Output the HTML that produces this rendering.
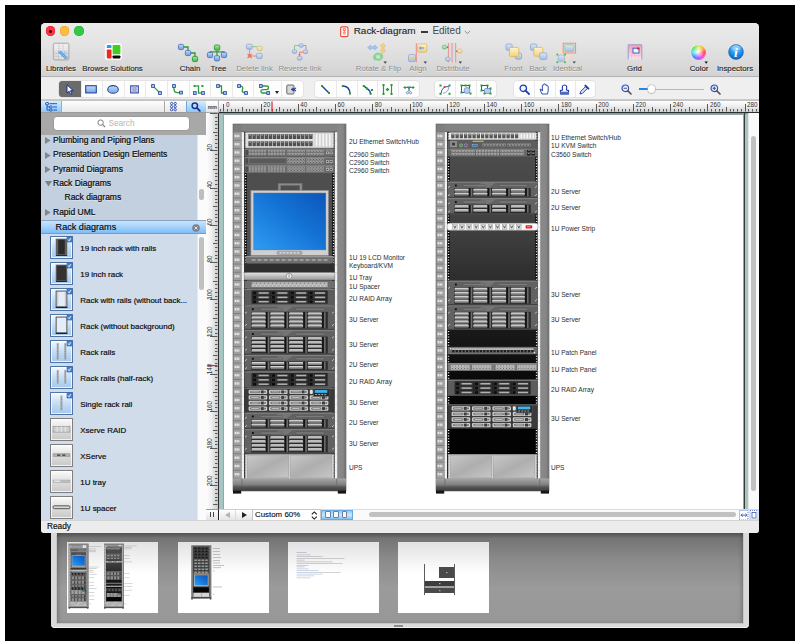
<!DOCTYPE html>
<html><head><meta charset="utf-8"><title>Rack-diagram</title>
<style>
*{box-sizing:border-box;margin:0;padding:0}
html,body{width:800px;height:644px;overflow:hidden;background:#fff;font-family:"Liberation Sans",sans-serif;}
.abs{position:absolute}
#black{position:absolute;left:5px;top:5px;width:790px;height:636px;background:#000}
#win{position:absolute;left:41px;top:23px;width:718px;height:509.5px;background:#ececec;border-radius:4.5px 4.5px 3.5px 3.5px;overflow:hidden}
#tb{position:absolute;left:0;top:0;width:718px;height:54px;background:linear-gradient(#ebebeb,#e4e4e4 40%,#d3d3d3);border-bottom:1px solid #b4b4b4}
.tl{position:absolute;top:3.2px;width:9.6px;height:9.6px;border-radius:50%}
.lbl{position:absolute;top:41.1px;font-size:7.85px;color:#1c1c1c;-webkit-text-stroke:.12px #222;white-space:nowrap;transform:translateX(-50%);text-shadow:0 1px 0 rgba(255,255,255,.6)}
.lbl.dim{color:#8e8e8e;-webkit-text-stroke:0}
#tools{position:absolute;left:0;top:55px;width:718px;height:22px;background:#efefef;border-bottom:1px solid #c9c9c9}
.grp{position:absolute;top:3px;height:16px;background:#fdfdfd;border-radius:3px;box-shadow:0 0 0 0.5px #d8d8d8}
.sep{position:absolute;top:0;width:1px;height:16px;background:#e9e9e9}
svg{position:absolute;overflow:visible}
.t{position:absolute;white-space:nowrap}
</style></head><body>
<div id="black"></div>

<div class="abs" style="left:51px;top:530px;width:698px;height:98px;background:#d9d9d9;border-radius:0 0 4px 4px;box-shadow:inset 0 -1px 0 #f2f2f2"></div>
<div class="abs" style="left:57px;top:531px;width:686px;height:91.5px;background:linear-gradient(#4e4e4e,#5c5c5c 4%,#747474 8%,#8a8a8a 30%,#9b9b9b 62%,#979797);box-shadow: inset 3px 0 4px -2px rgba(0,0,0,.25), inset -3px 0 4px -2px rgba(0,0,0,.25), 0 0 0 1px #c6c6c6"></div>
<div class="abs" style="left:394px;top:625px;width:9px;height:1.5px;background:#8a8a8a"></div>
<div class="abs" style="left:67px;top:542px;width:91px;height:71px;background:linear-gradient(#e2e2e2,#fff 45%);overflow:hidden"><svg style="left:0;top:0" width="91" height="71" viewBox="0 0 91 71"><g transform="scale(0.1753)"><use href="#rk1" x="9" y="9.8"/><use href="#rk2" x="211.5" y="9.8"/></g><rect x="21.92" y="4.35" width="12.27" height=".6" fill="#888" opacity=".55"/><rect x="21.92" y="6.63" width="7.01" height=".6" fill="#888" opacity=".55"/><rect x="21.92" y="8.05" width="7.01" height=".6" fill="#888" opacity=".55"/><rect x="21.92" y="9.47" width="7.01" height=".6" fill="#888" opacity=".55"/><rect x="21.92" y="24.72" width="9.82" height=".6" fill="#888" opacity=".55"/><rect x="21.92" y="26.14" width="7.71" height=".6" fill="#888" opacity=".55"/><rect x="21.92" y="28.25" width="4.21" height=".6" fill="#888" opacity=".55"/><rect x="21.92" y="29.77" width="5.26" height=".6" fill="#888" opacity=".55"/><rect x="21.92" y="31.93" width="7.71" height=".6" fill="#888" opacity=".55"/><rect x="21.92" y="35.51" width="5.26" height=".6" fill="#888" opacity=".55"/><rect x="21.92" y="39.89" width="5.26" height=".6" fill="#888" opacity=".55"/><rect x="21.92" y="43.45" width="5.26" height=".6" fill="#888" opacity=".55"/><rect x="21.92" y="46.38" width="7.71" height=".6" fill="#888" opacity=".55"/><rect x="21.92" y="50.06" width="5.26" height=".6" fill="#888" opacity=".55"/><rect x="21.92" y="53.57" width="5.26" height=".6" fill="#888" opacity=".55"/><rect x="21.92" y="57.25" width="5.26" height=".6" fill="#888" opacity=".55"/><rect x="21.92" y="61.54" width="2.10" height=".6" fill="#888" opacity=".55"/><rect x="57.34" y="3.63" width="12.27" height=".6" fill="#888" opacity=".55"/><rect x="57.34" y="5.10" width="7.71" height=".6" fill="#888" opacity=".55"/><rect x="57.34" y="6.61" width="7.01" height=".6" fill="#888" opacity=".55"/><rect x="57.34" y="13.06" width="5.26" height=".6" fill="#888" opacity=".55"/><rect x="57.34" y="15.96" width="5.26" height=".6" fill="#888" opacity=".55"/><rect x="57.34" y="19.60" width="7.71" height=".6" fill="#888" opacity=".55"/><rect x="57.34" y="31.21" width="5.26" height=".6" fill="#888" opacity=".55"/><rect x="57.34" y="35.51" width="5.26" height=".6" fill="#888" opacity=".55"/><rect x="57.34" y="41.35" width="8.07" height=".6" fill="#888" opacity=".55"/><rect x="57.34" y="44.27" width="8.07" height=".6" fill="#888" opacity=".55"/><rect x="57.34" y="47.87" width="7.71" height=".6" fill="#888" opacity=".55"/><rect x="57.34" y="52.95" width="5.26" height=".6" fill="#888" opacity=".55"/><rect x="57.34" y="61.54" width="2.10" height=".6" fill="#888" opacity=".55"/></svg></div>
<div class="abs" style="left:178px;top:542px;width:91px;height:71px;background:linear-gradient(#e2e2e2,#fff 45%);overflow:hidden"><svg style="left:0;top:0" width="91" height="71" viewBox="0 0 91 71"><rect x="13.2" y="3.2" width="20.2" height="52.4" fill="#7c7c7c"/><rect x="15.1" y="4.5" width="16.2" height="49.4" fill="#2e2e2e"/><rect x="15.399999999999999" y="5.00" width="15.6" height="2.5" fill="#4a4a4a"/><rect x="16.40" y="5.60" width="2.5" height="1.5" fill="#1a1a1a"/><rect x="20.00" y="5.60" width="2.5" height="1.5" fill="#1a1a1a"/><rect x="23.60" y="5.60" width="2.5" height="1.5" fill="#1a1a1a"/><rect x="27.20" y="5.60" width="2.5" height="1.5" fill="#1a1a1a"/><rect x="15.399999999999999" y="8.00" width="15.6" height="2.5" fill="#4a4a4a"/><rect x="16.40" y="8.60" width="2.5" height="1.5" fill="#1a1a1a"/><rect x="20.00" y="8.60" width="2.5" height="1.5" fill="#1a1a1a"/><rect x="23.60" y="8.60" width="2.5" height="1.5" fill="#1a1a1a"/><rect x="27.20" y="8.60" width="2.5" height="1.5" fill="#1a1a1a"/><rect x="15.399999999999999" y="11.00" width="15.6" height="2.5" fill="#4a4a4a"/><rect x="16.40" y="11.60" width="2.5" height="1.5" fill="#1a1a1a"/><rect x="20.00" y="11.60" width="2.5" height="1.5" fill="#1a1a1a"/><rect x="23.60" y="11.60" width="2.5" height="1.5" fill="#1a1a1a"/><rect x="27.20" y="11.60" width="2.5" height="1.5" fill="#1a1a1a"/><rect x="15.399999999999999" y="14.00" width="15.6" height="2.5" fill="#4a4a4a"/><rect x="16.40" y="14.60" width="2.5" height="1.5" fill="#1a1a1a"/><rect x="20.00" y="14.60" width="2.5" height="1.5" fill="#1a1a1a"/><rect x="23.60" y="14.60" width="2.5" height="1.5" fill="#1a1a1a"/><rect x="27.20" y="14.60" width="2.5" height="1.5" fill="#1a1a1a"/><rect x="15.399999999999999" y="17.00" width="15.6" height="2.5" fill="#4a4a4a"/><rect x="16.40" y="17.60" width="2.5" height="1.5" fill="#9a9a9a"/><rect x="20.00" y="17.60" width="2.5" height="1.5" fill="#9a9a9a"/><rect x="23.60" y="17.60" width="2.5" height="1.5" fill="#9a9a9a"/><rect x="27.20" y="17.60" width="2.5" height="1.5" fill="#9a9a9a"/><rect x="15.399999999999999" y="20.00" width="15.6" height="2.5" fill="#4a4a4a"/><rect x="16.40" y="20.60" width="2.5" height="1.5" fill="#9a9a9a"/><rect x="20.00" y="20.60" width="2.5" height="1.5" fill="#9a9a9a"/><rect x="23.60" y="20.60" width="2.5" height="1.5" fill="#9a9a9a"/><rect x="27.20" y="20.60" width="2.5" height="1.5" fill="#9a9a9a"/><rect x="15.399999999999999" y="23.00" width="15.6" height="2.5" fill="#4a4a4a"/><rect x="16.40" y="23.60" width="2.5" height="1.5" fill="#9a9a9a"/><rect x="20.00" y="23.60" width="2.5" height="1.5" fill="#9a9a9a"/><rect x="23.60" y="23.60" width="2.5" height="1.5" fill="#9a9a9a"/><rect x="27.20" y="23.60" width="2.5" height="1.5" fill="#9a9a9a"/><rect x="15.399999999999999" y="26.00" width="15.6" height="2.5" fill="#4a4a4a"/><rect x="16.40" y="26.60" width="2.5" height="1.5" fill="#9a9a9a"/><rect x="20.00" y="26.60" width="2.5" height="1.5" fill="#9a9a9a"/><rect x="23.60" y="26.60" width="2.5" height="1.5" fill="#9a9a9a"/><rect x="27.20" y="26.60" width="2.5" height="1.5" fill="#9a9a9a"/><rect x="15.399999999999999" y="29.00" width="15.6" height="2.5" fill="#4a4a4a"/><rect x="16.40" y="29.60" width="2.5" height="1.5" fill="#9a9a9a"/><rect x="20.00" y="29.60" width="2.5" height="1.5" fill="#9a9a9a"/><rect x="23.60" y="29.60" width="2.5" height="1.5" fill="#9a9a9a"/><rect x="27.20" y="29.60" width="2.5" height="1.5" fill="#9a9a9a"/><rect x="28.2" y="26.599999999999998" width="1.6" height="1.2" fill="#3ab6f2"/><rect x="15.399999999999999" y="31.4" width="15.6" height="1" fill="#c8a070"/><rect x="15.799999999999999" y="32.6" width="14.799999999999999" height="11.8" fill="#c8c8c8"/><rect x="16.599999999999998" y="33.2" width="13.2" height="10.2" fill="url(#scr)"/><rect x="15.6" y="45.6" width="15.2" height="4.6" fill="#050505"/><rect x="15.399999999999999" y="50.800000000000004" width="15.6" height="4" fill="#d6d6d6"/><rect x="23.2" y="50.800000000000004" width=".5" height="4" fill="#888"/><rect x="13.2" y="55.0" width="20.2" height="1.6" fill="#4a4a4a"/><rect x="13.2" y="56.6" width="1.6" height=".8" fill="#111"/><rect x="31.799999999999997" y="56.6" width="1.6" height=".8" fill="#111"/><rect x="35" y="6.2" width="7" height=".7" fill="#888" opacity=".7"/><rect x="35" y="9" width="7" height=".7" fill="#888" opacity=".7"/><rect x="35" y="12" width="7" height=".7" fill="#888" opacity=".7"/><rect x="35" y="15" width="8" height=".7" fill="#888" opacity=".7"/><rect x="35" y="18" width="7" height=".7" fill="#888" opacity=".7"/><rect x="35" y="20.6" width="7" height=".7" fill="#888" opacity=".7"/><rect x="35" y="23" width="11" height=".7" fill="#888" opacity=".7"/><rect x="35" y="25.4" width="8" height=".7" fill="#888" opacity=".7"/><rect x="35" y="28.6" width="1.5" height=".7" fill="#888" opacity=".7"/><rect x="35" y="44.6" width="9" height=".7" fill="#888" opacity=".7"/><rect x="35" y="51.8" width="1.2" height=".7" fill="#888" opacity=".7"/></svg></div>
<div class="abs" style="left:288px;top:542px;width:91px;height:71px;background:linear-gradient(#e2e2e2,#fff 45%);overflow:hidden"><svg style="left:0;top:0" width="91" height="71" viewBox="0 0 91 71"><rect x="8.6" y="10.3" width="10" height="0.6" fill="#444" opacity=".42"/><rect x="8.6" y="12.6" width="14" height="0.6" fill="#36c" opacity=".42"/><rect x="8.6" y="14.2" width="26" height="0.6" fill="#555" opacity=".42"/><rect x="8.6" y="16" width="48" height="0.6" fill="#555" opacity=".42"/><rect x="8.6" y="17.8" width="8" height="0.6" fill="#555" opacity=".42"/><rect x="8.6" y="19.6" width="36" height="0.6" fill="#555" opacity=".42"/><rect x="8.6" y="21.4" width="46" height="0.6" fill="#555" opacity=".42"/><rect x="8.6" y="23" width="12" height="0.6" fill="#555" opacity=".42"/><rect x="8.6" y="24.6" width="8" height="0.6" fill="#555" opacity=".42"/><rect x="8.6" y="26.6" width="12" height="0.6" fill="#36c" opacity=".42"/><rect x="8.6" y="28.4" width="22" height="0.6" fill="#36c" opacity=".42"/><rect x="8.6" y="30" width="44" height="0.6" fill="#555" opacity=".42"/><rect x="8.6" y="31.8" width="26" height="0.6" fill="#36c" opacity=".42"/><rect x="8.6" y="33.6" width="18" height="0.6" fill="#36c" opacity=".42"/><rect x="8.6" y="35.6" width="14" height="0.6" fill="#555" opacity=".42"/></svg></div>
<div class="abs" style="left:398px;top:542px;width:91px;height:71px;background:linear-gradient(#e2e2e2,#fff 45%);overflow:hidden"><svg style="left:0;top:0" width="91" height="71" viewBox="0 0 91 71"><rect x="26" y="22" width="0.8" height="31" fill="#333"/><rect x="56" y="22" width="0.8" height="31" fill="#333"/><rect x="41" y="25" width="15" height="11" fill="#4a4a4a"/><rect x="48" y="30" width="1.5" height="1.2" fill="#aaa"/><rect x="27" y="39" width="29" height="5.5" fill="#3c3c3c"/><rect x="41" y="41" width="1.5" height="1.2" fill="#aaa"/><rect x="27" y="45.5" width="29" height="5.5" fill="#4a4a4a"/><rect x="41" y="48" width="1.5" height="1.2" fill="#aaa"/></svg></div>
<div id="win">
<div id="tb">
<div class="tl" style="left:4.6000000000000005px;background:#fc3340;box-shadow:inset 0 0 0 .5px #e01f2c"></div>
<div class="tl" style="left:18.8px;background:#fdbc40;box-shadow:inset 0 0 0 .5px #dfa023"></div>
<div class="tl" style="left:33.1px;background:#34c84a;box-shadow:inset 0 0 0 .5px #27aa35"></div>
<div class="abs" style="left:7.7px;top:6.6px;width:3.6px;height:3.6px;border-radius:50%;background:#4d0000"></div>
<svg style="left:299.3px;top:2.6px" width="8.6" height="11.4" viewBox="0 0 11 14"><rect x=".8" y=".8" width="9.4" height="12.4" rx="1.8" fill="#fff" stroke="#e8503a" stroke-width="1.5"/><rect x="4" y="3.2" width="3" height="2.4" fill="none" stroke="#e8503a" stroke-width=".9"/><path d="M5.5 5.6v2.2M3.5 9.8h4M3.5 7.8h4" stroke="#e8503a" stroke-width=".9" fill="none"/></svg>
<div class="t" style="left:312.7px;top:2.3px;font-size:9.95px;color:#2a2a2a;-webkit-text-stroke:.15px #2a2a2a">Rack-diagram</div>
<div class="abs" style="left:380px;top:8.2px;width:7px;height:1.4px;background:#3a3a3a"></div>
<div class="t" style="left:391.4px;top:2.3px;font-size:10px;color:#484848">Edited</div>
<svg style="left:423.2px;top:6.6px" width="7" height="5" viewBox="0 0 7 5"><path d="M.8 1l2.7 2.6L6.2 1" stroke="#8a8a8a" stroke-width="1" fill="none"/></svg>
<div class="lbl" style="left:20px">Libraries</div>
<div class="lbl" style="left:71.5px">Browse Solutions</div>
<div class="lbl" style="left:149px">Chain</div>
<div class="lbl" style="left:177.5px">Tree</div>
<div class="lbl dim" style="left:213.5px">Delete link</div>
<div class="lbl dim" style="left:259px">Reverse link</div>
<div class="lbl dim" style="left:337.5px">Rotate &amp; Flip</div>
<div class="lbl dim" style="left:377px">Align</div>
<div class="lbl dim" style="left:412px">Distribute</div>
<div class="lbl dim" style="left:472.5px">Front</div>
<div class="lbl dim" style="left:497px">Back</div>
<div class="lbl dim" style="left:526.5px">Identical</div>
<div class="lbl" style="left:593.5px">Grid</div>
<div class="lbl" style="left:658px">Color</div>
<div class="lbl" style="left:694px">Inspectors</div>
<div class="abs" style="left:649.5px;top:21.5px;width:15px;height:15px;border-radius:50%;background:conic-gradient(from 90deg,#ff2a2a,#ff2ad0,#8a3aff,#2a6aff,#2ad8e8,#2ae04a,#d8e82a,#ffa02a,#ff2a2a)"></div><svg style="left:0;top:0" width="718" height="54" viewBox="41 23 718 54"><defs><linearGradient id="nb" x1="0" y1="0" x2="0" y2="1"><stop offset="0" stop-color="#c4daf8"/><stop offset="1" stop-color="#6f9ade"/></linearGradient><linearGradient id="ng" x1="0" y1="0" x2="0" y2="1"><stop offset="0" stop-color="#a4ec9c"/><stop offset="1" stop-color="#3fba44"/></linearGradient><linearGradient id="ny" x1="0" y1="0" x2="0" y2="1"><stop offset="0" stop-color="#fdf0b8"/><stop offset="1" stop-color="#eec050"/></linearGradient><linearGradient id="nbd" x1="0" y1="0" x2="0" y2="1"><stop offset="0" stop-color="#dfe8f6"/><stop offset="1" stop-color="#a6bce2"/></linearGradient><linearGradient id="nyd" x1="0" y1="0" x2="0" y2="1"><stop offset="0" stop-color="#fdf4d0"/><stop offset="1" stop-color="#f0d27e"/></linearGradient><linearGradient id="ngd" x1="0" y1="0" x2="0" y2="1"><stop offset="0" stop-color="#d2f0d2"/><stop offset="1" stop-color="#86cf92"/></linearGradient><linearGradient id="gg" x1="0" y1="0" x2="0" y2="1"><stop offset="0" stop-color="#f3a0b2"/><stop offset=".6" stop-color="#f8ccd6"/><stop offset="1" stop-color="#f6e6ee"/></linearGradient><radialGradient id="cw"><stop offset="0" stop-color="#fff"/><stop offset=".4" stop-color="#fff" stop-opacity=".6"/><stop offset="1" stop-color="#fff" stop-opacity="0"/></radialGradient><radialGradient id="ig" cx=".5" cy=".25" r=".85"><stop offset="0" stop-color="#7fd0ff"/><stop offset=".55" stop-color="#1f8ae4"/><stop offset="1" stop-color="#0c55b0"/></radialGradient><linearGradient id="libg" x1="0" y1="0" x2="0" y2="1"><stop offset="0" stop-color="#ececec"/><stop offset="1" stop-color="#cfcfcf"/></linearGradient></defs><rect x="53.3" y="43.2" width="15.6" height="16.8" rx="1.6" fill="url(#libg)" stroke="#9c9c9c" stroke-width=".8"/><rect x="55" y="44.9" width="12.4" height="1.1" fill="#f0f0f0"/><rect x="55" y="46.8" width="12.4" height="1.1" fill="#f0f0f0"/><rect x="55" y="48.699999999999996" width="12.4" height="1.1" fill="#f0f0f0"/><path d="M59 44.6v5.6M63 44.6v5.6" stroke="#b4b4b4" stroke-width=".5"/><rect x="54.8" y="50.8" width="12.8" height="8.2" fill="#dedede"/><clipPath id="libc"><rect x="58.6" y="50.8" width="9" height="8.2"/></clipPath><g clip-path="url(#libc)"><path d="M57 49l12 12" stroke="#58a4f0" stroke-width="3.2"/><path d="M61.5 48.5l9 9" stroke="#bcd8f6" stroke-width="2"/><path d="M55.5 51.5l9 9" stroke="#eef4fc" stroke-width="1.6"/><path d="M57 49l12 12" stroke="#fff" stroke-width=".6" stroke-dasharray="1.4 1.6"/></g><path d="M54.8 53.5h12.8M54.8 56.3h12.8M58.6 50.8v8.2M61.6 50.8v8.2M64.6 50.8v8.2" stroke="#a6a6a6" stroke-width=".4" fill="none"/><rect x="104.8" y="43.1" width="17.3" height="16.9" rx="2.6" fill="#fff" stroke="#dcdcdc" stroke-width=".5"/><rect x="106.8" y="45" width="4.7" height="3.1" rx=".9" fill="#1e9cf4"/><rect x="106.8" y="49.4" width="4.7" height="9" rx=".9" fill="#f4261a"/><rect x="112.6" y="45" width="7.8" height="9.2" rx=".9" fill="#40cf20"/><rect x="112.6" y="55.4" width="7.8" height="3" rx=".9" fill="#0a0a0a"/><path d="M184 47h4v3.5M191 53h4v3.5" stroke="#2a9a38" stroke-width="1.3" fill="none"/><rect x="178.4" y="44.4" width="5.2" height="5.2" rx="1.3" fill="url(#nb)" stroke="#3f6db8" stroke-width=".8"/><rect x="185.4" y="50.4" width="5.2" height="5.2" rx="1.3" fill="url(#nb)" stroke="#3f6db8" stroke-width=".8"/><rect x="192.4" y="56.4" width="5.2" height="5.2" rx="1.3" fill="url(#ng)" stroke="#2a8a30" stroke-width=".8"/><path d="M217 51v4.5M210 53v-1.2h14V53" stroke="#2a9a38" stroke-width="1.2" fill="none"/><rect x="214.4" y="45.0" width="5.4" height="5.2" rx="1.3" fill="url(#ng)" stroke="#2a8a30" stroke-width=".8"/><rect x="207.4" y="52.4" width="5.2" height="5.2" rx="1.3" fill="url(#nb)" stroke="#3f6db8" stroke-width=".8"/><rect x="221.4" y="52.4" width="5.2" height="5.2" rx="1.3" fill="url(#nb)" stroke="#3f6db8" stroke-width=".8"/><rect x="214.4" y="55.699999999999996" width="5.2" height="5.2" rx="1.3" fill="url(#nb)" stroke="#3f6db8" stroke-width=".8"/><path d="M252 46.6h5" stroke="#7fca8a" stroke-width="1"/><path d="M249.6 49v7h7" stroke="#ec8a7a" stroke-width="1" fill="none"/><path d="M247.6 54l4 4m0-4l-4 4" stroke="#ee6a55" stroke-width="1.1" fill="none"/><rect x="246.4" y="44.199999999999996" width="5.8" height="5.0" rx="1.3" fill="url(#nbd)" stroke="#8aa4d0" stroke-width=".8"/><rect x="257.4" y="46.4" width="4.6" height="4.2" rx="1.3" fill="url(#nyd)" stroke="#d8b860" stroke-width=".8"/><rect x="256.4" y="53.4" width="5.8" height="5.2" rx="1.3" fill="url(#nbd)" stroke="#8aa4d0" stroke-width=".8"/><path d="M294.5 50v-4.5h5" stroke="#7fd08a" stroke-width="1" fill="none"/><path d="M303 45.5h3v4.5" stroke="#e07ad0" stroke-width="1" fill="none"/><path d="M303.5 52.2h-4v4" stroke="#ee7a6a" stroke-width="1" fill="none"/><path d="M297.8 54.2l1.7 2.2 1.7-2.2z" fill="#ee7a6a"/><rect x="299.2" y="43.8" width="4.0" height="3.4" rx="1.3" fill="url(#nbd)" stroke="#8aa4d0" stroke-width=".8"/><rect x="292.4" y="49.8" width="4.2" height="3.6" rx="1.3" fill="url(#nbd)" stroke="#8aa4d0" stroke-width=".8"/><rect x="303.4" y="50.0" width="4.2" height="3.6" rx="1.3" fill="url(#nbd)" stroke="#8aa4d0" stroke-width=".8"/><rect x="297.4" y="56.4" width="4.6" height="3.6" rx="1.3" fill="url(#nbd)" stroke="#8aa4d0" stroke-width=".8"/><path d="M367.6 47.5l3-2.6v1.6h4v-1.6l3 2.6-3 2.6v-1.6h-4v1.6z" fill="#a6c6ee" stroke="#86a8dc" stroke-width=".5"/><path d="M383 43.2l2.5 2.8h-1.5v4.6h1.5L383 53.4l-2.5-2.8h1.5V46h-1.5z" fill="#f6d67e" stroke="#dcb24e" stroke-width=".5"/><path d="M373.6 58.5a4.4 4.4 0 0 1 7-4.6l1-1v3.4h-3.4l1-1a2.6 2.6 0 0 0-4 2.8z" fill="#8fd89a" stroke="#6cc07a" stroke-width=".4"/><path d="M382.6 55a4.4 4.4 0 0 1-7 4.6l-1 1v-3.4h3.4l-1 1a2.6 2.6 0 0 0 4-2.8z" fill="#8fd89a" stroke="#6cc07a" stroke-width=".4"/><rect x="376" y="54.8" width="4.2" height="4" rx=".8" fill="#c4ecc8" stroke="#86cf92" stroke-width=".5"/><path d="M383.5 61.6h3.4l-1.7 2.2z" fill="#444"/><path d="M416.3 43v19.5" stroke="#ee8a8a" stroke-width="1"/><rect x="417.7" y="44.0" width="9.1" height="8.2" rx="1.3" fill="url(#nyd)" stroke="#d8b860" stroke-width=".8"/><path d="M418.6 48l2.6-2.2v1.4h3v1.6h-3v1.4z" fill="#7aaae2"/><rect x="408.59999999999997" y="54.6" width="7.0" height="7.0" rx="1.3" fill="url(#nbd)" stroke="#8aa4d0" stroke-width=".8"/><path d="M415.2 58l-2.4-2v1.3h-2.4v1.4h2.4V60z" fill="#f2cc5a"/><path d="M423.6 61.6h3.4l-1.7 2.2z" fill="#444"/><rect x="448.4" y="43" width="7.3" height="19.5" fill="#dcdcdc" opacity=".7"/><path d="M448.4 43v19.5M452 43v19.5M455.7 43v19.5" stroke="#ee8a8a" stroke-width=".9"/><rect x="442.4" y="45.199999999999996" width="4.2" height="3.8" rx="1.6" fill="url(#ngd)" stroke="#6ab878" stroke-width=".8"/><path d="M447 46.2l1.6 1-1.6 1z" fill="#666"/><rect x="457.59999999999997" y="49.199999999999996" width="4.2" height="3.8" rx="1.2" fill="url(#nyd)" stroke="#d8b860" stroke-width=".8"/><path d="M457.2 50.2l-1.6 1 1.6 1z" fill="#666"/><rect x="445.4" y="57.199999999999996" width="4.6" height="3.8" rx="1.6" fill="url(#nbd)" stroke="#8aa4d0" stroke-width=".8"/><path d="M458.6 61.6h3.4l-1.7 2.2z" fill="#444"/><rect x="506.0" y="44.0" width="6.2" height="6.2" rx="1.6" fill="url(#nbd)" stroke="#8aa4d0" stroke-width=".8"/><rect x="515.4" y="53.0" width="6.2" height="6.2" rx="1.6" fill="url(#nbd)" stroke="#8aa4d0" stroke-width=".8"/><rect x="509.4" y="47.4" width="9.4" height="9.2" rx="1.6" fill="url(#nyd)" stroke="#d8b860" stroke-width=".8"/><rect x="530.4" y="44.0" width="6.4" height="6.2" rx="1.6" fill="url(#nbd)" stroke="#8aa4d0" stroke-width=".8"/><rect x="533.8" y="47.4" width="9.0" height="8.8" rx="1.6" fill="url(#nyd)" stroke="#d8b860" stroke-width=".8"/><rect x="539.8" y="52.8" width="7.0" height="6.8" rx="1.6" fill="url(#nbd)" stroke="#8aa4d0" stroke-width=".8"/><path d="M557.5 55L563 43.4h12.6V53L565 62.4z" fill="#f8dcc8" opacity=".6"/><rect x="563.2" y="43.2" width="12.4" height="9.8" fill="#f2d6d6" stroke="#e68a8a" stroke-width=".9"/><rect x="564.8" y="44.8" width="9.2" height="6.8" rx="1" fill="url(#nbd)" stroke="#86cf92" stroke-width=".8"/><rect x="558" y="55" width="6.6" height="6.6" rx="2.4" fill="url(#nbd)" stroke="#9ab0d8" stroke-width=".7"/><rect x="556.5" y="53.7" width="1.8" height="1.8" fill="#34c048"/><rect x="564.1" y="53.7" width="1.8" height="1.8" fill="#34c048"/><rect x="556.5" y="61.300000000000004" width="1.8" height="1.8" fill="#34c048"/><rect x="564.1" y="61.300000000000004" width="1.8" height="1.8" fill="#34c048"/><path d="M572.5 61.4h3.4l-1.7 2.2z" fill="#444"/><rect x="628.2" y="44.8" width="13.6" height="14.6" fill="url(#gg)"/><path d="M628.2 59.4V44.8h13.6v14.6" stroke="#8a94d8" stroke-width=".9" fill="none"/><path d="M631.6 45v14.4M635 45v14.4M638.4 45v14.4M628.4 48.4h13.4M628.4 52h13.4M628.4 55.6h13.4" stroke="#f0b0c0" stroke-width=".4"/><rect x="633" y="48.2" width="6" height="4.8" fill="#f4f6ff" stroke="#4a5cc4" stroke-width="1"/><rect x="637" y="47.4" width="2.4" height="2.2" rx=".6" fill="#e62626"/><circle cx="698" cy="52" r="7.5" fill="url(#cw)"/><circle cx="698" cy="52" r="7.5" fill="none" stroke="#fff" stroke-opacity=".5" stroke-width=".6"/><path d="M704.5 61.6h3.4l-1.7 2.2z" fill="#111"/><circle cx="736" cy="52" r="7.4" fill="url(#ig)" stroke="#1a60b0" stroke-width=".6"/><ellipse cx="736" cy="48" rx="5" ry="3" fill="#fff" opacity=".25"/><text x="735.8" y="56.6" font-family="Liberation Serif" font-style="italic" font-weight="bold" font-size="13.5" fill="#fff" text-anchor="middle">i</text></svg>
</div>
<div id="tools">
<div class="grp" style="left:18px;width:243.5px">
<div class="abs" style="left:0;top:0;width:21.5px;height:16px;background:#6b6b6b;border-radius:3px 0 0 3px"></div>
<div class="sep" style="left:21.5px"></div>
<div class="sep" style="left:43px"></div>
<div class="sep" style="left:64.7px"></div>
<div class="sep" style="left:86.30000000000001px"></div>
<div class="sep" style="left:108px"></div>
<div class="sep" style="left:129.6px"></div>
<div class="sep" style="left:151.2px"></div>
<div class="sep" style="left:172.8px"></div>
<div class="sep" style="left:194.4px"></div>
<div class="sep" style="left:221.5px"></div>
</div>
<div class="grp" style="left:274px;width:104px">
<div class="sep" style="left:20.8px"></div>
<div class="sep" style="left:41.6px"></div>
<div class="sep" style="left:62.400000000000006px"></div>
<div class="sep" style="left:83.2px"></div>
</div>
<div class="grp" style="left:394px;width:61px">
<div class="sep" style="left:20.333333333333332px"></div>
<div class="sep" style="left:40.666666666666664px"></div>
</div>
<div class="grp" style="left:473px;width:81px">
<div class="sep" style="left:20.25px"></div>
<div class="sep" style="left:40.5px"></div>
<div class="sep" style="left:60.75px"></div>
</div>
<svg style="left:24.75px;top:5.5px" width="8" height="11" viewBox="0 0 8 11"><path d="M1 .8v8.4l2.1-2 1.5 3.3 1.4-.6-1.5-3.2h2.8z" fill="#fff" stroke="#1a2f9a" stroke-width="1" stroke-linejoin="round"/></svg>
<svg style="left:44.25px;top:6.5px" width="12" height="9" viewBox="0 0 12 9"><defs><linearGradient id="shp" x1="0" y1="0" x2="0" y2="1"><stop offset="0" stop-color="#c2d8f6"/><stop offset="1" stop-color="#7aa6e6"/></linearGradient></defs><rect x=".7" y=".7" width="10.6" height="7.2" fill="url(#shp)" stroke="#23459e" stroke-width="1.1"/></svg>
<svg style="left:65.85px;top:6.5px" width="12" height="9" viewBox="0 0 12 9"><ellipse cx="6" cy="4.4" rx="5.3" ry="3.8" fill="url(#shp)" stroke="#23459e" stroke-width="1.1"/></svg>
<svg style="left:89.0px;top:6.5px" width="9" height="9" viewBox="0 0 9 9"><rect x=".7" y=".9" width="7.6" height="7" fill="#f4f4fc" stroke="#23459e" stroke-width="1.1"/><rect x="3" y="1.6" width="3" height="5.6" fill="#b8b0d4"/><path d="M2.8 1v6.8M6.2 1v6.8" stroke="#5a6ab8" stroke-width=".6"/></svg>
<svg style="left:109.65px;top:5.5px" width="11" height="11" viewBox="0 0 11 11"><path d="M2.4 2.4L8.6 8.6" stroke="#2a9a3a" stroke-width="1.3"/><rect x="0.6" y="0.6" width="2.8" height="2.8" fill="#9ec0f0" stroke="#23459e" stroke-width=".8"/><rect x="7.6" y="7.6" width="2.8" height="2.8" fill="#9ec0f0" stroke="#23459e" stroke-width=".8"/></svg>
<svg style="left:131.3px;top:5.5px" width="11" height="11" viewBox="0 0 11 11"><path d="M2 2.4v2.6q0 3.6 3.6 3.6h3" stroke="#2a9a3a" stroke-width="1.3" fill="none"/><rect x="0.6" y="0.6" width="2.8" height="2.8" fill="#9ec0f0" stroke="#23459e" stroke-width=".8"/><rect x="7.6" y="7.2" width="2.8" height="2.8" fill="#9ec0f0" stroke="#23459e" stroke-width=".8"/></svg>
<svg style="left:152.4px;top:5.5px" width="12" height="11" viewBox="0 0 12 11"><path d="M2 2h3.5v7H10" stroke="#2a9a3a" stroke-width="1.2" fill="none" stroke-dasharray="1.6 .9"/><path d="M3.4 2H5.5v7H8" stroke="#2a9a3a" stroke-width="1.2" fill="none"/><rect x="0.4" y="7.6" width="2.8" height="2.8" fill="#9ec0f0" stroke="#23459e" stroke-width=".8"/><rect x="8.6" y="7.6" width="2.8" height="2.8" fill="#9ec0f0" stroke="#23459e" stroke-width=".8"/><rect x=".6" y="1" width="2" height="2" fill="#2a9a3a"/><rect x="8.4" y="1" width="2" height="2" fill="#2a9a3a"/></svg>
<svg style="left:174.5px;top:5.5px" width="11" height="11" viewBox="0 0 11 11"><path d="M2 2h3.5v7H9" stroke="#2a9a3a" stroke-width="1.3" fill="none"/><rect x="0.6" y="0.6" width="2.8" height="2.8" fill="#9ec0f0" stroke="#23459e" stroke-width=".8"/><rect x="7.6" y="7.6" width="2.8" height="2.8" fill="#9ec0f0" stroke="#23459e" stroke-width=".8"/></svg>
<svg style="left:196.1px;top:5.5px" width="11" height="11" viewBox="0 0 11 11"><path d="M2 2q5 0 3.5 3.4T9 9" stroke="#2a9a3a" stroke-width="1.3" fill="none"/><rect x="0.6" y="0.6" width="2.8" height="2.8" fill="#9ec0f0" stroke="#23459e" stroke-width=".8"/><rect x="7.6" y="7.6" width="2.8" height="2.8" fill="#9ec0f0" stroke="#23459e" stroke-width=".8"/></svg>
<svg style="left:217.95px;top:5.5px" width="11" height="11" viewBox="0 0 11 11"><path d="M2 2h5.5q2 0 2 1.8t-2 1.8H4q-2 0-2 1.8T4 9h5" stroke="#2a9a3a" stroke-width="1.3" fill="none"/><rect x="0.4" y="0.6" width="2.8" height="2.8" fill="#9ec0f0" stroke="#23459e" stroke-width=".8"/><rect x="7.8" y="7.6" width="2.8" height="2.8" fill="#9ec0f0" stroke="#23459e" stroke-width=".8"/></svg>
<svg style="left:234.0px;top:12.7px" width="4" height="3" viewBox="0 0 4 3"><path d="M0 0h4L2 3z" fill="#222"/></svg>
<svg style="left:244.5px;top:5.5px" width="11" height="11" viewBox="0 0 11 11"><rect x=".8" y="1" width="7.2" height="9" rx="1" fill="#d8d8d8" stroke="#6a6a6a" stroke-width="1"/><path d="M6.5 3.8l3.4 3.2M9.9 3.8L6.5 7M5 5.4h4" stroke="#1a3fb0" stroke-width="1.1"/></svg>
<svg style="left:278.9px;top:5.5px" width="11" height="11" viewBox="0 0 11 11"><path d="M2 2L9 9" stroke="#1f3fa8" stroke-width="1.4"/><rect x="1" y="1" width="2" height="2" fill="#2a9a3a"/><rect x="8" y="8" width="2" height="2" fill="#2a9a3a"/></svg>
<svg style="left:299.7px;top:5.5px" width="11" height="11" viewBox="0 0 11 11"><path d="M1.5 2Q8.5 2 9 9.5" stroke="#1f3fa8" stroke-width="1.4" fill="none"/><rect x="0.8" y="1" width="2" height="2" fill="#2a9a3a"/><rect x="8" y="8.5" width="2" height="2" fill="#2a9a3a"/></svg>
<svg style="left:320.5px;top:5.5px" width="11" height="11" viewBox="0 0 11 11"><path d="M1.8 2L5 4.6Q8.4 6.4 8.6 9.8M5 4.6L2.6 2.6" stroke="#1f3fa8" stroke-width="1.3" fill="none"/><rect x="0.8" y="1" width="2" height="2" fill="#2a9a3a"/><rect x="4" y="3.5999999999999996" width="2" height="2" fill="#2a9a3a"/><rect x="9" y="5" width="2" height="2" fill="#2a9a3a"/><rect x="7.6" y="8.8" width="2" height="2" fill="#2a9a3a"/></svg>
<svg style="left:341.3px;top:5.5px" width="11" height="11" viewBox="0 0 11 11"><path d="M1.5 1v9M9.5 1v9" stroke="#2a9a3a" stroke-width="1.2"/><path d="M3.5 5.5l2-1.8v3.6zM7.5 5.5l-2-1.8v3.6z" fill="#2a9a3a"/><rect x="0.5" y="0" width="2" height="2" fill="#2a9a3a"/><rect x="0.5" y="9" width="2" height="2" fill="#2a9a3a"/><rect x="8.5" y="0" width="2" height="2" fill="#2a9a3a"/><rect x="8.5" y="9" width="2" height="2" fill="#2a9a3a"/></svg>
<svg style="left:361.6px;top:5.5px" width="12" height="11" viewBox="0 0 12 11"><path d="M.5 3.5h11" stroke="#2a9a3a" stroke-width="1.1"/><path d="M4.4 2.2L7 7.6M7.6 2.2L5 7.6" stroke="#6a82c0" stroke-width=".9"/><circle cx="4.4" cy="8.8" r="1.1" fill="none" stroke="#6a82c0" stroke-width=".8"/><circle cx="7.6" cy="8.8" r="1.1" fill="none" stroke="#6a82c0" stroke-width=".8"/><rect x="1" y="2.5" width="2" height="2" fill="#2a9a3a"/><rect x="5" y="2.5" width="2" height="2" fill="#2a9a3a"/><rect x="9" y="2.5" width="2" height="2" fill="#2a9a3a"/></svg>
<svg style="left:398.17px;top:5.5px" width="12" height="11" viewBox="0 0 12 11"><path d="M2.2 9.2Q2.4 2.6 9.8 2.4" stroke="#3a58b8" stroke-width="1" fill="none"/><path d="M9.8 2.4Q10 8 4 9.4" stroke="#3a58b8" stroke-width=".8" fill="none" opacity=".7"/><circle cx="5.6" cy="3" r="1.1" fill="#e8382a"/><rect x="0.5" y="0.5" width="2" height="2" fill="#2a9a3a"/><rect x="9.5" y="0.5" width="2" height="2" fill="#2a9a3a"/><rect x="0.5" y="8.8" width="2" height="2" fill="#2a9a3a"/><rect x="9.5" y="8.8" width="2" height="2" fill="#2a9a3a"/></svg>
<svg style="left:418.5px;top:5.5px" width="12" height="11" viewBox="0 0 12 11"><rect x="1.5" y="1.5" width="8" height="7" fill="none" stroke="#1f3fa8" stroke-width=".9"/><circle cx="7" cy="6.5" r="3" fill="#b8cdee" stroke="#6f8fc8" stroke-width=".8"/><rect x="0.5" y="0.5" width="2" height="2" fill="#2a9a3a"/><rect x="8.5" y="0.5" width="2" height="2" fill="#2a9a3a"/><rect x="0.5" y="7.5" width="2" height="2" fill="#2a9a3a"/><rect x="9.5" y="8.5" width="2" height="2" fill="#2a9a3a"/><rect x="4.5" y="0.5" width="2" height="2" fill="#2a9a3a"/></svg>
<svg style="left:438.83px;top:5.5px" width="12" height="11" viewBox="0 0 12 11"><rect x="1.5" y="1.5" width="6" height="5" fill="none" stroke="#1f3fa8" stroke-width=".9"/><rect x="4.5" y="4.5" width="6" height="5" rx="1" fill="#b8cdee" stroke="#6f8fc8" stroke-width=".8"/><rect x="0.5" y="0.5" width="2" height="2" fill="#2a9a3a"/><rect x="6.5" y="0.5" width="2" height="2" fill="#2a9a3a"/><rect x="0.5" y="5.5" width="2" height="2" fill="#2a9a3a"/><rect x="9.5" y="8.5" width="2" height="2" fill="#2a9a3a"/><rect x="9.5" y="3.5" width="2" height="2" fill="#2a9a3a"/><rect x="3.5" y="8.5" width="2" height="2" fill="#2a9a3a"/></svg>
<svg style="left:477.62px;top:5.5px" width="11" height="11" viewBox="0 0 11 11"><circle cx="4.3" cy="4.3" r="3.2" fill="#eef4ff" stroke="#1f3fa8" stroke-width="1.3"/><path d="M6.6 6.6L10 10" stroke="#1f3fa8" stroke-width="1.8" stroke-linecap="round"/></svg>
<svg style="left:497.88px;top:5.0px" width="11" height="12" viewBox="0 0 11 12"><path d="M3 11L1 6.5 2 6l1.4 2V2.2q.8-.9 1.4 0V1.2q.8-.8 1.5 0v.8q.8-.8 1.5 0v1q.9-.6 1.4.2V8L8.5 11z" fill="#fff" stroke="#1f3fa8" stroke-width=".9" stroke-linejoin="round"/></svg>
<svg style="left:518.12px;top:5.5px" width="11" height="11" viewBox="0 0 11 11"><path d="M3.6 6Q2.4 1 5.5 1T7.4 6l2.2 .6v1.6H1.4V6.6z" fill="#fff" stroke="#1f3fa8" stroke-width="1.1" stroke-linejoin="round"/><rect x="1" y="9.2" width="9" height="1.4" fill="#1f3fa8"/></svg>
<svg style="left:538.38px;top:5.5px" width="11" height="11" viewBox="0 0 11 11"><path d="M1 10l.6-2.4L6.6 2.6l1.8 1.8-5 5z" fill="#dfe8ff" stroke="#1f3fa8" stroke-width="1"/><path d="M6.4 1.6l3 3" stroke="#1f3fa8" stroke-width="2" stroke-linecap="round"/></svg>
<svg style="left:580.0px;top:6.0px" width="11" height="11" viewBox="0 0 11 11"><circle cx="4.3" cy="4.3" r="3.3" fill="#e6eeff" stroke="#3a55a8" stroke-width="1.2"/><path d="M2.6 4.3h3.4" stroke="#3a55a8" stroke-width="1.1"/><path d="M6.8 6.8L10 10" stroke="#555" stroke-width="1.7" stroke-linecap="round"/></svg>
<svg style="left:669.0px;top:6.0px" width="11" height="11" viewBox="0 0 11 11"><circle cx="4.3" cy="4.3" r="3.3" fill="#e6eeff" stroke="#3a55a8" stroke-width="1.2"/><path d="M2.6 4.3h3.4M4.3 2.6v3.4" stroke="#3a55a8" stroke-width="1.1"/><path d="M6.8 6.8L10 10" stroke="#555" stroke-width="1.7" stroke-linecap="round"/></svg>
<div class="abs" style="left:598px;top:10.5px;width:65px;height:1.4px;background:#b9b9b9"></div>
<div class="abs" style="left:598px;top:10.3px;width:11px;height:1.8px;background:#2a82f0"></div>
<div class="abs" style="left:606.8px;top:7.3px;width:7.4px;height:7.4px;border-radius:50%;background:#fff;box-shadow:0 0 0 .6px #b0b0b0,0 .5px 1px rgba(0,0,0,.3)"></div>
</div>
<div class="abs" style="left:0;top:77px;width:165px;height:12.5px;background:linear-gradient(#fdfdfd,#e9e9e9);border-top:1px solid #c4c4c4;border-bottom:1px solid #9c9c9c"></div>
<div class="abs" style="left:0;top:78px;width:21px;height:11px;background:linear-gradient(#d6ecff,#8cc6fa);border-right:1px solid #7fb2e6"></div>
<div class="abs" style="left:123px;top:78px;width:1px;height:11px;background:#a8a8a8"></div>
<div class="abs" style="left:144.5px;top:78px;width:20px;height:11px;background:linear-gradient(#d6ecff,#8cc6fa);border-left:1px solid #6fa6de"></div>
<svg style="left:3.5px;top:79px" width="13" height="10" viewBox="0 0 13 10"><g fill="none" stroke="#2457b8" stroke-width="1"><rect x=".6" y=".6" width="3" height="2.2" rx=".6"/><path d="M4.5 1.7h7.5M2 2.8v5.3h2.4M2 5h2.4"/><rect x="4.5" y="4" width="2.6" height="2" rx=".6"/><rect x="4.5" y="7" width="2.6" height="2" rx=".6"/><path d="M8.2 5h3.8M8.2 8h3.8"/></g></svg>
<svg style="left:128.5px;top:79px" width="7" height="10" viewBox="0 0 7 10"><circle cx="1.6" cy="1.5" r="1.15" fill="#fff" stroke="#1f3fa8" stroke-width=".9"/><circle cx="5.2" cy="1.5" r="1.15" fill="#fff" stroke="#1f3fa8" stroke-width=".9"/><circle cx="1.6" cy="4.6" r="1.15" fill="#fff" stroke="#1f3fa8" stroke-width=".9"/><circle cx="5.2" cy="4.6" r="1.15" fill="#fff" stroke="#1f3fa8" stroke-width=".9"/><circle cx="1.6" cy="7.7" r="1.15" fill="#fff" stroke="#1f3fa8" stroke-width=".9"/><circle cx="5.2" cy="7.7" r="1.15" fill="#fff" stroke="#1f3fa8" stroke-width=".9"/></svg>
<svg style="left:149.5px;top:79.3px" width="10" height="10" viewBox="0 0 10 10"><circle cx="3.8" cy="3.8" r="2.7" fill="none" stroke="#17338c" stroke-width="1.5"/><path d="M5.9 5.9L8.8 8.8" stroke="#17338c" stroke-width="1.9" stroke-linecap="round"/></svg>
<div class="abs" style="left:0;top:89.5px;width:165px;height:22.5px;background:#a8a8a8"></div>
<div class="abs" style="left:13px;top:94px;width:135px;height:12.5px;background:#fff;border-radius:3px;box-shadow:0 0 0 .5px #8e8e8e"></div>
<svg style="left:56px;top:96px" width="9" height="9" viewBox="0 0 9 9"><circle cx="3.6" cy="3.6" r="2.7" fill="none" stroke="#7d7d7d" stroke-width="1"/><path d="M5.6 5.6L8 8" stroke="#7d7d7d" stroke-width="1.1"/></svg>
<div class="t" style="left:67.5px;top:95.6px;font-size:8.2px;color:#b4b4b4">Search</div>
<div class="abs" style="left:0;top:112px;width:156px;height:85px;background:#c2d0e0"></div>
<div class="abs" style="left:156px;top:112px;width:9px;height:85px;background:#fbfbfb;border-left:1px solid #e6e6e6"></div>
<div class="abs" style="left:158.3px;top:166px;width:4.4px;height:10.5px;border-radius:2.2px;background:#bdbdbd"></div>
<div class="t" style="left:12px;top:111.8px;font-size:8.5px;color:#050505;-webkit-text-stroke:.2px #111;text-shadow:0 1px 0 rgba(255,255,255,.5)">Plumbing and Piping Plans</div>
<svg style="left:4.2px;top:114.3px" width="5.6" height="7" viewBox="0 0 5.6 7"><path d="M0 0L5.6 3.5L0 7z" fill="#858585"/></svg>
<div class="t" style="left:12px;top:126.1px;font-size:8.5px;color:#050505;-webkit-text-stroke:.2px #111;text-shadow:0 1px 0 rgba(255,255,255,.5)">Presentation Design Elements</div>
<svg style="left:4.2px;top:128.6px" width="5.6" height="7" viewBox="0 0 5.6 7"><path d="M0 0L5.6 3.5L0 7z" fill="#858585"/></svg>
<div class="t" style="left:12px;top:140.5px;font-size:8.5px;color:#050505;-webkit-text-stroke:.2px #111;text-shadow:0 1px 0 rgba(255,255,255,.5)">Pyramid Diagrams</div>
<svg style="left:4.2px;top:143px" width="5.6" height="7" viewBox="0 0 5.6 7"><path d="M0 0L5.6 3.5L0 7z" fill="#858585"/></svg>
<div class="t" style="left:12px;top:154.8px;font-size:8.5px;color:#050505;-webkit-text-stroke:.2px #111;text-shadow:0 1px 0 rgba(255,255,255,.5)">Rack Diagrams</div>
<svg style="left:3.6px;top:158.3px" width="7" height="5.6" viewBox="0 0 7 5.6"><path d="M0 0H7L3.5 5.6z" fill="#808080"/></svg>
<div class="t" style="left:23.5px;top:169.2px;font-size:8.5px;color:#050505;-webkit-text-stroke:.2px #111;text-shadow:0 1px 0 rgba(255,255,255,.5)">Rack diagrams</div>
<div class="t" style="left:12px;top:183.5px;font-size:8.5px;color:#050505;-webkit-text-stroke:.2px #111;text-shadow:0 1px 0 rgba(255,255,255,.5)">Rapid UML</div>
<svg style="left:4.2px;top:186px" width="5.6" height="7" viewBox="0 0 5.6 7"><path d="M0 0L5.6 3.5L0 7z" fill="#858585"/></svg>
<div class="abs" style="left:0;top:197px;width:165px;height:13.5px;background:linear-gradient(#c9e4ff,#a4d2fc 50%,#7fbdf5);border-top:1px solid #8aa2bd;border-bottom:1px solid #6f9fd2"></div>
<div class="t" style="left:14.6px;top:199px;font-size:9.1px;color:#050505;-webkit-text-stroke:.15px #111">Rack diagrams</div>
<svg style="left:151px;top:200.5px" width="8" height="8" viewBox="0 0 8 8"><circle cx="4" cy="4" r="3.8" fill="#7b7f86"/><path d="M2.5 2.5l3 3m0-3l-3 3" stroke="#d6e6f6" stroke-width="1"/></svg>
<div class="abs" style="left:0;top:210.5px;width:156px;height:287px;background:#d0dce9"></div>
<div class="abs" style="left:156px;top:210.5px;width:9px;height:287px;background:#fbfbfb;border-left:1px solid #e8e8e8"></div>
<div class="abs" style="left:158.3px;top:214px;width:4.6px;height:53px;border-radius:2.3px;background:#c1c1c1"></div>
<div class="t" style="left:39.3px;top:220.7px;font-size:7.95px;color:#050505;-webkit-text-stroke:.18px #111">19 inch rack with rails</div>
<div class="abs" style="left:9px;top:213.2px;width:23px;height:23px;background:linear-gradient(#f4f9ff,#c2daf2 55%,#a9c8ea);border:1px solid #4f74a6;border-radius:.5px;box-shadow:inset 0 0 0 1px rgba(255,255,255,.75)"><svg style="left:-1px;top:-1px" width="23" height="23" viewBox="0 0 22.5 22.5"><rect x="6" y="3" width="10.5" height="15.5" fill="#2b2b2b" stroke="#777" stroke-width=".8"/><path d="M7.5 3.5v14.5M15 3.5v14.5" stroke="#999" stroke-width=".6"/><path d="M5.8 19h11" stroke="#222" stroke-width="1"/><rect x="16.6" y=".9" width="5" height="5" fill="#3f86d8" stroke="#2a62b0" stroke-width=".5"/><path d="M17.7 3.5l1 1.2 1.7-2.6" stroke="#fff" stroke-width=".9" fill="none"/></svg></div>
<div class="t" style="left:39.3px;top:246.7px;font-size:7.95px;color:#050505;-webkit-text-stroke:.18px #111">19 inch rack</div>
<div class="abs" style="left:9px;top:239.2px;width:23px;height:23px;background:linear-gradient(#f4f9ff,#c2daf2 55%,#a9c8ea);border:1px solid #4f74a6;border-radius:.5px;box-shadow:inset 0 0 0 1px rgba(255,255,255,.75)"><svg style="left:-1px;top:-1px" width="23" height="23" viewBox="0 0 22.5 22.5"><rect x="6" y="3" width="10.5" height="15.5" fill="#333" stroke="#666" stroke-width=".8"/><path d="M5.8 19h11" stroke="#222" stroke-width="1"/><rect x="16.6" y=".9" width="5" height="5" fill="#3f86d8" stroke="#2a62b0" stroke-width=".5"/><path d="M17.7 3.5l1 1.2 1.7-2.6" stroke="#fff" stroke-width=".9" fill="none"/></svg></div>
<div class="t" style="left:39.3px;top:272.7px;font-size:7.95px;color:#050505;-webkit-text-stroke:.18px #111">Rack with rails (without back...</div>
<div class="abs" style="left:9px;top:265.2px;width:23px;height:23px;background:linear-gradient(#f4f9ff,#c2daf2 55%,#a9c8ea);border:1px solid #4f74a6;border-radius:.5px;box-shadow:inset 0 0 0 1px rgba(255,255,255,.75)"><svg style="left:-1px;top:-1px" width="23" height="23" viewBox="0 0 22.5 22.5"><rect x="6" y="3" width="10.5" height="15.5" fill="#e4eefa" stroke="#555" stroke-width="1"/><path d="M7.6 3.5v14.5M15 3.5v14.5" stroke="#999" stroke-width=".5"/><path d="M5.6 19h11.4" stroke="#222" stroke-width="1.2"/><rect x="16.6" y=".9" width="5" height="5" fill="#3f86d8" stroke="#2a62b0" stroke-width=".5"/><path d="M17.7 3.5l1 1.2 1.7-2.6" stroke="#fff" stroke-width=".9" fill="none"/></svg></div>
<div class="t" style="left:39.3px;top:298.7px;font-size:7.95px;color:#050505;-webkit-text-stroke:.18px #111">Rack (without background)</div>
<div class="abs" style="left:9px;top:291.2px;width:23px;height:23px;background:linear-gradient(#f4f9ff,#c2daf2 55%,#a9c8ea);border:1px solid #4f74a6;border-radius:.5px;box-shadow:inset 0 0 0 1px rgba(255,255,255,.75)"><svg style="left:-1px;top:-1px" width="23" height="23" viewBox="0 0 22.5 22.5"><rect x="6" y="3" width="10.5" height="15.5" fill="#e4eefa" stroke="#555" stroke-width="1"/><path d="M5.6 19h11.4" stroke="#222" stroke-width="1.2"/><rect x="16.6" y=".9" width="5" height="5" fill="#3f86d8" stroke="#2a62b0" stroke-width=".5"/><path d="M17.7 3.5l1 1.2 1.7-2.6" stroke="#fff" stroke-width=".9" fill="none"/></svg></div>
<div class="t" style="left:39.3px;top:324.7px;font-size:7.95px;color:#050505;-webkit-text-stroke:.18px #111">Rack rails</div>
<div class="abs" style="left:9px;top:317.2px;width:23px;height:23px;background:linear-gradient(#f4f9ff,#c2daf2 55%,#a9c8ea);border:1px solid #4f74a6;border-radius:.5px;box-shadow:inset 0 0 0 1px rgba(255,255,255,.75)"><svg style="left:-1px;top:-1px" width="23" height="23" viewBox="0 0 22.5 22.5"><path d="M7.5 3v16M15 3v16" stroke="#8a8a8a" stroke-width="1.6"/><path d="M7.5 3v16M15 3v16" stroke="#e8e8e8" stroke-width=".5" stroke-dasharray="1 1.2"/><rect x="16.6" y=".9" width="5" height="5" fill="#3f86d8" stroke="#2a62b0" stroke-width=".5"/><path d="M17.7 3.5l1 1.2 1.7-2.6" stroke="#fff" stroke-width=".9" fill="none"/></svg></div>
<div class="t" style="left:39.3px;top:350.7px;font-size:7.95px;color:#050505;-webkit-text-stroke:.18px #111">Rack rails (half-rack)</div>
<div class="abs" style="left:9px;top:343.2px;width:23px;height:23px;background:linear-gradient(#f4f9ff,#c2daf2 55%,#a9c8ea);border:1px solid #4f74a6;border-radius:.5px;box-shadow:inset 0 0 0 1px rgba(255,255,255,.75)"><svg style="left:-1px;top:-1px" width="23" height="23" viewBox="0 0 22.5 22.5"><path d="M7.5 4v13M15 4v13" stroke="#8a8a8a" stroke-width="1.6"/><path d="M7.5 4v13M15 4v13" stroke="#e8e8e8" stroke-width=".5" stroke-dasharray="1 1.2"/><rect x="16.6" y=".9" width="5" height="5" fill="#3f86d8" stroke="#2a62b0" stroke-width=".5"/><path d="M17.7 3.5l1 1.2 1.7-2.6" stroke="#fff" stroke-width=".9" fill="none"/></svg></div>
<div class="t" style="left:39.3px;top:376.7px;font-size:7.95px;color:#050505;-webkit-text-stroke:.18px #111">Single rack rail</div>
<div class="abs" style="left:9px;top:369.2px;width:23px;height:23px;background:linear-gradient(#f4f9ff,#c2daf2 55%,#a9c8ea);border:1px solid #4f74a6;border-radius:.5px;box-shadow:inset 0 0 0 1px rgba(255,255,255,.75)"><svg style="left:-1px;top:-1px" width="23" height="23" viewBox="0 0 22.5 22.5"><path d="M11.2 3.5v14.5" stroke="#8a8a8a" stroke-width="1.6"/><path d="M11.2 3.5v14.5" stroke="#e8e8e8" stroke-width=".5" stroke-dasharray="1 1.2"/><rect x="16.6" y=".9" width="5" height="5" fill="#3f86d8" stroke="#2a62b0" stroke-width=".5"/><path d="M17.7 3.5l1 1.2 1.7-2.6" stroke="#fff" stroke-width=".9" fill="none"/></svg></div>
<div class="t" style="left:39.3px;top:402.7px;font-size:7.95px;color:#050505;-webkit-text-stroke:.18px #111">Xserve RAID</div>
<div class="abs" style="left:9px;top:395.2px;width:23px;height:23px;background:linear-gradient(#fbfbfb,#dcdcdc 55%,#c8c8c8);border:1px solid #7e7e7e;border-radius:.5px;box-shadow:inset 0 0 0 1px rgba(255,255,255,.75)"><svg style="left:-1px;top:-1px" width="23" height="23" viewBox="0 0 22.5 22.5"><rect x="3" y="8.2" width="16.5" height="5.6" fill="#cfcfcf" stroke="#8a8a8a" stroke-width=".6"/><path d="M7 8.2v5.6M11 8.2v5.6M15 8.2v5.6" stroke="#eee" stroke-width=".8"/></svg></div>
<div class="t" style="left:39.3px;top:428.7px;font-size:7.95px;color:#050505;-webkit-text-stroke:.18px #111">XServe</div>
<div class="abs" style="left:9px;top:421.2px;width:23px;height:23px;background:linear-gradient(#fbfbfb,#dcdcdc 55%,#c8c8c8);border:1px solid #7e7e7e;border-radius:.5px;box-shadow:inset 0 0 0 1px rgba(255,255,255,.75)"><svg style="left:-1px;top:-1px" width="23" height="23" viewBox="0 0 22.5 22.5"><rect x="3" y="9.6" width="16.5" height="2.6" fill="#b0b0b0" stroke="#777" stroke-width=".4"/><rect x="7" y="10.2" width="3" height="1.4" fill="#444"/><rect x="12" y="10.2" width="3" height="1.4" fill="#444"/></svg></div>
<div class="t" style="left:39.3px;top:454.7px;font-size:7.95px;color:#050505;-webkit-text-stroke:.18px #111">1U tray</div>
<div class="abs" style="left:9px;top:447.2px;width:23px;height:23px;background:linear-gradient(#fbfbfb,#dcdcdc 55%,#c8c8c8);border:1px solid #7e7e7e;border-radius:.5px;box-shadow:inset 0 0 0 1px rgba(255,255,255,.75)"><svg style="left:-1px;top:-1px" width="23" height="23" viewBox="0 0 22.5 22.5"><rect x="3" y="9.8" width="16.5" height="2.4" fill="#bdbdbd" stroke="#999" stroke-width=".4"/><rect x="4" y="10.2" width="6" height="1.6" fill="#e4e4e4"/></svg></div>
<div class="t" style="left:39.3px;top:480.7px;font-size:7.95px;color:#050505;-webkit-text-stroke:.18px #111">1U spacer</div>
<div class="abs" style="left:9px;top:473.2px;width:23px;height:23px;background:linear-gradient(#fbfbfb,#dcdcdc 55%,#c8c8c8);border:1px solid #7e7e7e;border-radius:.5px;box-shadow:inset 0 0 0 1px rgba(255,255,255,.75)"><svg style="left:-1px;top:-1px" width="23" height="23" viewBox="0 0 22.5 22.5"><rect x="3" y="9.6" width="16.5" height="2.8" rx="1.2" fill="#d8d8d8" stroke="#4a4a4a" stroke-width=".9"/></svg></div>
<div class="abs" style="left:164.5px;top:89.5px;width:1px;height:408px;background:#a4a4a4"></div>
<div class="abs" style="left:165px;top:77px;width:12.5px;height:12.5px;background:linear-gradient(#fff,#e6e6e6);border-top:1px solid #c4c4c4;border-right:1px solid #b0b0b0;border-bottom:1px solid #aaa"></div>
<div class="t" style="left:166.7px;top:80.6px;font-size:5.3px;font-weight:bold;color:#444;letter-spacing:-.1px">mm</div>
<div class="abs" style="left:177.5px;top:77px;width:540.5px;height:12.5px;background:linear-gradient(#fefefe,#efefef 45%,#cfcfcf);border-top:1px solid #c4c4c4;border-bottom:1px solid #2e2e2e"></div>
<svg style="left:177px;top:77px" width="541" height="12.5" viewBox="-0.5 0 541 12.5"><rect x="1.5" y="9.0" width="1" height="2.5" fill="#5a5a5a"/><rect x="4.5" y="4.0" width="1" height="7.5" fill="#5a5a5a"/><rect x="8.5" y="9.0" width="1" height="2.5" fill="#5a5a5a"/><rect x="12.5" y="9.0" width="1" height="2.5" fill="#5a5a5a"/><rect x="16.5" y="9.0" width="1" height="2.5" fill="#5a5a5a"/><rect x="19.5" y="9.0" width="1" height="2.5" fill="#5a5a5a"/><rect x="23.5" y="7.0" width="1" height="4.5" fill="#5a5a5a"/><rect x="27.5" y="9.0" width="1" height="2.5" fill="#5a5a5a"/><rect x="30.5" y="9.0" width="1" height="2.5" fill="#5a5a5a"/><rect x="34.5" y="9.0" width="1" height="2.5" fill="#5a5a5a"/><rect x="38.5" y="9.0" width="1" height="2.5" fill="#5a5a5a"/><rect x="42.5" y="4.0" width="1" height="7.5" fill="#5a5a5a"/><rect x="45.5" y="9.0" width="1" height="2.5" fill="#5a5a5a"/><rect x="49.5" y="9.0" width="1" height="2.5" fill="#5a5a5a"/><rect x="53.5" y="9.0" width="1" height="2.5" fill="#5a5a5a"/><rect x="57.5" y="9.0" width="1" height="2.5" fill="#5a5a5a"/><rect x="60.5" y="7.0" width="1" height="4.5" fill="#5a5a5a"/><rect x="64.5" y="9.0" width="1" height="2.5" fill="#5a5a5a"/><rect x="68.5" y="9.0" width="1" height="2.5" fill="#5a5a5a"/><rect x="71.5" y="9.0" width="1" height="2.5" fill="#5a5a5a"/><rect x="75.5" y="9.0" width="1" height="2.5" fill="#5a5a5a"/><rect x="79.5" y="4.0" width="1" height="7.5" fill="#5a5a5a"/><rect x="83.5" y="9.0" width="1" height="2.5" fill="#5a5a5a"/><rect x="86.5" y="9.0" width="1" height="2.5" fill="#5a5a5a"/><rect x="90.5" y="9.0" width="1" height="2.5" fill="#5a5a5a"/><rect x="94.5" y="9.0" width="1" height="2.5" fill="#5a5a5a"/><rect x="97.5" y="7.0" width="1" height="4.5" fill="#5a5a5a"/><rect x="101.5" y="9.0" width="1" height="2.5" fill="#5a5a5a"/><rect x="105.5" y="9.0" width="1" height="2.5" fill="#5a5a5a"/><rect x="109.5" y="9.0" width="1" height="2.5" fill="#5a5a5a"/><rect x="112.5" y="9.0" width="1" height="2.5" fill="#5a5a5a"/><rect x="116.5" y="4.0" width="1" height="7.5" fill="#5a5a5a"/><rect x="120.5" y="9.0" width="1" height="2.5" fill="#5a5a5a"/><rect x="124.5" y="9.0" width="1" height="2.5" fill="#5a5a5a"/><rect x="127.5" y="9.0" width="1" height="2.5" fill="#5a5a5a"/><rect x="131.5" y="9.0" width="1" height="2.5" fill="#5a5a5a"/><rect x="135.5" y="7.0" width="1" height="4.5" fill="#5a5a5a"/><rect x="138.5" y="9.0" width="1" height="2.5" fill="#5a5a5a"/><rect x="142.5" y="9.0" width="1" height="2.5" fill="#5a5a5a"/><rect x="146.5" y="9.0" width="1" height="2.5" fill="#5a5a5a"/><rect x="150.5" y="9.0" width="1" height="2.5" fill="#5a5a5a"/><rect x="153.5" y="4.0" width="1" height="7.5" fill="#5a5a5a"/><rect x="157.5" y="9.0" width="1" height="2.5" fill="#5a5a5a"/><rect x="161.5" y="9.0" width="1" height="2.5" fill="#5a5a5a"/><rect x="164.5" y="9.0" width="1" height="2.5" fill="#5a5a5a"/><rect x="168.5" y="9.0" width="1" height="2.5" fill="#5a5a5a"/><rect x="172.5" y="7.0" width="1" height="4.5" fill="#5a5a5a"/><rect x="176.5" y="9.0" width="1" height="2.5" fill="#5a5a5a"/><rect x="179.5" y="9.0" width="1" height="2.5" fill="#5a5a5a"/><rect x="183.5" y="9.0" width="1" height="2.5" fill="#5a5a5a"/><rect x="187.5" y="9.0" width="1" height="2.5" fill="#5a5a5a"/><rect x="191.5" y="4.0" width="1" height="7.5" fill="#5a5a5a"/><rect x="194.5" y="9.0" width="1" height="2.5" fill="#5a5a5a"/><rect x="198.5" y="9.0" width="1" height="2.5" fill="#5a5a5a"/><rect x="202.5" y="9.0" width="1" height="2.5" fill="#5a5a5a"/><rect x="205.5" y="9.0" width="1" height="2.5" fill="#5a5a5a"/><rect x="209.5" y="7.0" width="1" height="4.5" fill="#5a5a5a"/><rect x="213.5" y="9.0" width="1" height="2.5" fill="#5a5a5a"/><rect x="217.5" y="9.0" width="1" height="2.5" fill="#5a5a5a"/><rect x="220.5" y="9.0" width="1" height="2.5" fill="#5a5a5a"/><rect x="224.5" y="9.0" width="1" height="2.5" fill="#5a5a5a"/><rect x="228.5" y="4.0" width="1" height="7.5" fill="#5a5a5a"/><rect x="232.5" y="9.0" width="1" height="2.5" fill="#5a5a5a"/><rect x="235.5" y="9.0" width="1" height="2.5" fill="#5a5a5a"/><rect x="239.5" y="9.0" width="1" height="2.5" fill="#5a5a5a"/><rect x="243.5" y="9.0" width="1" height="2.5" fill="#5a5a5a"/><rect x="246.5" y="7.0" width="1" height="4.5" fill="#5a5a5a"/><rect x="250.5" y="9.0" width="1" height="2.5" fill="#5a5a5a"/><rect x="254.5" y="9.0" width="1" height="2.5" fill="#5a5a5a"/><rect x="258.5" y="9.0" width="1" height="2.5" fill="#5a5a5a"/><rect x="261.5" y="9.0" width="1" height="2.5" fill="#5a5a5a"/><rect x="265.5" y="4.0" width="1" height="7.5" fill="#5a5a5a"/><rect x="269.5" y="9.0" width="1" height="2.5" fill="#5a5a5a"/><rect x="272.5" y="9.0" width="1" height="2.5" fill="#5a5a5a"/><rect x="276.5" y="9.0" width="1" height="2.5" fill="#5a5a5a"/><rect x="280.5" y="9.0" width="1" height="2.5" fill="#5a5a5a"/><rect x="284.5" y="7.0" width="1" height="4.5" fill="#5a5a5a"/><rect x="287.5" y="9.0" width="1" height="2.5" fill="#5a5a5a"/><rect x="291.5" y="9.0" width="1" height="2.5" fill="#5a5a5a"/><rect x="295.5" y="9.0" width="1" height="2.5" fill="#5a5a5a"/><rect x="299.5" y="9.0" width="1" height="2.5" fill="#5a5a5a"/><rect x="302.5" y="4.0" width="1" height="7.5" fill="#5a5a5a"/><rect x="306.5" y="9.0" width="1" height="2.5" fill="#5a5a5a"/><rect x="310.5" y="9.0" width="1" height="2.5" fill="#5a5a5a"/><rect x="313.5" y="9.0" width="1" height="2.5" fill="#5a5a5a"/><rect x="317.5" y="9.0" width="1" height="2.5" fill="#5a5a5a"/><rect x="321.5" y="7.0" width="1" height="4.5" fill="#5a5a5a"/><rect x="325.5" y="9.0" width="1" height="2.5" fill="#5a5a5a"/><rect x="328.5" y="9.0" width="1" height="2.5" fill="#5a5a5a"/><rect x="332.5" y="9.0" width="1" height="2.5" fill="#5a5a5a"/><rect x="336.5" y="9.0" width="1" height="2.5" fill="#5a5a5a"/><rect x="339.5" y="4.0" width="1" height="7.5" fill="#5a5a5a"/><rect x="343.5" y="9.0" width="1" height="2.5" fill="#5a5a5a"/><rect x="347.5" y="9.0" width="1" height="2.5" fill="#5a5a5a"/><rect x="351.5" y="9.0" width="1" height="2.5" fill="#5a5a5a"/><rect x="354.5" y="9.0" width="1" height="2.5" fill="#5a5a5a"/><rect x="358.5" y="7.0" width="1" height="4.5" fill="#5a5a5a"/><rect x="362.5" y="9.0" width="1" height="2.5" fill="#5a5a5a"/><rect x="366.5" y="9.0" width="1" height="2.5" fill="#5a5a5a"/><rect x="369.5" y="9.0" width="1" height="2.5" fill="#5a5a5a"/><rect x="373.5" y="9.0" width="1" height="2.5" fill="#5a5a5a"/><rect x="377.5" y="4.0" width="1" height="7.5" fill="#5a5a5a"/><rect x="380.5" y="9.0" width="1" height="2.5" fill="#5a5a5a"/><rect x="384.5" y="9.0" width="1" height="2.5" fill="#5a5a5a"/><rect x="388.5" y="9.0" width="1" height="2.5" fill="#5a5a5a"/><rect x="392.5" y="9.0" width="1" height="2.5" fill="#5a5a5a"/><rect x="395.5" y="7.0" width="1" height="4.5" fill="#5a5a5a"/><rect x="399.5" y="9.0" width="1" height="2.5" fill="#5a5a5a"/><rect x="403.5" y="9.0" width="1" height="2.5" fill="#5a5a5a"/><rect x="406.5" y="9.0" width="1" height="2.5" fill="#5a5a5a"/><rect x="410.5" y="9.0" width="1" height="2.5" fill="#5a5a5a"/><rect x="414.5" y="4.0" width="1" height="7.5" fill="#5a5a5a"/><rect x="418.5" y="9.0" width="1" height="2.5" fill="#5a5a5a"/><rect x="421.5" y="9.0" width="1" height="2.5" fill="#5a5a5a"/><rect x="425.5" y="9.0" width="1" height="2.5" fill="#5a5a5a"/><rect x="429.5" y="9.0" width="1" height="2.5" fill="#5a5a5a"/><rect x="433.5" y="7.0" width="1" height="4.5" fill="#5a5a5a"/><rect x="436.5" y="9.0" width="1" height="2.5" fill="#5a5a5a"/><rect x="440.5" y="9.0" width="1" height="2.5" fill="#5a5a5a"/><rect x="444.5" y="9.0" width="1" height="2.5" fill="#5a5a5a"/><rect x="447.5" y="9.0" width="1" height="2.5" fill="#5a5a5a"/><rect x="451.5" y="4.0" width="1" height="7.5" fill="#5a5a5a"/><rect x="455.5" y="9.0" width="1" height="2.5" fill="#5a5a5a"/><rect x="459.5" y="9.0" width="1" height="2.5" fill="#5a5a5a"/><rect x="462.5" y="9.0" width="1" height="2.5" fill="#5a5a5a"/><rect x="466.5" y="9.0" width="1" height="2.5" fill="#5a5a5a"/><rect x="470.5" y="7.0" width="1" height="4.5" fill="#5a5a5a"/><rect x="473.5" y="9.0" width="1" height="2.5" fill="#5a5a5a"/><rect x="477.5" y="9.0" width="1" height="2.5" fill="#5a5a5a"/><rect x="481.5" y="9.0" width="1" height="2.5" fill="#5a5a5a"/><rect x="485.5" y="9.0" width="1" height="2.5" fill="#5a5a5a"/><rect x="488.5" y="4.0" width="1" height="7.5" fill="#5a5a5a"/><rect x="492.5" y="9.0" width="1" height="2.5" fill="#5a5a5a"/><rect x="496.5" y="9.0" width="1" height="2.5" fill="#5a5a5a"/><rect x="500.5" y="9.0" width="1" height="2.5" fill="#5a5a5a"/><rect x="503.5" y="9.0" width="1" height="2.5" fill="#5a5a5a"/><rect x="507.5" y="7.0" width="1" height="4.5" fill="#5a5a5a"/><rect x="511.5" y="9.0" width="1" height="2.5" fill="#5a5a5a"/><rect x="514.5" y="9.0" width="1" height="2.5" fill="#5a5a5a"/><rect x="518.5" y="9.0" width="1" height="2.5" fill="#5a5a5a"/><rect x="522.5" y="9.0" width="1" height="2.5" fill="#5a5a5a"/><rect x="526.5" y="4.0" width="1" height="7.5" fill="#5a5a5a"/><rect x="529.5" y="9.0" width="1" height="2.5" fill="#5a5a5a"/><rect x="533.5" y="9.0" width="1" height="2.5" fill="#5a5a5a"/><rect x="537.5" y="9.0" width="1" height="2.5" fill="#5a5a5a"/><text x="7.4" y="6.5" font-size="6.3" fill="#303030" font-family="Liberation Sans">0</text><text x="44.63" y="6.5" font-size="6.3" fill="#303030" font-family="Liberation Sans">20</text><text x="81.86" y="6.5" font-size="6.3" fill="#303030" font-family="Liberation Sans">40</text><text x="119.09" y="6.5" font-size="6.3" fill="#303030" font-family="Liberation Sans">60</text><text x="156.32" y="6.5" font-size="6.3" fill="#303030" font-family="Liberation Sans">80</text><text x="193.55" y="6.5" font-size="6.3" fill="#303030" font-family="Liberation Sans">100</text><text x="230.78" y="6.5" font-size="6.3" fill="#303030" font-family="Liberation Sans">120</text><text x="268.01" y="6.5" font-size="6.3" fill="#303030" font-family="Liberation Sans">140</text><text x="305.24" y="6.5" font-size="6.3" fill="#303030" font-family="Liberation Sans">160</text><text x="342.47" y="6.5" font-size="6.3" fill="#303030" font-family="Liberation Sans">180</text><text x="379.7" y="6.5" font-size="6.3" fill="#303030" font-family="Liberation Sans">200</text><text x="416.93" y="6.5" font-size="6.3" fill="#303030" font-family="Liberation Sans">220</text><text x="454.16" y="6.5" font-size="6.3" fill="#303030" font-family="Liberation Sans">240</text><text x="491.39" y="6.5" font-size="6.3" fill="#303030" font-family="Liberation Sans">260</text><text x="528.62" y="6.5" font-size="6.3" fill="#303030" font-family="Liberation Sans">280</text><rect x="52.9" y="1.5" width="1.2" height="10" fill="#e8202a"/></svg>
<div class="abs" style="left:165px;top:89.5px;width:12.5px;height:396.5px;background:linear-gradient(90deg,#fefefe,#efefef 45%,#cbcbcb);border-right:1px solid #2e2e2e"></div>
<svg style="left:165px;top:89px" width="12.5" height="397.0" viewBox="0 -0.5 12.5 397.0"><rect x="4.0" y="0.5" width="7.5" height="1" fill="#5a5a5a"/><rect x="9.0" y="4.5" width="2.5" height="1" fill="#5a5a5a"/><rect x="9.0" y="8.5" width="2.5" height="1" fill="#5a5a5a"/><rect x="9.0" y="11.5" width="2.5" height="1" fill="#5a5a5a"/><rect x="9.0" y="15.5" width="2.5" height="1" fill="#5a5a5a"/><rect x="7.0" y="19.5" width="4.5" height="1" fill="#5a5a5a"/><rect x="9.0" y="22.5" width="2.5" height="1" fill="#5a5a5a"/><rect x="9.0" y="26.5" width="2.5" height="1" fill="#5a5a5a"/><rect x="9.0" y="30.5" width="2.5" height="1" fill="#5a5a5a"/><rect x="9.0" y="34.5" width="2.5" height="1" fill="#5a5a5a"/><rect x="4.0" y="37.5" width="7.5" height="1" fill="#5a5a5a"/><rect x="9.0" y="41.5" width="2.5" height="1" fill="#5a5a5a"/><rect x="9.0" y="45.5" width="2.5" height="1" fill="#5a5a5a"/><rect x="9.0" y="48.5" width="2.5" height="1" fill="#5a5a5a"/><rect x="9.0" y="52.5" width="2.5" height="1" fill="#5a5a5a"/><rect x="7.0" y="56.5" width="4.5" height="1" fill="#5a5a5a"/><rect x="9.0" y="60.5" width="2.5" height="1" fill="#5a5a5a"/><rect x="9.0" y="63.5" width="2.5" height="1" fill="#5a5a5a"/><rect x="9.0" y="67.5" width="2.5" height="1" fill="#5a5a5a"/><rect x="9.0" y="71.5" width="2.5" height="1" fill="#5a5a5a"/><rect x="4.0" y="75.5" width="7.5" height="1" fill="#5a5a5a"/><rect x="9.0" y="78.5" width="2.5" height="1" fill="#5a5a5a"/><rect x="9.0" y="82.5" width="2.5" height="1" fill="#5a5a5a"/><rect x="9.0" y="86.5" width="2.5" height="1" fill="#5a5a5a"/><rect x="9.0" y="89.5" width="2.5" height="1" fill="#5a5a5a"/><rect x="7.0" y="93.5" width="4.5" height="1" fill="#5a5a5a"/><rect x="9.0" y="97.5" width="2.5" height="1" fill="#5a5a5a"/><rect x="9.0" y="101.5" width="2.5" height="1" fill="#5a5a5a"/><rect x="9.0" y="104.5" width="2.5" height="1" fill="#5a5a5a"/><rect x="9.0" y="108.5" width="2.5" height="1" fill="#5a5a5a"/><rect x="4.0" y="112.5" width="7.5" height="1" fill="#5a5a5a"/><rect x="9.0" y="116.5" width="2.5" height="1" fill="#5a5a5a"/><rect x="9.0" y="119.5" width="2.5" height="1" fill="#5a5a5a"/><rect x="9.0" y="123.5" width="2.5" height="1" fill="#5a5a5a"/><rect x="9.0" y="127.5" width="2.5" height="1" fill="#5a5a5a"/><rect x="7.0" y="130.5" width="4.5" height="1" fill="#5a5a5a"/><rect x="9.0" y="134.5" width="2.5" height="1" fill="#5a5a5a"/><rect x="9.0" y="138.5" width="2.5" height="1" fill="#5a5a5a"/><rect x="9.0" y="142.5" width="2.5" height="1" fill="#5a5a5a"/><rect x="9.0" y="145.5" width="2.5" height="1" fill="#5a5a5a"/><rect x="4.0" y="149.5" width="7.5" height="1" fill="#5a5a5a"/><rect x="9.0" y="153.5" width="2.5" height="1" fill="#5a5a5a"/><rect x="9.0" y="156.5" width="2.5" height="1" fill="#5a5a5a"/><rect x="9.0" y="160.5" width="2.5" height="1" fill="#5a5a5a"/><rect x="9.0" y="164.5" width="2.5" height="1" fill="#5a5a5a"/><rect x="7.0" y="168.5" width="4.5" height="1" fill="#5a5a5a"/><rect x="9.0" y="171.5" width="2.5" height="1" fill="#5a5a5a"/><rect x="9.0" y="175.5" width="2.5" height="1" fill="#5a5a5a"/><rect x="9.0" y="179.5" width="2.5" height="1" fill="#5a5a5a"/><rect x="9.0" y="183.5" width="2.5" height="1" fill="#5a5a5a"/><rect x="4.0" y="186.5" width="7.5" height="1" fill="#5a5a5a"/><rect x="9.0" y="190.5" width="2.5" height="1" fill="#5a5a5a"/><rect x="9.0" y="194.5" width="2.5" height="1" fill="#5a5a5a"/><rect x="9.0" y="197.5" width="2.5" height="1" fill="#5a5a5a"/><rect x="9.0" y="201.5" width="2.5" height="1" fill="#5a5a5a"/><rect x="7.0" y="205.5" width="4.5" height="1" fill="#5a5a5a"/><rect x="9.0" y="209.5" width="2.5" height="1" fill="#5a5a5a"/><rect x="9.0" y="212.5" width="2.5" height="1" fill="#5a5a5a"/><rect x="9.0" y="216.5" width="2.5" height="1" fill="#5a5a5a"/><rect x="9.0" y="220.5" width="2.5" height="1" fill="#5a5a5a"/><rect x="4.0" y="223.5" width="7.5" height="1" fill="#5a5a5a"/><rect x="9.0" y="227.5" width="2.5" height="1" fill="#5a5a5a"/><rect x="9.0" y="231.5" width="2.5" height="1" fill="#5a5a5a"/><rect x="9.0" y="235.5" width="2.5" height="1" fill="#5a5a5a"/><rect x="9.0" y="238.5" width="2.5" height="1" fill="#5a5a5a"/><rect x="7.0" y="242.5" width="4.5" height="1" fill="#5a5a5a"/><rect x="9.0" y="246.5" width="2.5" height="1" fill="#5a5a5a"/><rect x="9.0" y="250.5" width="2.5" height="1" fill="#5a5a5a"/><rect x="9.0" y="253.5" width="2.5" height="1" fill="#5a5a5a"/><rect x="9.0" y="257.5" width="2.5" height="1" fill="#5a5a5a"/><rect x="4.0" y="261.5" width="7.5" height="1" fill="#5a5a5a"/><rect x="9.0" y="264.5" width="2.5" height="1" fill="#5a5a5a"/><rect x="9.0" y="268.5" width="2.5" height="1" fill="#5a5a5a"/><rect x="9.0" y="272.5" width="2.5" height="1" fill="#5a5a5a"/><rect x="9.0" y="276.5" width="2.5" height="1" fill="#5a5a5a"/><rect x="7.0" y="279.5" width="4.5" height="1" fill="#5a5a5a"/><rect x="9.0" y="283.5" width="2.5" height="1" fill="#5a5a5a"/><rect x="9.0" y="287.5" width="2.5" height="1" fill="#5a5a5a"/><rect x="9.0" y="290.5" width="2.5" height="1" fill="#5a5a5a"/><rect x="9.0" y="294.5" width="2.5" height="1" fill="#5a5a5a"/><rect x="4.0" y="298.5" width="7.5" height="1" fill="#5a5a5a"/><rect x="9.0" y="302.5" width="2.5" height="1" fill="#5a5a5a"/><rect x="9.0" y="305.5" width="2.5" height="1" fill="#5a5a5a"/><rect x="9.0" y="309.5" width="2.5" height="1" fill="#5a5a5a"/><rect x="9.0" y="313.5" width="2.5" height="1" fill="#5a5a5a"/><rect x="7.0" y="317.5" width="4.5" height="1" fill="#5a5a5a"/><rect x="9.0" y="320.5" width="2.5" height="1" fill="#5a5a5a"/><rect x="9.0" y="324.5" width="2.5" height="1" fill="#5a5a5a"/><rect x="9.0" y="328.5" width="2.5" height="1" fill="#5a5a5a"/><rect x="9.0" y="331.5" width="2.5" height="1" fill="#5a5a5a"/><rect x="4.0" y="335.5" width="7.5" height="1" fill="#5a5a5a"/><rect x="9.0" y="339.5" width="2.5" height="1" fill="#5a5a5a"/><rect x="9.0" y="343.5" width="2.5" height="1" fill="#5a5a5a"/><rect x="9.0" y="346.5" width="2.5" height="1" fill="#5a5a5a"/><rect x="9.0" y="350.5" width="2.5" height="1" fill="#5a5a5a"/><rect x="7.0" y="354.5" width="4.5" height="1" fill="#5a5a5a"/><rect x="9.0" y="358.5" width="2.5" height="1" fill="#5a5a5a"/><rect x="9.0" y="361.5" width="2.5" height="1" fill="#5a5a5a"/><rect x="9.0" y="365.5" width="2.5" height="1" fill="#5a5a5a"/><rect x="9.0" y="369.5" width="2.5" height="1" fill="#5a5a5a"/><rect x="4.0" y="372.5" width="7.5" height="1" fill="#5a5a5a"/><rect x="9.0" y="376.5" width="2.5" height="1" fill="#5a5a5a"/><rect x="9.0" y="380.5" width="2.5" height="1" fill="#5a5a5a"/><rect x="9.0" y="384.5" width="2.5" height="1" fill="#5a5a5a"/><rect x="9.0" y="387.5" width="2.5" height="1" fill="#5a5a5a"/><rect x="7.0" y="391.5" width="4.5" height="1" fill="#5a5a5a"/><text transform="translate(5.9,38.43) rotate(-90)" font-size="6.3" fill="#303030" font-family="Liberation Sans">20</text><text transform="translate(5.9,75.66) rotate(-90)" font-size="6.3" fill="#303030" font-family="Liberation Sans">40</text><text transform="translate(5.9,112.89) rotate(-90)" font-size="6.3" fill="#303030" font-family="Liberation Sans">60</text><text transform="translate(5.9,150.12) rotate(-90)" font-size="6.3" fill="#303030" font-family="Liberation Sans">80</text><text transform="translate(5.9,187.35) rotate(-90)" font-size="6.3" fill="#303030" font-family="Liberation Sans">100</text><text transform="translate(5.9,224.58) rotate(-90)" font-size="6.3" fill="#303030" font-family="Liberation Sans">120</text><text transform="translate(5.9,261.81) rotate(-90)" font-size="6.3" fill="#303030" font-family="Liberation Sans">140</text><text transform="translate(5.9,299.04) rotate(-90)" font-size="6.3" fill="#303030" font-family="Liberation Sans">160</text><text transform="translate(5.9,336.27) rotate(-90)" font-size="6.3" fill="#303030" font-family="Liberation Sans">180</text><text transform="translate(5.9,373.5) rotate(-90)" font-size="6.3" fill="#303030" font-family="Liberation Sans">200</text><rect x="1.5" y="252.50000000000003" width="10" height="1.2" fill="#e8202a"/></svg>
<div class="abs" style="left:178px;top:90px;width:529px;height:396px;background:#a6c6c4;overflow:hidden;box-shadow:inset 0 1.2px 0 #7f9e9c"><div class="abs" style="left:5px;top:2px;width:519px;height:420px;background:#fff;box-shadow:0 0 0 .8px #86a4a2"></div></div>
<div class="abs" style="left:702.5px;top:90px;width:1px;height:396px;background:#3a3a3a"></div>
<div class="abs" style="left:707px;top:90px;width:11px;height:396px;background:#fafafa;border-left:1px solid #e6e6e6"></div>
<div class="abs" style="left:709.5px;top:113px;width:5.4px;height:354.5px;border-radius:2.7px;background:#c1c1c1"></div>
<svg style="left:192px;top:101.3px" width="113" height="370" viewBox="0 0 113 370"><g id="rk1"><defs><linearGradient id="int1" x1="0" y1="0" x2="0" y2="1"><stop offset="0" stop-color="#505050"/><stop offset=".3" stop-color="#3e3e3e"/><stop offset=".55" stop-color="#1c1c1c"/><stop offset=".75" stop-color="#060606"/><stop offset="1" stop-color="#000"/></linearGradient><linearGradient id="base1" x1="0" y1="0" x2="0" y2="1"><stop offset="0" stop-color="#a6a6a6"/><stop offset=".5" stop-color="#808080"/><stop offset=".68" stop-color="#585858"/><stop offset="1" stop-color="#3c3c3c"/></linearGradient><linearGradient id="post1" x1="0" y1="0" x2="1" y2="0"><stop offset="0" stop-color="#8a8a8a"/><stop offset=".7" stop-color="#868686"/><stop offset="1" stop-color="#6e6e6e"/></linearGradient></defs><rect x="0" y="0" width="113" height="367" fill="#7e7e7e" stroke="#606060" stroke-width=".6"/><rect x="8.5" y="0.4" width="95.7" height="7.6" fill="#838383" /><rect x="8.5" y="7.2" width="95.7" height="0.8" fill="#6a6a6a" /><rect x="104.2" y="0.4" width="8.5" height="366" fill="url(#post1)" /><rect x="11.1" y="8.0" width="90.6" height="346.5" fill="#4e4e4e" /><rect x="11.3" y="8.0" width="2.6" height="346.5" fill="#0a0a0a" /><path d="M12.600000000000001 8.9v346.5" stroke="#f6f6f6" stroke-width="1.3" stroke-dasharray="1.05 1.7"/><rect x="99.2" y="8.0" width="2.6" height="346.5" fill="#0a0a0a" /><path d="M100.5 8.9v346.5" stroke="#f6f6f6" stroke-width="1.3" stroke-dasharray="1.05 1.7"/><rect x="8.6" y="8.0" width="2.5" height="346.9" fill="#f3f3f3" /><path d="M9.85 8.0v346.5" stroke="#bdbdbd" stroke-width="2.5" stroke-dasharray=".6 7.65" opacity=".8"/><rect x="101.7" y="8.0" width="2.5" height="346.9" fill="#f3f3f3" /><path d="M102.95 8.0v346.5" stroke="#bdbdbd" stroke-width="2.5" stroke-dasharray=".6 7.65" opacity=".8"/><rect x="0.6" y="8.5" width="7.8" height="7.25" fill="#a0a0a0" /><rect x="1.6" y="10.8" width="4.8" height="2.3" fill="#efefef" opacity=".9"/><rect x="3.2" y="10.8" width="0.5" height="2.3" fill="#a0a0a0" /><rect x="4.9" y="10.8" width="0.4" height="1.6" fill="#a0a0a0" /><rect x="0.6" y="16.75" width="7.8" height="7.25" fill="#a0a0a0" /><rect x="1.6" y="19.05" width="4.8" height="2.3" fill="#efefef" opacity=".9"/><rect x="3.2" y="19.05" width="0.5" height="2.3" fill="#a0a0a0" /><rect x="4.9" y="19.05" width="0.4" height="1.6" fill="#a0a0a0" /><rect x="0.6" y="25.0" width="7.8" height="7.25" fill="#a0a0a0" /><rect x="1.6" y="27.3" width="4.8" height="2.3" fill="#efefef" opacity=".9"/><rect x="3.2" y="27.3" width="0.5" height="2.3" fill="#a0a0a0" /><rect x="4.9" y="27.3" width="0.4" height="1.6" fill="#a0a0a0" /><rect x="0.6" y="33.25" width="7.8" height="7.25" fill="#a0a0a0" /><rect x="1.6" y="35.55" width="4.8" height="2.3" fill="#efefef" opacity=".9"/><rect x="3.2" y="35.55" width="0.5" height="2.3" fill="#a0a0a0" /><rect x="4.9" y="35.55" width="0.4" height="1.6" fill="#a0a0a0" /><rect x="0.6" y="41.5" width="7.8" height="7.25" fill="#a0a0a0" /><rect x="1.6" y="43.8" width="4.8" height="2.3" fill="#efefef" opacity=".9"/><rect x="3.2" y="43.8" width="0.5" height="2.3" fill="#a0a0a0" /><rect x="4.9" y="43.8" width="0.4" height="1.6" fill="#a0a0a0" /><rect x="0.6" y="49.75" width="7.8" height="7.25" fill="#a0a0a0" /><rect x="1.6" y="52.05" width="4.8" height="2.3" fill="#efefef" opacity=".9"/><rect x="3.2" y="52.05" width="0.5" height="2.3" fill="#a0a0a0" /><rect x="4.9" y="52.05" width="0.4" height="1.6" fill="#a0a0a0" /><rect x="0.6" y="58.0" width="7.8" height="7.25" fill="#a0a0a0" /><rect x="1.6" y="60.3" width="4.8" height="2.3" fill="#efefef" opacity=".9"/><rect x="3.2" y="60.3" width="0.5" height="2.3" fill="#a0a0a0" /><rect x="4.9" y="60.3" width="0.4" height="1.6" fill="#a0a0a0" /><rect x="0.6" y="66.25" width="7.8" height="7.25" fill="#a0a0a0" /><rect x="1.6" y="68.55" width="4.8" height="2.3" fill="#efefef" opacity=".9"/><rect x="3.2" y="68.55" width="0.5" height="2.3" fill="#a0a0a0" /><rect x="4.9" y="68.55" width="0.4" height="1.6" fill="#a0a0a0" /><rect x="0.6" y="74.5" width="7.8" height="7.25" fill="#a0a0a0" /><rect x="1.6" y="76.8" width="4.8" height="2.3" fill="#efefef" opacity=".9"/><rect x="3.2" y="76.8" width="0.5" height="2.3" fill="#a0a0a0" /><rect x="4.9" y="76.8" width="0.4" height="1.6" fill="#a0a0a0" /><rect x="0.6" y="82.75" width="7.8" height="7.25" fill="#a0a0a0" /><rect x="1.6" y="85.05" width="4.8" height="2.3" fill="#efefef" opacity=".9"/><rect x="3.2" y="85.05" width="0.5" height="2.3" fill="#a0a0a0" /><rect x="4.9" y="85.05" width="0.4" height="1.6" fill="#a0a0a0" /><rect x="0.6" y="91.0" width="7.8" height="7.25" fill="#a0a0a0" /><rect x="1.6" y="93.3" width="4.8" height="2.3" fill="#efefef" opacity=".9"/><rect x="3.2" y="93.3" width="0.5" height="2.3" fill="#a0a0a0" /><rect x="4.9" y="93.3" width="0.4" height="1.6" fill="#a0a0a0" /><rect x="0.6" y="99.25" width="7.8" height="7.25" fill="#a0a0a0" /><rect x="1.6" y="101.55" width="4.8" height="2.3" fill="#efefef" opacity=".9"/><rect x="3.2" y="101.55" width="0.5" height="2.3" fill="#a0a0a0" /><rect x="4.9" y="101.55" width="0.4" height="1.6" fill="#a0a0a0" /><rect x="0.6" y="107.5" width="7.8" height="7.25" fill="#a0a0a0" /><rect x="1.6" y="109.8" width="4.8" height="2.3" fill="#efefef" opacity=".9"/><rect x="3.2" y="109.8" width="0.5" height="2.3" fill="#a0a0a0" /><rect x="4.9" y="109.8" width="0.4" height="1.6" fill="#a0a0a0" /><rect x="0.6" y="115.75" width="7.8" height="7.25" fill="#a0a0a0" /><rect x="1.6" y="118.05" width="4.8" height="2.3" fill="#efefef" opacity=".9"/><rect x="3.2" y="118.05" width="0.5" height="2.3" fill="#a0a0a0" /><rect x="4.9" y="118.05" width="0.4" height="1.6" fill="#a0a0a0" /><rect x="0.6" y="124.0" width="7.8" height="7.25" fill="#a0a0a0" /><rect x="1.6" y="126.3" width="4.8" height="2.3" fill="#efefef" opacity=".9"/><rect x="3.2" y="126.3" width="0.5" height="2.3" fill="#a0a0a0" /><rect x="4.9" y="126.3" width="0.4" height="1.6" fill="#a0a0a0" /><rect x="0.6" y="132.25" width="7.8" height="7.25" fill="#a0a0a0" /><rect x="1.6" y="134.55" width="4.8" height="2.3" fill="#efefef" opacity=".9"/><rect x="3.2" y="134.55" width="0.5" height="2.3" fill="#a0a0a0" /><rect x="4.9" y="134.55" width="0.4" height="1.6" fill="#a0a0a0" /><rect x="0.6" y="140.5" width="7.8" height="7.25" fill="#a0a0a0" /><rect x="1.6" y="142.8" width="4.8" height="2.3" fill="#efefef" opacity=".9"/><rect x="3.2" y="142.8" width="0.5" height="2.3" fill="#a0a0a0" /><rect x="4.9" y="142.8" width="0.4" height="1.6" fill="#a0a0a0" /><rect x="0.6" y="148.75" width="7.8" height="7.25" fill="#a0a0a0" /><rect x="1.6" y="151.05" width="4.8" height="2.3" fill="#efefef" opacity=".9"/><rect x="3.2" y="151.05" width="0.5" height="2.3" fill="#a0a0a0" /><rect x="4.9" y="151.05" width="0.4" height="1.6" fill="#a0a0a0" /><rect x="0.6" y="157.0" width="7.8" height="7.25" fill="#a0a0a0" /><rect x="1.6" y="159.3" width="4.8" height="2.3" fill="#efefef" opacity=".9"/><rect x="3.2" y="159.3" width="0.5" height="2.3" fill="#a0a0a0" /><rect x="4.9" y="159.3" width="0.4" height="1.6" fill="#a0a0a0" /><rect x="0.6" y="165.25" width="7.8" height="7.25" fill="#a0a0a0" /><rect x="1.6" y="167.55" width="4.8" height="2.3" fill="#efefef" opacity=".9"/><rect x="3.2" y="167.55" width="0.5" height="2.3" fill="#a0a0a0" /><rect x="4.9" y="167.55" width="0.4" height="1.6" fill="#a0a0a0" /><rect x="0.6" y="173.5" width="7.8" height="7.25" fill="#a0a0a0" /><rect x="1.6" y="175.8" width="4.8" height="2.3" fill="#efefef" opacity=".9"/><rect x="3.2" y="175.8" width="0.5" height="2.3" fill="#a0a0a0" /><rect x="4.9" y="175.8" width="0.4" height="1.6" fill="#a0a0a0" /><rect x="0.6" y="181.75" width="7.8" height="7.25" fill="#a0a0a0" /><rect x="1.6" y="184.05" width="4.8" height="2.3" fill="#efefef" opacity=".9"/><rect x="3.2" y="184.05" width="0.5" height="2.3" fill="#a0a0a0" /><rect x="4.9" y="184.05" width="0.4" height="1.6" fill="#a0a0a0" /><rect x="0.6" y="190.0" width="7.8" height="7.25" fill="#a0a0a0" /><rect x="1.6" y="192.3" width="4.8" height="2.3" fill="#efefef" opacity=".9"/><rect x="3.2" y="192.3" width="0.5" height="2.3" fill="#a0a0a0" /><rect x="4.9" y="192.3" width="0.4" height="1.6" fill="#a0a0a0" /><rect x="0.6" y="198.25" width="7.8" height="7.25" fill="#a0a0a0" /><rect x="1.6" y="200.55" width="4.8" height="2.3" fill="#efefef" opacity=".9"/><rect x="3.2" y="200.55" width="0.5" height="2.3" fill="#a0a0a0" /><rect x="4.9" y="200.55" width="0.4" height="1.6" fill="#a0a0a0" /><rect x="0.6" y="206.5" width="7.8" height="7.25" fill="#a0a0a0" /><rect x="1.6" y="208.8" width="4.8" height="2.3" fill="#efefef" opacity=".9"/><rect x="3.2" y="208.8" width="0.5" height="2.3" fill="#a0a0a0" /><rect x="4.9" y="208.8" width="0.4" height="1.6" fill="#a0a0a0" /><rect x="0.6" y="214.75" width="7.8" height="7.25" fill="#a0a0a0" /><rect x="1.6" y="217.05" width="4.8" height="2.3" fill="#efefef" opacity=".9"/><rect x="3.2" y="217.05" width="0.5" height="2.3" fill="#a0a0a0" /><rect x="4.9" y="217.05" width="0.4" height="1.6" fill="#a0a0a0" /><rect x="0.6" y="223.0" width="7.8" height="7.25" fill="#a0a0a0" /><rect x="1.6" y="225.3" width="4.8" height="2.3" fill="#efefef" opacity=".9"/><rect x="3.2" y="225.3" width="0.5" height="2.3" fill="#a0a0a0" /><rect x="4.9" y="225.3" width="0.4" height="1.6" fill="#a0a0a0" /><rect x="0.6" y="231.25" width="7.8" height="7.25" fill="#a0a0a0" /><rect x="1.6" y="233.55" width="4.8" height="2.3" fill="#efefef" opacity=".9"/><rect x="3.2" y="233.55" width="0.5" height="2.3" fill="#a0a0a0" /><rect x="4.9" y="233.55" width="0.4" height="1.6" fill="#a0a0a0" /><rect x="0.6" y="239.5" width="7.8" height="7.25" fill="#a0a0a0" /><rect x="1.6" y="241.8" width="4.8" height="2.3" fill="#efefef" opacity=".9"/><rect x="3.2" y="241.8" width="0.5" height="2.3" fill="#a0a0a0" /><rect x="4.9" y="241.8" width="0.4" height="1.6" fill="#a0a0a0" /><rect x="0.6" y="247.75" width="7.8" height="7.25" fill="#a0a0a0" /><rect x="1.6" y="250.05" width="4.8" height="2.3" fill="#efefef" opacity=".9"/><rect x="3.2" y="250.05" width="0.5" height="2.3" fill="#a0a0a0" /><rect x="4.9" y="250.05" width="0.4" height="1.6" fill="#a0a0a0" /><rect x="0.6" y="256.0" width="7.8" height="7.25" fill="#a0a0a0" /><rect x="1.6" y="258.3" width="4.8" height="2.3" fill="#efefef" opacity=".9"/><rect x="3.2" y="258.3" width="0.5" height="2.3" fill="#a0a0a0" /><rect x="4.9" y="258.3" width="0.4" height="1.6" fill="#a0a0a0" /><rect x="0.6" y="264.25" width="7.8" height="7.25" fill="#a0a0a0" /><rect x="1.6" y="266.55" width="4.8" height="2.3" fill="#efefef" opacity=".9"/><rect x="3.2" y="266.55" width="0.5" height="2.3" fill="#a0a0a0" /><rect x="4.9" y="266.55" width="0.4" height="1.6" fill="#a0a0a0" /><rect x="0.6" y="272.5" width="7.8" height="7.25" fill="#a0a0a0" /><rect x="1.6" y="274.8" width="4.8" height="2.3" fill="#efefef" opacity=".9"/><rect x="3.2" y="274.8" width="0.5" height="2.3" fill="#a0a0a0" /><rect x="4.9" y="274.8" width="0.4" height="1.6" fill="#a0a0a0" /><rect x="0.6" y="280.75" width="7.8" height="7.25" fill="#a0a0a0" /><rect x="1.6" y="283.05" width="4.8" height="2.3" fill="#efefef" opacity=".9"/><rect x="3.2" y="283.05" width="0.5" height="2.3" fill="#a0a0a0" /><rect x="4.9" y="283.05" width="0.4" height="1.6" fill="#a0a0a0" /><rect x="0.6" y="289.0" width="7.8" height="7.25" fill="#a0a0a0" /><rect x="1.6" y="291.3" width="4.8" height="2.3" fill="#efefef" opacity=".9"/><rect x="3.2" y="291.3" width="0.5" height="2.3" fill="#a0a0a0" /><rect x="4.9" y="291.3" width="0.4" height="1.6" fill="#a0a0a0" /><rect x="0.6" y="297.25" width="7.8" height="7.25" fill="#a0a0a0" /><rect x="1.6" y="299.55" width="4.8" height="2.3" fill="#efefef" opacity=".9"/><rect x="3.2" y="299.55" width="0.5" height="2.3" fill="#a0a0a0" /><rect x="4.9" y="299.55" width="0.4" height="1.6" fill="#a0a0a0" /><rect x="0.6" y="305.5" width="7.8" height="7.25" fill="#a0a0a0" /><rect x="1.6" y="307.8" width="4.8" height="2.3" fill="#efefef" opacity=".9"/><rect x="3.2" y="307.8" width="0.5" height="2.3" fill="#a0a0a0" /><rect x="4.9" y="307.8" width="0.4" height="1.6" fill="#a0a0a0" /><rect x="0.6" y="313.75" width="7.8" height="7.25" fill="#a0a0a0" /><rect x="1.6" y="316.05" width="4.8" height="2.3" fill="#efefef" opacity=".9"/><rect x="3.2" y="316.05" width="0.5" height="2.3" fill="#a0a0a0" /><rect x="4.9" y="316.05" width="0.4" height="1.6" fill="#a0a0a0" /><rect x="0.6" y="322.0" width="7.8" height="7.25" fill="#a0a0a0" /><rect x="1.6" y="324.3" width="4.8" height="2.3" fill="#efefef" opacity=".9"/><rect x="3.2" y="324.3" width="0.5" height="2.3" fill="#a0a0a0" /><rect x="4.9" y="324.3" width="0.4" height="1.6" fill="#a0a0a0" /><rect x="0.6" y="330.25" width="7.8" height="7.25" fill="#a0a0a0" /><rect x="1.6" y="332.55" width="4.8" height="2.3" fill="#efefef" opacity=".9"/><rect x="3.2" y="332.55" width="0.5" height="2.3" fill="#a0a0a0" /><rect x="4.9" y="332.55" width="0.4" height="1.6" fill="#a0a0a0" /><rect x="0.6" y="338.5" width="7.8" height="7.25" fill="#a0a0a0" /><rect x="1.6" y="340.8" width="4.8" height="2.3" fill="#efefef" opacity=".9"/><rect x="3.2" y="340.8" width="0.5" height="2.3" fill="#a0a0a0" /><rect x="4.9" y="340.8" width="0.4" height="1.6" fill="#a0a0a0" /><rect x="0.6" y="346.75" width="7.8" height="7.25" fill="#a0a0a0" /><rect x="1.6" y="349.05" width="4.8" height="2.3" fill="#efefef" opacity=".9"/><rect x="3.2" y="349.05" width="0.5" height="2.3" fill="#a0a0a0" /><rect x="4.9" y="349.05" width="0.4" height="1.6" fill="#a0a0a0" /><rect x="0" y="354.5" width="113" height="12.3" fill="url(#base1)" /><rect x="8.5" y="354.5" width="0.8" height="8" fill="#6c6c6c" /><rect x="103.4" y="354.5" width="0.8" height="8" fill="#6c6c6c" /><rect x="0" y="366.6" width="8.2" height="3" fill="#151515" /><rect x="104.8" y="366.6" width="8.2" height="3" fill="#151515" /><rect x="12.2" y="8.3" width="88.6" height="15.7" fill="#dedede" stroke="#909090" stroke-width=".7" rx="1"/><rect x="15.4" y="10.0" width="3.4" height="5" fill="#505050" /><rect x="16.2" y="10.0" width="1.8" height="1.7" fill="#8a8a8a" /><rect x="19.45" y="10.0" width="3.4" height="5" fill="#505050" /><rect x="20.25" y="10.0" width="1.8" height="1.7" fill="#8a8a8a" /><rect x="23.5" y="10.0" width="3.4" height="5" fill="#505050" /><rect x="24.3" y="10.0" width="1.8" height="1.7" fill="#8a8a8a" /><rect x="27.55" y="10.0" width="3.4" height="5" fill="#505050" /><rect x="28.35" y="10.0" width="1.8" height="1.7" fill="#8a8a8a" /><rect x="31.6" y="10.0" width="3.4" height="5" fill="#505050" /><rect x="32.4" y="10.0" width="1.8" height="1.7" fill="#8a8a8a" /><rect x="35.65" y="10.0" width="3.4" height="5" fill="#505050" /><rect x="36.45" y="10.0" width="1.8" height="1.7" fill="#8a8a8a" /><rect x="39.7" y="10.0" width="3.4" height="5" fill="#505050" /><rect x="40.5" y="10.0" width="1.8" height="1.7" fill="#8a8a8a" /><rect x="43.75" y="10.0" width="3.4" height="5" fill="#505050" /><rect x="44.55" y="10.0" width="1.8" height="1.7" fill="#8a8a8a" /><rect x="47.8" y="10.0" width="3.4" height="5" fill="#505050" /><rect x="48.6" y="10.0" width="1.8" height="1.7" fill="#8a8a8a" /><rect x="51.85" y="10.0" width="3.4" height="5" fill="#505050" /><rect x="52.65" y="10.0" width="1.8" height="1.7" fill="#8a8a8a" /><rect x="55.9" y="10.0" width="3.4" height="5" fill="#505050" /><rect x="56.7" y="10.0" width="1.8" height="1.7" fill="#8a8a8a" /><rect x="59.95" y="10.0" width="3.4" height="5" fill="#505050" /><rect x="60.75" y="10.0" width="1.8" height="1.7" fill="#8a8a8a" /><rect x="64.0" y="10.0" width="3.4" height="5" fill="#505050" /><rect x="64.8" y="10.0" width="1.8" height="1.7" fill="#8a8a8a" /><rect x="68.05" y="10.0" width="3.4" height="5" fill="#505050" /><rect x="68.85" y="10.0" width="1.8" height="1.7" fill="#8a8a8a" /><rect x="72.1" y="10.0" width="3.4" height="5" fill="#505050" /><rect x="72.9" y="10.0" width="1.8" height="1.7" fill="#8a8a8a" /><rect x="76.15" y="10.0" width="3.4" height="5" fill="#505050" /><rect x="76.95" y="10.0" width="1.8" height="1.7" fill="#8a8a8a" /><rect x="15.4" y="17.2" width="3.4" height="5" fill="#505050" /><rect x="16.2" y="17.2" width="1.8" height="1.7" fill="#8a8a8a" /><rect x="19.45" y="17.2" width="3.4" height="5" fill="#505050" /><rect x="20.25" y="17.2" width="1.8" height="1.7" fill="#8a8a8a" /><rect x="23.5" y="17.2" width="3.4" height="5" fill="#505050" /><rect x="24.3" y="17.2" width="1.8" height="1.7" fill="#8a8a8a" /><rect x="27.55" y="17.2" width="3.4" height="5" fill="#505050" /><rect x="28.35" y="17.2" width="1.8" height="1.7" fill="#8a8a8a" /><rect x="31.6" y="17.2" width="3.4" height="5" fill="#505050" /><rect x="32.4" y="17.2" width="1.8" height="1.7" fill="#8a8a8a" /><rect x="35.65" y="17.2" width="3.4" height="5" fill="#505050" /><rect x="36.45" y="17.2" width="1.8" height="1.7" fill="#8a8a8a" /><rect x="39.7" y="17.2" width="3.4" height="5" fill="#505050" /><rect x="40.5" y="17.2" width="1.8" height="1.7" fill="#8a8a8a" /><rect x="43.75" y="17.2" width="3.4" height="5" fill="#505050" /><rect x="44.55" y="17.2" width="1.8" height="1.7" fill="#8a8a8a" /><rect x="47.8" y="17.2" width="3.4" height="5" fill="#505050" /><rect x="48.6" y="17.2" width="1.8" height="1.7" fill="#8a8a8a" /><rect x="51.85" y="17.2" width="3.4" height="5" fill="#505050" /><rect x="52.65" y="17.2" width="1.8" height="1.7" fill="#8a8a8a" /><rect x="55.9" y="17.2" width="3.4" height="5" fill="#505050" /><rect x="56.7" y="17.2" width="1.8" height="1.7" fill="#8a8a8a" /><rect x="59.95" y="17.2" width="3.4" height="5" fill="#505050" /><rect x="60.75" y="17.2" width="1.8" height="1.7" fill="#8a8a8a" /><rect x="64.0" y="17.2" width="3.4" height="5" fill="#505050" /><rect x="64.8" y="17.2" width="1.8" height="1.7" fill="#8a8a8a" /><rect x="68.05" y="17.2" width="3.4" height="5" fill="#505050" /><rect x="68.85" y="17.2" width="1.8" height="1.7" fill="#8a8a8a" /><rect x="72.1" y="17.2" width="3.4" height="5" fill="#505050" /><rect x="72.9" y="17.2" width="1.8" height="1.7" fill="#8a8a8a" /><rect x="76.15" y="17.2" width="3.4" height="5" fill="#505050" /><rect x="76.95" y="17.2" width="1.8" height="1.7" fill="#8a8a8a" /><rect x="81.6" y="9.2" width="17" height="13.9" fill="#d2d2d2" /><rect x="82.8" y="9.8" width="1.6" height="12.7" fill="#f6f6f6" /><rect x="86.1" y="9.8" width="1.6" height="12.7" fill="#f6f6f6" /><rect x="89.4" y="9.8" width="1.6" height="12.7" fill="#f6f6f6" /><rect x="92.7" y="9.8" width="1.6" height="12.7" fill="#f6f6f6" /><rect x="96.0" y="9.8" width="1.6" height="12.7" fill="#f6f6f6" /><rect x="11.6" y="24.7" width="89.8" height="7.85" fill="#6b6b6b" /><rect x="11.6" y="24.7" width="89.8" height="1" fill="#858585" /><rect x="12.6" y="26.0" width="2.4" height="5.25" fill="#4c4c4c" /><rect x="16.1" y="26.1" width="2.2" height="2.1" fill="#b9b9b9" /><rect x="16.6" y="26.7" width="1.2" height="1.1" fill="#5a5a5a" /><rect x="19.05" y="26.1" width="2.2" height="2.1" fill="#b9b9b9" /><rect x="19.55" y="26.7" width="1.2" height="1.1" fill="#5a5a5a" /><rect x="22.0" y="26.1" width="2.2" height="2.1" fill="#b9b9b9" /><rect x="22.5" y="26.7" width="1.2" height="1.1" fill="#5a5a5a" /><rect x="24.95" y="26.1" width="2.2" height="2.1" fill="#b9b9b9" /><rect x="25.45" y="26.7" width="1.2" height="1.1" fill="#5a5a5a" /><rect x="27.9" y="26.1" width="2.2" height="2.1" fill="#b9b9b9" /><rect x="28.4" y="26.7" width="1.2" height="1.1" fill="#5a5a5a" /><rect x="30.85" y="26.1" width="2.2" height="2.1" fill="#b9b9b9" /><rect x="31.35" y="26.7" width="1.2" height="1.1" fill="#5a5a5a" /><rect x="16.1" y="29.0" width="2.2" height="2.1" fill="#b9b9b9" /><rect x="16.6" y="29.6" width="1.2" height="1.1" fill="#5a5a5a" /><rect x="19.05" y="29.0" width="2.2" height="2.1" fill="#b9b9b9" /><rect x="19.55" y="29.6" width="1.2" height="1.1" fill="#5a5a5a" /><rect x="22.0" y="29.0" width="2.2" height="2.1" fill="#b9b9b9" /><rect x="22.5" y="29.6" width="1.2" height="1.1" fill="#5a5a5a" /><rect x="24.95" y="29.0" width="2.2" height="2.1" fill="#b9b9b9" /><rect x="25.45" y="29.6" width="1.2" height="1.1" fill="#5a5a5a" /><rect x="27.9" y="29.0" width="2.2" height="2.1" fill="#b9b9b9" /><rect x="28.4" y="29.6" width="1.2" height="1.1" fill="#5a5a5a" /><rect x="30.85" y="29.0" width="2.2" height="2.1" fill="#b9b9b9" /><rect x="31.35" y="29.6" width="1.2" height="1.1" fill="#5a5a5a" /><rect x="35.1" y="26.1" width="2.2" height="2.1" fill="#b9b9b9" /><rect x="35.6" y="26.7" width="1.2" height="1.1" fill="#5a5a5a" /><rect x="38.05" y="26.1" width="2.2" height="2.1" fill="#b9b9b9" /><rect x="38.55" y="26.7" width="1.2" height="1.1" fill="#5a5a5a" /><rect x="41.0" y="26.1" width="2.2" height="2.1" fill="#b9b9b9" /><rect x="41.5" y="26.7" width="1.2" height="1.1" fill="#5a5a5a" /><rect x="43.95" y="26.1" width="2.2" height="2.1" fill="#b9b9b9" /><rect x="44.45" y="26.7" width="1.2" height="1.1" fill="#5a5a5a" /><rect x="46.9" y="26.1" width="2.2" height="2.1" fill="#b9b9b9" /><rect x="47.4" y="26.7" width="1.2" height="1.1" fill="#5a5a5a" /><rect x="49.85" y="26.1" width="2.2" height="2.1" fill="#b9b9b9" /><rect x="50.35" y="26.7" width="1.2" height="1.1" fill="#5a5a5a" /><rect x="35.1" y="29.0" width="2.2" height="2.1" fill="#b9b9b9" /><rect x="35.6" y="29.6" width="1.2" height="1.1" fill="#5a5a5a" /><rect x="38.05" y="29.0" width="2.2" height="2.1" fill="#b9b9b9" /><rect x="38.55" y="29.6" width="1.2" height="1.1" fill="#5a5a5a" /><rect x="41.0" y="29.0" width="2.2" height="2.1" fill="#b9b9b9" /><rect x="41.5" y="29.6" width="1.2" height="1.1" fill="#5a5a5a" /><rect x="43.95" y="29.0" width="2.2" height="2.1" fill="#b9b9b9" /><rect x="44.45" y="29.6" width="1.2" height="1.1" fill="#5a5a5a" /><rect x="46.9" y="29.0" width="2.2" height="2.1" fill="#b9b9b9" /><rect x="47.4" y="29.6" width="1.2" height="1.1" fill="#5a5a5a" /><rect x="49.85" y="29.0" width="2.2" height="2.1" fill="#b9b9b9" /><rect x="50.35" y="29.6" width="1.2" height="1.1" fill="#5a5a5a" /><rect x="54.6" y="26.1" width="2.2" height="2.1" fill="#b9b9b9" /><rect x="55.1" y="26.7" width="1.2" height="1.1" fill="#5a5a5a" /><rect x="57.55" y="26.1" width="2.2" height="2.1" fill="#b9b9b9" /><rect x="58.05" y="26.7" width="1.2" height="1.1" fill="#5a5a5a" /><rect x="60.5" y="26.1" width="2.2" height="2.1" fill="#b9b9b9" /><rect x="61.0" y="26.7" width="1.2" height="1.1" fill="#5a5a5a" /><rect x="63.45" y="26.1" width="2.2" height="2.1" fill="#b9b9b9" /><rect x="63.95" y="26.7" width="1.2" height="1.1" fill="#5a5a5a" /><rect x="66.4" y="26.1" width="2.2" height="2.1" fill="#b9b9b9" /><rect x="66.9" y="26.7" width="1.2" height="1.1" fill="#5a5a5a" /><rect x="69.35" y="26.1" width="2.2" height="2.1" fill="#b9b9b9" /><rect x="69.85" y="26.7" width="1.2" height="1.1" fill="#5a5a5a" /><rect x="54.6" y="29.0" width="2.2" height="2.1" fill="#b9b9b9" /><rect x="55.1" y="29.6" width="1.2" height="1.1" fill="#5a5a5a" /><rect x="57.55" y="29.0" width="2.2" height="2.1" fill="#b9b9b9" /><rect x="58.05" y="29.6" width="1.2" height="1.1" fill="#5a5a5a" /><rect x="60.5" y="29.0" width="2.2" height="2.1" fill="#b9b9b9" /><rect x="61.0" y="29.6" width="1.2" height="1.1" fill="#5a5a5a" /><rect x="63.45" y="29.0" width="2.2" height="2.1" fill="#b9b9b9" /><rect x="63.95" y="29.6" width="1.2" height="1.1" fill="#5a5a5a" /><rect x="66.4" y="29.0" width="2.2" height="2.1" fill="#b9b9b9" /><rect x="66.9" y="29.6" width="1.2" height="1.1" fill="#5a5a5a" /><rect x="69.35" y="29.0" width="2.2" height="2.1" fill="#b9b9b9" /><rect x="69.85" y="29.6" width="1.2" height="1.1" fill="#5a5a5a" /><rect x="73.6" y="26.1" width="2.2" height="2.1" fill="#b9b9b9" /><rect x="74.1" y="26.7" width="1.2" height="1.1" fill="#5a5a5a" /><rect x="76.55" y="26.1" width="2.2" height="2.1" fill="#b9b9b9" /><rect x="77.05" y="26.7" width="1.2" height="1.1" fill="#5a5a5a" /><rect x="79.5" y="26.1" width="2.2" height="2.1" fill="#b9b9b9" /><rect x="80.0" y="26.7" width="1.2" height="1.1" fill="#5a5a5a" /><rect x="82.45" y="26.1" width="2.2" height="2.1" fill="#b9b9b9" /><rect x="82.95" y="26.7" width="1.2" height="1.1" fill="#5a5a5a" /><rect x="85.4" y="26.1" width="2.2" height="2.1" fill="#b9b9b9" /><rect x="85.9" y="26.7" width="1.2" height="1.1" fill="#5a5a5a" /><rect x="88.35" y="26.1" width="2.2" height="2.1" fill="#b9b9b9" /><rect x="88.85" y="26.7" width="1.2" height="1.1" fill="#5a5a5a" /><rect x="73.6" y="29.0" width="2.2" height="2.1" fill="#b9b9b9" /><rect x="74.1" y="29.6" width="1.2" height="1.1" fill="#5a5a5a" /><rect x="76.55" y="29.0" width="2.2" height="2.1" fill="#b9b9b9" /><rect x="77.05" y="29.6" width="1.2" height="1.1" fill="#5a5a5a" /><rect x="79.5" y="29.0" width="2.2" height="2.1" fill="#b9b9b9" /><rect x="80.0" y="29.6" width="1.2" height="1.1" fill="#5a5a5a" /><rect x="82.45" y="29.0" width="2.2" height="2.1" fill="#b9b9b9" /><rect x="82.95" y="29.6" width="1.2" height="1.1" fill="#5a5a5a" /><rect x="85.4" y="29.0" width="2.2" height="2.1" fill="#b9b9b9" /><rect x="85.9" y="29.6" width="1.2" height="1.1" fill="#5a5a5a" /><rect x="88.35" y="29.0" width="2.2" height="2.1" fill="#b9b9b9" /><rect x="88.85" y="29.6" width="1.2" height="1.1" fill="#5a5a5a" /><rect x="93.1" y="27.7" width="2.8" height="2.4" fill="#cfcfcf" /><rect x="93.7" y="28.3" width="1.6" height="1.2" fill="#444" /><rect x="96.7" y="27.7" width="2.8" height="2.4" fill="#cfcfcf" /><rect x="97.3" y="28.3" width="1.6" height="1.2" fill="#444" /><rect x="93.1" y="25.4" width="2.8" height="2" fill="#8a8a8a" /><rect x="96.7" y="25.4" width="2.8" height="2" fill="#8a8a8a" /><rect x="11.6" y="32.95" width="89.8" height="7.85" fill="#6b6b6b" /><rect x="11.6" y="32.95" width="89.8" height="1" fill="#858585" /><rect x="12.6" y="34.25" width="2.4" height="5.25" fill="#4c4c4c" /><rect x="54.6" y="34.35" width="2.2" height="2.1" fill="#b9b9b9" /><rect x="55.1" y="34.95" width="1.2" height="1.1" fill="#5a5a5a" /><rect x="57.55" y="34.35" width="2.2" height="2.1" fill="#b9b9b9" /><rect x="58.05" y="34.95" width="1.2" height="1.1" fill="#5a5a5a" /><rect x="60.5" y="34.35" width="2.2" height="2.1" fill="#b9b9b9" /><rect x="61.0" y="34.95" width="1.2" height="1.1" fill="#5a5a5a" /><rect x="63.45" y="34.35" width="2.2" height="2.1" fill="#b9b9b9" /><rect x="63.95" y="34.95" width="1.2" height="1.1" fill="#5a5a5a" /><rect x="66.4" y="34.35" width="2.2" height="2.1" fill="#b9b9b9" /><rect x="66.9" y="34.95" width="1.2" height="1.1" fill="#5a5a5a" /><rect x="69.35" y="34.35" width="2.2" height="2.1" fill="#b9b9b9" /><rect x="69.85" y="34.95" width="1.2" height="1.1" fill="#5a5a5a" /><rect x="54.6" y="37.25" width="2.2" height="2.1" fill="#b9b9b9" /><rect x="55.1" y="37.85" width="1.2" height="1.1" fill="#5a5a5a" /><rect x="57.55" y="37.25" width="2.2" height="2.1" fill="#b9b9b9" /><rect x="58.05" y="37.85" width="1.2" height="1.1" fill="#5a5a5a" /><rect x="60.5" y="37.25" width="2.2" height="2.1" fill="#b9b9b9" /><rect x="61.0" y="37.85" width="1.2" height="1.1" fill="#5a5a5a" /><rect x="63.45" y="37.25" width="2.2" height="2.1" fill="#b9b9b9" /><rect x="63.95" y="37.85" width="1.2" height="1.1" fill="#5a5a5a" /><rect x="66.4" y="37.25" width="2.2" height="2.1" fill="#b9b9b9" /><rect x="66.9" y="37.85" width="1.2" height="1.1" fill="#5a5a5a" /><rect x="69.35" y="37.25" width="2.2" height="2.1" fill="#b9b9b9" /><rect x="69.85" y="37.85" width="1.2" height="1.1" fill="#5a5a5a" /><rect x="73.6" y="34.35" width="2.2" height="2.1" fill="#b9b9b9" /><rect x="74.1" y="34.95" width="1.2" height="1.1" fill="#5a5a5a" /><rect x="76.55" y="34.35" width="2.2" height="2.1" fill="#b9b9b9" /><rect x="77.05" y="34.95" width="1.2" height="1.1" fill="#5a5a5a" /><rect x="79.5" y="34.35" width="2.2" height="2.1" fill="#b9b9b9" /><rect x="80.0" y="34.95" width="1.2" height="1.1" fill="#5a5a5a" /><rect x="82.45" y="34.35" width="2.2" height="2.1" fill="#b9b9b9" /><rect x="82.95" y="34.95" width="1.2" height="1.1" fill="#5a5a5a" /><rect x="85.4" y="34.35" width="2.2" height="2.1" fill="#b9b9b9" /><rect x="85.9" y="34.95" width="1.2" height="1.1" fill="#5a5a5a" /><rect x="88.35" y="34.35" width="2.2" height="2.1" fill="#b9b9b9" /><rect x="88.85" y="34.95" width="1.2" height="1.1" fill="#5a5a5a" /><rect x="73.6" y="37.25" width="2.2" height="2.1" fill="#b9b9b9" /><rect x="74.1" y="37.85" width="1.2" height="1.1" fill="#5a5a5a" /><rect x="76.55" y="37.25" width="2.2" height="2.1" fill="#b9b9b9" /><rect x="77.05" y="37.85" width="1.2" height="1.1" fill="#5a5a5a" /><rect x="79.5" y="37.25" width="2.2" height="2.1" fill="#b9b9b9" /><rect x="80.0" y="37.85" width="1.2" height="1.1" fill="#5a5a5a" /><rect x="82.45" y="37.25" width="2.2" height="2.1" fill="#b9b9b9" /><rect x="82.95" y="37.85" width="1.2" height="1.1" fill="#5a5a5a" /><rect x="85.4" y="37.25" width="2.2" height="2.1" fill="#b9b9b9" /><rect x="85.9" y="37.85" width="1.2" height="1.1" fill="#5a5a5a" /><rect x="88.35" y="37.25" width="2.2" height="2.1" fill="#b9b9b9" /><rect x="88.85" y="37.85" width="1.2" height="1.1" fill="#5a5a5a" /><rect x="16.1" y="34.35" width="37" height="4.95" fill="#5a5a5a" stroke="#7a7a7a" stroke-width=".4"/><rect x="93.1" y="36.35" width="2.8" height="2.4" fill="#cfcfcf" /><rect x="93.7" y="36.95" width="1.6" height="1.2" fill="#444" /><rect x="96.7" y="36.35" width="2.8" height="2.4" fill="#cfcfcf" /><rect x="97.3" y="36.95" width="1.6" height="1.2" fill="#444" /><rect x="11.6" y="41.2" width="89.8" height="7.85" fill="#6b6b6b" /><rect x="11.6" y="41.2" width="89.8" height="1" fill="#858585" /><rect x="12.6" y="42.5" width="2.4" height="5.25" fill="#4c4c4c" /><rect x="16.1" y="42.6" width="2.2" height="2.1" fill="#b9b9b9" /><rect x="16.6" y="43.2" width="1.2" height="1.1" fill="#5a5a5a" /><rect x="19.05" y="42.6" width="2.2" height="2.1" fill="#b9b9b9" /><rect x="19.55" y="43.2" width="1.2" height="1.1" fill="#5a5a5a" /><rect x="22.0" y="42.6" width="2.2" height="2.1" fill="#b9b9b9" /><rect x="22.5" y="43.2" width="1.2" height="1.1" fill="#5a5a5a" /><rect x="24.95" y="42.6" width="2.2" height="2.1" fill="#b9b9b9" /><rect x="25.45" y="43.2" width="1.2" height="1.1" fill="#5a5a5a" /><rect x="27.9" y="42.6" width="2.2" height="2.1" fill="#b9b9b9" /><rect x="28.4" y="43.2" width="1.2" height="1.1" fill="#5a5a5a" /><rect x="30.85" y="42.6" width="2.2" height="2.1" fill="#b9b9b9" /><rect x="31.35" y="43.2" width="1.2" height="1.1" fill="#5a5a5a" /><rect x="16.1" y="45.5" width="2.2" height="2.1" fill="#b9b9b9" /><rect x="16.6" y="46.1" width="1.2" height="1.1" fill="#5a5a5a" /><rect x="19.05" y="45.5" width="2.2" height="2.1" fill="#b9b9b9" /><rect x="19.55" y="46.1" width="1.2" height="1.1" fill="#5a5a5a" /><rect x="22.0" y="45.5" width="2.2" height="2.1" fill="#b9b9b9" /><rect x="22.5" y="46.1" width="1.2" height="1.1" fill="#5a5a5a" /><rect x="24.95" y="45.5" width="2.2" height="2.1" fill="#b9b9b9" /><rect x="25.45" y="46.1" width="1.2" height="1.1" fill="#5a5a5a" /><rect x="27.9" y="45.5" width="2.2" height="2.1" fill="#b9b9b9" /><rect x="28.4" y="46.1" width="1.2" height="1.1" fill="#5a5a5a" /><rect x="30.85" y="45.5" width="2.2" height="2.1" fill="#b9b9b9" /><rect x="31.35" y="46.1" width="1.2" height="1.1" fill="#5a5a5a" /><rect x="35.1" y="42.6" width="2.2" height="2.1" fill="#b9b9b9" /><rect x="35.6" y="43.2" width="1.2" height="1.1" fill="#5a5a5a" /><rect x="38.05" y="42.6" width="2.2" height="2.1" fill="#b9b9b9" /><rect x="38.55" y="43.2" width="1.2" height="1.1" fill="#5a5a5a" /><rect x="41.0" y="42.6" width="2.2" height="2.1" fill="#b9b9b9" /><rect x="41.5" y="43.2" width="1.2" height="1.1" fill="#5a5a5a" /><rect x="43.95" y="42.6" width="2.2" height="2.1" fill="#b9b9b9" /><rect x="44.45" y="43.2" width="1.2" height="1.1" fill="#5a5a5a" /><rect x="46.9" y="42.6" width="2.2" height="2.1" fill="#b9b9b9" /><rect x="47.4" y="43.2" width="1.2" height="1.1" fill="#5a5a5a" /><rect x="49.85" y="42.6" width="2.2" height="2.1" fill="#b9b9b9" /><rect x="50.35" y="43.2" width="1.2" height="1.1" fill="#5a5a5a" /><rect x="35.1" y="45.5" width="2.2" height="2.1" fill="#b9b9b9" /><rect x="35.6" y="46.1" width="1.2" height="1.1" fill="#5a5a5a" /><rect x="38.05" y="45.5" width="2.2" height="2.1" fill="#b9b9b9" /><rect x="38.55" y="46.1" width="1.2" height="1.1" fill="#5a5a5a" /><rect x="41.0" y="45.5" width="2.2" height="2.1" fill="#b9b9b9" /><rect x="41.5" y="46.1" width="1.2" height="1.1" fill="#5a5a5a" /><rect x="43.95" y="45.5" width="2.2" height="2.1" fill="#b9b9b9" /><rect x="44.45" y="46.1" width="1.2" height="1.1" fill="#5a5a5a" /><rect x="46.9" y="45.5" width="2.2" height="2.1" fill="#b9b9b9" /><rect x="47.4" y="46.1" width="1.2" height="1.1" fill="#5a5a5a" /><rect x="49.85" y="45.5" width="2.2" height="2.1" fill="#b9b9b9" /><rect x="50.35" y="46.1" width="1.2" height="1.1" fill="#5a5a5a" /><rect x="54.6" y="42.6" width="2.2" height="2.1" fill="#b9b9b9" /><rect x="55.1" y="43.2" width="1.2" height="1.1" fill="#5a5a5a" /><rect x="57.55" y="42.6" width="2.2" height="2.1" fill="#b9b9b9" /><rect x="58.05" y="43.2" width="1.2" height="1.1" fill="#5a5a5a" /><rect x="60.5" y="42.6" width="2.2" height="2.1" fill="#b9b9b9" /><rect x="61.0" y="43.2" width="1.2" height="1.1" fill="#5a5a5a" /><rect x="63.45" y="42.6" width="2.2" height="2.1" fill="#b9b9b9" /><rect x="63.95" y="43.2" width="1.2" height="1.1" fill="#5a5a5a" /><rect x="66.4" y="42.6" width="2.2" height="2.1" fill="#b9b9b9" /><rect x="66.9" y="43.2" width="1.2" height="1.1" fill="#5a5a5a" /><rect x="69.35" y="42.6" width="2.2" height="2.1" fill="#b9b9b9" /><rect x="69.85" y="43.2" width="1.2" height="1.1" fill="#5a5a5a" /><rect x="54.6" y="45.5" width="2.2" height="2.1" fill="#b9b9b9" /><rect x="55.1" y="46.1" width="1.2" height="1.1" fill="#5a5a5a" /><rect x="57.55" y="45.5" width="2.2" height="2.1" fill="#b9b9b9" /><rect x="58.05" y="46.1" width="1.2" height="1.1" fill="#5a5a5a" /><rect x="60.5" y="45.5" width="2.2" height="2.1" fill="#b9b9b9" /><rect x="61.0" y="46.1" width="1.2" height="1.1" fill="#5a5a5a" /><rect x="63.45" y="45.5" width="2.2" height="2.1" fill="#b9b9b9" /><rect x="63.95" y="46.1" width="1.2" height="1.1" fill="#5a5a5a" /><rect x="66.4" y="45.5" width="2.2" height="2.1" fill="#b9b9b9" /><rect x="66.9" y="46.1" width="1.2" height="1.1" fill="#5a5a5a" /><rect x="69.35" y="45.5" width="2.2" height="2.1" fill="#b9b9b9" /><rect x="69.85" y="46.1" width="1.2" height="1.1" fill="#5a5a5a" /><rect x="73.6" y="42.6" width="2.2" height="2.1" fill="#b9b9b9" /><rect x="74.1" y="43.2" width="1.2" height="1.1" fill="#5a5a5a" /><rect x="76.55" y="42.6" width="2.2" height="2.1" fill="#b9b9b9" /><rect x="77.05" y="43.2" width="1.2" height="1.1" fill="#5a5a5a" /><rect x="79.5" y="42.6" width="2.2" height="2.1" fill="#b9b9b9" /><rect x="80.0" y="43.2" width="1.2" height="1.1" fill="#5a5a5a" /><rect x="82.45" y="42.6" width="2.2" height="2.1" fill="#b9b9b9" /><rect x="82.95" y="43.2" width="1.2" height="1.1" fill="#5a5a5a" /><rect x="85.4" y="42.6" width="2.2" height="2.1" fill="#b9b9b9" /><rect x="85.9" y="43.2" width="1.2" height="1.1" fill="#5a5a5a" /><rect x="88.35" y="42.6" width="2.2" height="2.1" fill="#b9b9b9" /><rect x="88.85" y="43.2" width="1.2" height="1.1" fill="#5a5a5a" /><rect x="73.6" y="45.5" width="2.2" height="2.1" fill="#b9b9b9" /><rect x="74.1" y="46.1" width="1.2" height="1.1" fill="#5a5a5a" /><rect x="76.55" y="45.5" width="2.2" height="2.1" fill="#b9b9b9" /><rect x="77.05" y="46.1" width="1.2" height="1.1" fill="#5a5a5a" /><rect x="79.5" y="45.5" width="2.2" height="2.1" fill="#b9b9b9" /><rect x="80.0" y="46.1" width="1.2" height="1.1" fill="#5a5a5a" /><rect x="82.45" y="45.5" width="2.2" height="2.1" fill="#b9b9b9" /><rect x="82.95" y="46.1" width="1.2" height="1.1" fill="#5a5a5a" /><rect x="85.4" y="45.5" width="2.2" height="2.1" fill="#b9b9b9" /><rect x="85.9" y="46.1" width="1.2" height="1.1" fill="#5a5a5a" /><rect x="88.35" y="45.5" width="2.2" height="2.1" fill="#b9b9b9" /><rect x="88.85" y="46.1" width="1.2" height="1.1" fill="#5a5a5a" /><rect x="93.1" y="44.2" width="2.8" height="2.4" fill="#cfcfcf" /><rect x="93.7" y="44.8" width="1.6" height="1.2" fill="#444" /><rect x="96.7" y="44.2" width="2.8" height="2.4" fill="#cfcfcf" /><rect x="97.3" y="44.8" width="1.6" height="1.2" fill="#444" /><rect x="93.1" y="41.9" width="2.8" height="2" fill="#8a8a8a" /><rect x="96.7" y="41.9" width="2.8" height="2" fill="#8a8a8a" /><rect x="45.1" y="59.25" width="24" height="8" fill="#8b8b8b" stroke="#6a6a6a" stroke-width=".5"/><rect x="47.6" y="61.45" width="19" height="5.8" fill="#4e4e4e" /><rect x="17.9" y="66.45" width="77.5" height="65" fill="#cfcfcf" stroke="#8e8e8e" stroke-width=".7"/><defs><linearGradient id="scr" x1="1" y1="0" x2="0" y2="1"><stop offset="0" stop-color="#0d55b8"/><stop offset=".45" stop-color="#1473d6"/><stop offset="1" stop-color="#2f9cf2"/></linearGradient></defs><rect x="20.8" y="69.05" width="72" height="56.8" fill="url(#scr)" stroke="#5a6a7a" stroke-width=".5"/><rect x="44.1" y="127.25" width="25" height="3.2" fill="#aaa" stroke="#888" stroke-width=".4" rx=".8"/><rect x="46.6" y="128.25" width="2" height="1.2" fill="#e8e8e8" /><rect x="50.1" y="128.25" width="2" height="1.2" fill="#e8e8e8" /><rect x="53.6" y="128.25" width="2" height="1.2" fill="#e8e8e8" /><rect x="57.1" y="128.25" width="2" height="1.2" fill="#e8e8e8" /><rect x="60.6" y="128.25" width="2" height="1.2" fill="#e8e8e8" /><rect x="64.1" y="128.25" width="2" height="1.2" fill="#e8e8e8" /><rect x="12.6" y="132.05" width="87.8" height="7" fill="#6e6e6e" /><rect x="12.6" y="132.05" width="87.8" height="1.2" fill="#9a9a9a" /><rect x="18.6" y="135.45" width="4" height="1" fill="#c9c9c9" /><rect x="24.6" y="135.45" width="4" height="1" fill="#c9c9c9" /><rect x="30.6" y="135.45" width="4" height="1" fill="#c9c9c9" /><rect x="36.6" y="135.45" width="4" height="1" fill="#c9c9c9" /><rect x="42.6" y="135.45" width="4" height="1" fill="#c9c9c9" /><rect x="48.6" y="135.45" width="4" height="1" fill="#c9c9c9" /><rect x="54.6" y="135.45" width="4" height="1" fill="#c9c9c9" /><rect x="60.6" y="135.45" width="4" height="1" fill="#c9c9c9" /><rect x="66.6" y="135.45" width="4" height="1" fill="#c9c9c9" /><rect x="72.6" y="135.45" width="4" height="1" fill="#c9c9c9" /><rect x="78.6" y="135.45" width="4" height="1" fill="#c9c9c9" /><rect x="84.6" y="135.45" width="4" height="1" fill="#c9c9c9" /><rect x="90.6" y="135.45" width="4" height="1" fill="#c9c9c9" /><rect x="11.6" y="140.0" width="89.8" height="8.25" fill="#2e2e2e" /><defs><linearGradient id="tray" x1="0" y1="0" x2="0" y2="1"><stop offset="0" stop-color="#e6e6e6"/><stop offset=".5" stop-color="#bdbdbd"/><stop offset="1" stop-color="#9c9c9c"/></linearGradient></defs><rect x="11.1" y="148.55" width="90.8" height="7.35" fill="url(#tray)" stroke="#7a7a7a" stroke-width=".4"/><circle cx="56.1" cy="152.175" r="2.9" fill="#efefef" stroke="#666" stroke-width=".6"/><path d="M56.1 150.575v3.2" stroke="#666" stroke-width=".8"/><rect x="11.6" y="156.7" width="89.8" height="7.85" fill="#6f6f6f" /><rect x="18.6" y="158.1" width="76" height="5" fill="#b4b4b4" /><rect x="19.1" y="158.6" width="1" height="1.4" fill="#8a8a8a" /><rect x="19.1" y="161.1" width="1" height="1.2" fill="#d2d2d2" /><rect x="21.1" y="160.0" width="1" height="1.4" fill="#8a8a8a" /><rect x="21.1" y="159.9" width="1" height="1.2" fill="#d2d2d2" /><rect x="23.1" y="158.6" width="1" height="1.4" fill="#8a8a8a" /><rect x="23.1" y="161.1" width="1" height="1.2" fill="#d2d2d2" /><rect x="25.1" y="160.0" width="1" height="1.4" fill="#8a8a8a" /><rect x="25.1" y="159.9" width="1" height="1.2" fill="#d2d2d2" /><rect x="27.1" y="158.6" width="1" height="1.4" fill="#8a8a8a" /><rect x="27.1" y="161.1" width="1" height="1.2" fill="#d2d2d2" /><rect x="29.1" y="160.0" width="1" height="1.4" fill="#8a8a8a" /><rect x="29.1" y="159.9" width="1" height="1.2" fill="#d2d2d2" /><rect x="31.1" y="158.6" width="1" height="1.4" fill="#8a8a8a" /><rect x="31.1" y="161.1" width="1" height="1.2" fill="#d2d2d2" /><rect x="33.1" y="160.0" width="1" height="1.4" fill="#8a8a8a" /><rect x="33.1" y="159.9" width="1" height="1.2" fill="#d2d2d2" /><rect x="35.1" y="158.6" width="1" height="1.4" fill="#8a8a8a" /><rect x="35.1" y="161.1" width="1" height="1.2" fill="#d2d2d2" /><rect x="37.1" y="160.0" width="1" height="1.4" fill="#8a8a8a" /><rect x="37.1" y="159.9" width="1" height="1.2" fill="#d2d2d2" /><rect x="39.1" y="158.6" width="1" height="1.4" fill="#8a8a8a" /><rect x="39.1" y="161.1" width="1" height="1.2" fill="#d2d2d2" /><rect x="41.1" y="160.0" width="1" height="1.4" fill="#8a8a8a" /><rect x="41.1" y="159.9" width="1" height="1.2" fill="#d2d2d2" /><rect x="43.1" y="158.6" width="1" height="1.4" fill="#8a8a8a" /><rect x="43.1" y="161.1" width="1" height="1.2" fill="#d2d2d2" /><rect x="45.1" y="160.0" width="1" height="1.4" fill="#8a8a8a" /><rect x="45.1" y="159.9" width="1" height="1.2" fill="#d2d2d2" /><rect x="47.1" y="158.6" width="1" height="1.4" fill="#8a8a8a" /><rect x="47.1" y="161.1" width="1" height="1.2" fill="#d2d2d2" /><rect x="49.1" y="160.0" width="1" height="1.4" fill="#8a8a8a" /><rect x="49.1" y="159.9" width="1" height="1.2" fill="#d2d2d2" /><rect x="51.1" y="158.6" width="1" height="1.4" fill="#8a8a8a" /><rect x="51.1" y="161.1" width="1" height="1.2" fill="#d2d2d2" /><rect x="53.1" y="160.0" width="1" height="1.4" fill="#8a8a8a" /><rect x="53.1" y="159.9" width="1" height="1.2" fill="#d2d2d2" /><rect x="55.1" y="158.6" width="1" height="1.4" fill="#8a8a8a" /><rect x="55.1" y="161.1" width="1" height="1.2" fill="#d2d2d2" /><rect x="57.1" y="160.0" width="1" height="1.4" fill="#8a8a8a" /><rect x="57.1" y="159.9" width="1" height="1.2" fill="#d2d2d2" /><rect x="59.1" y="158.6" width="1" height="1.4" fill="#8a8a8a" /><rect x="59.1" y="161.1" width="1" height="1.2" fill="#d2d2d2" /><rect x="61.1" y="160.0" width="1" height="1.4" fill="#8a8a8a" /><rect x="61.1" y="159.9" width="1" height="1.2" fill="#d2d2d2" /><rect x="63.1" y="158.6" width="1" height="1.4" fill="#8a8a8a" /><rect x="63.1" y="161.1" width="1" height="1.2" fill="#d2d2d2" /><rect x="65.1" y="160.0" width="1" height="1.4" fill="#8a8a8a" /><rect x="65.1" y="159.9" width="1" height="1.2" fill="#d2d2d2" /><rect x="67.1" y="158.6" width="1" height="1.4" fill="#8a8a8a" /><rect x="67.1" y="161.1" width="1" height="1.2" fill="#d2d2d2" /><rect x="69.1" y="160.0" width="1" height="1.4" fill="#8a8a8a" /><rect x="69.1" y="159.9" width="1" height="1.2" fill="#d2d2d2" /><rect x="71.1" y="158.6" width="1" height="1.4" fill="#8a8a8a" /><rect x="71.1" y="161.1" width="1" height="1.2" fill="#d2d2d2" /><rect x="73.1" y="160.0" width="1" height="1.4" fill="#8a8a8a" /><rect x="73.1" y="159.9" width="1" height="1.2" fill="#d2d2d2" /><rect x="75.1" y="158.6" width="1" height="1.4" fill="#8a8a8a" /><rect x="75.1" y="161.1" width="1" height="1.2" fill="#d2d2d2" /><rect x="77.1" y="160.0" width="1" height="1.4" fill="#8a8a8a" /><rect x="77.1" y="159.9" width="1" height="1.2" fill="#d2d2d2" /><rect x="79.1" y="158.6" width="1" height="1.4" fill="#8a8a8a" /><rect x="79.1" y="161.1" width="1" height="1.2" fill="#d2d2d2" /><rect x="81.1" y="160.0" width="1" height="1.4" fill="#8a8a8a" /><rect x="81.1" y="159.9" width="1" height="1.2" fill="#d2d2d2" /><rect x="83.1" y="158.6" width="1" height="1.4" fill="#8a8a8a" /><rect x="83.1" y="161.1" width="1" height="1.2" fill="#d2d2d2" /><rect x="85.1" y="160.0" width="1" height="1.4" fill="#8a8a8a" /><rect x="85.1" y="159.9" width="1" height="1.2" fill="#d2d2d2" /><rect x="87.1" y="158.6" width="1" height="1.4" fill="#8a8a8a" /><rect x="87.1" y="161.1" width="1" height="1.2" fill="#d2d2d2" /><rect x="89.1" y="160.0" width="1" height="1.4" fill="#8a8a8a" /><rect x="89.1" y="159.9" width="1" height="1.2" fill="#d2d2d2" /><rect x="91.1" y="158.6" width="1" height="1.4" fill="#8a8a8a" /><rect x="91.1" y="161.1" width="1" height="1.2" fill="#d2d2d2" /><rect x="93.1" y="160.0" width="1" height="1.4" fill="#8a8a8a" /><rect x="93.1" y="159.9" width="1" height="1.2" fill="#d2d2d2" /><rect x="11.6" y="164.95" width="89.8" height="16.1" fill="#5c5c5c" /><rect x="11.6" y="164.95" width="89.8" height="1" fill="#808080" /><rect x="18.6" y="166.55" width="76" height="13.1" fill="#222" /><rect x="19.6" y="167.35" width="17.4" height="3.4" fill="#3a3a3a" /><rect x="20.2" y="167.75" width="3" height="2.6" fill="#0c0c0c" /><rect x="25.6" y="168.25" width="10" height="1.5" fill="#b2b2b2" /><rect x="38.4" y="167.35" width="17.4" height="3.4" fill="#3a3a3a" /><rect x="39.0" y="167.75" width="3" height="2.6" fill="#0c0c0c" /><rect x="44.4" y="168.25" width="10" height="1.5" fill="#b2b2b2" /><rect x="57.2" y="167.35" width="17.4" height="3.4" fill="#3a3a3a" /><rect x="57.8" y="167.75" width="3" height="2.6" fill="#0c0c0c" /><rect x="63.2" y="168.25" width="10" height="1.5" fill="#b2b2b2" /><rect x="76.0" y="167.35" width="17.4" height="3.4" fill="#3a3a3a" /><rect x="76.6" y="167.75" width="3" height="2.6" fill="#0c0c0c" /><rect x="82.0" y="168.25" width="10" height="1.5" fill="#b2b2b2" /><rect x="19.6" y="171.7" width="17.4" height="3.4" fill="#3a3a3a" /><rect x="20.2" y="172.1" width="3" height="2.6" fill="#0c0c0c" /><rect x="25.6" y="172.6" width="10" height="1.5" fill="#b2b2b2" /><rect x="38.4" y="171.7" width="17.4" height="3.4" fill="#3a3a3a" /><rect x="39.0" y="172.1" width="3" height="2.6" fill="#0c0c0c" /><rect x="44.4" y="172.6" width="10" height="1.5" fill="#b2b2b2" /><rect x="57.2" y="171.7" width="17.4" height="3.4" fill="#3a3a3a" /><rect x="57.8" y="172.1" width="3" height="2.6" fill="#0c0c0c" /><rect x="63.2" y="172.6" width="10" height="1.5" fill="#b2b2b2" /><rect x="76.0" y="171.7" width="17.4" height="3.4" fill="#3a3a3a" /><rect x="76.6" y="172.1" width="3" height="2.6" fill="#0c0c0c" /><rect x="82.0" y="172.6" width="10" height="1.5" fill="#b2b2b2" /><rect x="19.6" y="176.05" width="17.4" height="3.4" fill="#3a3a3a" /><rect x="20.2" y="176.45" width="3" height="2.6" fill="#0c0c0c" /><rect x="25.6" y="176.95" width="10" height="1.5" fill="#b2b2b2" /><rect x="38.4" y="176.05" width="17.4" height="3.4" fill="#3a3a3a" /><rect x="39.0" y="176.45" width="3" height="2.6" fill="#0c0c0c" /><rect x="44.4" y="176.95" width="10" height="1.5" fill="#b2b2b2" /><rect x="57.2" y="176.05" width="17.4" height="3.4" fill="#3a3a3a" /><rect x="57.8" y="176.45" width="3" height="2.6" fill="#0c0c0c" /><rect x="63.2" y="176.95" width="10" height="1.5" fill="#b2b2b2" /><rect x="76.0" y="176.05" width="17.4" height="3.4" fill="#3a3a3a" /><rect x="76.6" y="176.45" width="3" height="2.6" fill="#0c0c0c" /><rect x="82.0" y="176.95" width="10" height="1.5" fill="#b2b2b2" /><rect x="11.6" y="181.45" width="89.8" height="24.35" fill="#626262" /><rect x="11.6" y="181.45" width="89.8" height="0.9" fill="#868686" /><rect x="11.6" y="204.8" width="89.8" height="1" fill="#404040" /><path d="M45.6 182.45h14l-6 4.6h-14z" fill="#8a8a8a" opacity=".5"/><rect x="18.9" y="184.35" width="1.9" height="1.8" fill="#0c0c0c" /><rect x="27.1" y="184.25" width="22.5" height="2.1" fill="#7c7c7c" rx="1" stroke="#4e4e4e" stroke-width=".45"/><rect x="62.6" y="184.25" width="29" height="2.1" fill="#7c7c7c" rx="1" stroke="#4e4e4e" stroke-width=".45"/><rect x="18.2" y="187.85" width="76.6" height="16.75" fill="#2c2c2c" /><rect x="18.6" y="188.55" width="14" height="2.79" fill="#b2b2b2" rx=".7"/><rect x="19.0" y="188.65" width="13.2" height="0.9" fill="#d8d8d8" /><rect x="19.4" y="190.38" width="12.2" height="0.7" fill="#808080" /><rect x="19.0" y="190.54" width="13.2" height="0.7" fill="#7a7a7a" /><rect x="18.6" y="192.54" width="14" height="2.79" fill="#b2b2b2" rx=".7"/><rect x="19.0" y="192.64" width="13.2" height="0.9" fill="#d8d8d8" /><rect x="19.4" y="194.37" width="12.2" height="0.7" fill="#808080" /><rect x="19.0" y="194.53" width="13.2" height="0.7" fill="#7a7a7a" /><rect x="18.6" y="196.53" width="14" height="2.79" fill="#b2b2b2" rx=".7"/><rect x="19.0" y="196.62" width="13.2" height="0.9" fill="#d8d8d8" /><rect x="19.4" y="198.36" width="12.2" height="0.7" fill="#808080" /><rect x="19.0" y="198.51" width="13.2" height="0.7" fill="#7a7a7a" /><rect x="18.6" y="200.51" width="14" height="2.79" fill="#b2b2b2" rx=".7"/><rect x="19.0" y="200.61" width="13.2" height="0.9" fill="#d8d8d8" /><rect x="19.4" y="202.35" width="12.2" height="0.7" fill="#808080" /><rect x="19.0" y="202.5" width="13.2" height="0.7" fill="#7a7a7a" /><rect x="33.0" y="188.25" width="1.3" height="15.95" fill="#101010" /><rect x="34.8" y="188.25" width="1.5" height="15.95" fill="#6e6e6e" /><rect x="37.35" y="188.55" width="14" height="2.79" fill="#b2b2b2" rx=".7"/><rect x="37.75" y="188.65" width="13.2" height="0.9" fill="#d8d8d8" /><rect x="38.15" y="190.38" width="12.2" height="0.7" fill="#808080" /><rect x="37.75" y="190.54" width="13.2" height="0.7" fill="#7a7a7a" /><rect x="37.35" y="192.54" width="14" height="2.79" fill="#b2b2b2" rx=".7"/><rect x="37.75" y="192.64" width="13.2" height="0.9" fill="#d8d8d8" /><rect x="38.15" y="194.37" width="12.2" height="0.7" fill="#808080" /><rect x="37.75" y="194.53" width="13.2" height="0.7" fill="#7a7a7a" /><rect x="37.35" y="196.53" width="14" height="2.79" fill="#b2b2b2" rx=".7"/><rect x="37.75" y="196.62" width="13.2" height="0.9" fill="#d8d8d8" /><rect x="38.15" y="198.36" width="12.2" height="0.7" fill="#808080" /><rect x="37.75" y="198.51" width="13.2" height="0.7" fill="#7a7a7a" /><rect x="37.35" y="200.51" width="14" height="2.79" fill="#b2b2b2" rx=".7"/><rect x="37.75" y="200.61" width="13.2" height="0.9" fill="#d8d8d8" /><rect x="38.15" y="202.35" width="12.2" height="0.7" fill="#808080" /><rect x="37.75" y="202.5" width="13.2" height="0.7" fill="#7a7a7a" /><rect x="51.75" y="188.25" width="1.3" height="15.95" fill="#101010" /><rect x="53.55" y="188.25" width="1.5" height="15.95" fill="#6e6e6e" /><rect x="56.1" y="188.55" width="14" height="2.79" fill="#b2b2b2" rx=".7"/><rect x="56.5" y="188.65" width="13.2" height="0.9" fill="#d8d8d8" /><rect x="56.9" y="190.38" width="12.2" height="0.7" fill="#808080" /><rect x="56.5" y="190.54" width="13.2" height="0.7" fill="#7a7a7a" /><rect x="56.1" y="192.54" width="14" height="2.79" fill="#b2b2b2" rx=".7"/><rect x="56.5" y="192.64" width="13.2" height="0.9" fill="#d8d8d8" /><rect x="56.9" y="194.37" width="12.2" height="0.7" fill="#808080" /><rect x="56.5" y="194.53" width="13.2" height="0.7" fill="#7a7a7a" /><rect x="56.1" y="196.53" width="14" height="2.79" fill="#b2b2b2" rx=".7"/><rect x="56.5" y="196.62" width="13.2" height="0.9" fill="#d8d8d8" /><rect x="56.9" y="198.36" width="12.2" height="0.7" fill="#808080" /><rect x="56.5" y="198.51" width="13.2" height="0.7" fill="#7a7a7a" /><rect x="56.1" y="200.51" width="14" height="2.79" fill="#b2b2b2" rx=".7"/><rect x="56.5" y="200.61" width="13.2" height="0.9" fill="#d8d8d8" /><rect x="56.9" y="202.35" width="12.2" height="0.7" fill="#808080" /><rect x="56.5" y="202.5" width="13.2" height="0.7" fill="#7a7a7a" /><rect x="70.5" y="188.25" width="1.3" height="15.95" fill="#101010" /><rect x="72.3" y="188.25" width="1.5" height="15.95" fill="#6e6e6e" /><rect x="74.85" y="188.55" width="14" height="2.79" fill="#b2b2b2" rx=".7"/><rect x="75.25" y="188.65" width="13.2" height="0.9" fill="#d8d8d8" /><rect x="75.65" y="190.38" width="12.2" height="0.7" fill="#808080" /><rect x="75.25" y="190.54" width="13.2" height="0.7" fill="#7a7a7a" /><rect x="74.85" y="192.54" width="14" height="2.79" fill="#b2b2b2" rx=".7"/><rect x="75.25" y="192.64" width="13.2" height="0.9" fill="#d8d8d8" /><rect x="75.65" y="194.37" width="12.2" height="0.7" fill="#808080" /><rect x="75.25" y="194.53" width="13.2" height="0.7" fill="#7a7a7a" /><rect x="74.85" y="196.53" width="14" height="2.79" fill="#b2b2b2" rx=".7"/><rect x="75.25" y="196.62" width="13.2" height="0.9" fill="#d8d8d8" /><rect x="75.65" y="198.36" width="12.2" height="0.7" fill="#808080" /><rect x="75.25" y="198.51" width="13.2" height="0.7" fill="#7a7a7a" /><rect x="74.85" y="200.51" width="14" height="2.79" fill="#b2b2b2" rx=".7"/><rect x="75.25" y="200.61" width="13.2" height="0.9" fill="#d8d8d8" /><rect x="75.65" y="202.35" width="12.2" height="0.7" fill="#808080" /><rect x="75.25" y="202.5" width="13.2" height="0.7" fill="#7a7a7a" /><rect x="89.25" y="188.25" width="1.3" height="15.95" fill="#101010" /><rect x="91.05" y="188.25" width="1.5" height="15.95" fill="#6e6e6e" /><path d="M12.2 189.34l1.6-1.4" stroke="#f0f0f0" stroke-width=".8"/><path d="M99.2 189.34l1.6-1.4" stroke="#f0f0f0" stroke-width=".8"/><path d="M12.2 201.71l1.6-1.4" stroke="#f0f0f0" stroke-width=".8"/><path d="M99.2 201.71l1.6-1.4" stroke="#f0f0f0" stroke-width=".8"/><rect x="11.6" y="206.2" width="89.8" height="24.35" fill="#626262" /><rect x="11.6" y="206.2" width="89.8" height="0.9" fill="#868686" /><rect x="11.6" y="229.55" width="89.8" height="1" fill="#404040" /><path d="M45.6 207.2h14l-6 4.6h-14z" fill="#8a8a8a" opacity=".5"/><rect x="18.9" y="209.1" width="1.9" height="1.8" fill="#0c0c0c" /><rect x="27.1" y="209.0" width="22.5" height="2.1" fill="#7c7c7c" rx="1" stroke="#4e4e4e" stroke-width=".45"/><rect x="62.6" y="209.0" width="29" height="2.1" fill="#7c7c7c" rx="1" stroke="#4e4e4e" stroke-width=".45"/><rect x="18.2" y="212.6" width="76.6" height="16.75" fill="#2c2c2c" /><rect x="18.6" y="213.3" width="14" height="2.79" fill="#b2b2b2" rx=".7"/><rect x="19.0" y="213.4" width="13.2" height="0.9" fill="#d8d8d8" /><rect x="19.4" y="215.13" width="12.2" height="0.7" fill="#808080" /><rect x="19.0" y="215.29" width="13.2" height="0.7" fill="#7a7a7a" /><rect x="18.6" y="217.29" width="14" height="2.79" fill="#b2b2b2" rx=".7"/><rect x="19.0" y="217.39" width="13.2" height="0.9" fill="#d8d8d8" /><rect x="19.4" y="219.12" width="12.2" height="0.7" fill="#808080" /><rect x="19.0" y="219.28" width="13.2" height="0.7" fill="#7a7a7a" /><rect x="18.6" y="221.28" width="14" height="2.79" fill="#b2b2b2" rx=".7"/><rect x="19.0" y="221.38" width="13.2" height="0.9" fill="#d8d8d8" /><rect x="19.4" y="223.11" width="12.2" height="0.7" fill="#808080" /><rect x="19.0" y="223.26" width="13.2" height="0.7" fill="#7a7a7a" /><rect x="18.6" y="225.26" width="14" height="2.79" fill="#b2b2b2" rx=".7"/><rect x="19.0" y="225.36" width="13.2" height="0.9" fill="#d8d8d8" /><rect x="19.4" y="227.1" width="12.2" height="0.7" fill="#808080" /><rect x="19.0" y="227.25" width="13.2" height="0.7" fill="#7a7a7a" /><rect x="33.0" y="213.0" width="1.3" height="15.95" fill="#101010" /><rect x="34.8" y="213.0" width="1.5" height="15.95" fill="#6e6e6e" /><rect x="37.35" y="213.3" width="14" height="2.79" fill="#b2b2b2" rx=".7"/><rect x="37.75" y="213.4" width="13.2" height="0.9" fill="#d8d8d8" /><rect x="38.15" y="215.13" width="12.2" height="0.7" fill="#808080" /><rect x="37.75" y="215.29" width="13.2" height="0.7" fill="#7a7a7a" /><rect x="37.35" y="217.29" width="14" height="2.79" fill="#b2b2b2" rx=".7"/><rect x="37.75" y="217.39" width="13.2" height="0.9" fill="#d8d8d8" /><rect x="38.15" y="219.12" width="12.2" height="0.7" fill="#808080" /><rect x="37.75" y="219.28" width="13.2" height="0.7" fill="#7a7a7a" /><rect x="37.35" y="221.28" width="14" height="2.79" fill="#b2b2b2" rx=".7"/><rect x="37.75" y="221.38" width="13.2" height="0.9" fill="#d8d8d8" /><rect x="38.15" y="223.11" width="12.2" height="0.7" fill="#808080" /><rect x="37.75" y="223.26" width="13.2" height="0.7" fill="#7a7a7a" /><rect x="37.35" y="225.26" width="14" height="2.79" fill="#b2b2b2" rx=".7"/><rect x="37.75" y="225.36" width="13.2" height="0.9" fill="#d8d8d8" /><rect x="38.15" y="227.1" width="12.2" height="0.7" fill="#808080" /><rect x="37.75" y="227.25" width="13.2" height="0.7" fill="#7a7a7a" /><rect x="51.75" y="213.0" width="1.3" height="15.95" fill="#101010" /><rect x="53.55" y="213.0" width="1.5" height="15.95" fill="#6e6e6e" /><rect x="56.1" y="213.3" width="14" height="2.79" fill="#b2b2b2" rx=".7"/><rect x="56.5" y="213.4" width="13.2" height="0.9" fill="#d8d8d8" /><rect x="56.9" y="215.13" width="12.2" height="0.7" fill="#808080" /><rect x="56.5" y="215.29" width="13.2" height="0.7" fill="#7a7a7a" /><rect x="56.1" y="217.29" width="14" height="2.79" fill="#b2b2b2" rx=".7"/><rect x="56.5" y="217.39" width="13.2" height="0.9" fill="#d8d8d8" /><rect x="56.9" y="219.12" width="12.2" height="0.7" fill="#808080" /><rect x="56.5" y="219.28" width="13.2" height="0.7" fill="#7a7a7a" /><rect x="56.1" y="221.28" width="14" height="2.79" fill="#b2b2b2" rx=".7"/><rect x="56.5" y="221.38" width="13.2" height="0.9" fill="#d8d8d8" /><rect x="56.9" y="223.11" width="12.2" height="0.7" fill="#808080" /><rect x="56.5" y="223.26" width="13.2" height="0.7" fill="#7a7a7a" /><rect x="56.1" y="225.26" width="14" height="2.79" fill="#b2b2b2" rx=".7"/><rect x="56.5" y="225.36" width="13.2" height="0.9" fill="#d8d8d8" /><rect x="56.9" y="227.1" width="12.2" height="0.7" fill="#808080" /><rect x="56.5" y="227.25" width="13.2" height="0.7" fill="#7a7a7a" /><rect x="70.5" y="213.0" width="1.3" height="15.95" fill="#101010" /><rect x="72.3" y="213.0" width="1.5" height="15.95" fill="#6e6e6e" /><rect x="74.85" y="213.3" width="14" height="2.79" fill="#b2b2b2" rx=".7"/><rect x="75.25" y="213.4" width="13.2" height="0.9" fill="#d8d8d8" /><rect x="75.65" y="215.13" width="12.2" height="0.7" fill="#808080" /><rect x="75.25" y="215.29" width="13.2" height="0.7" fill="#7a7a7a" /><rect x="74.85" y="217.29" width="14" height="2.79" fill="#b2b2b2" rx=".7"/><rect x="75.25" y="217.39" width="13.2" height="0.9" fill="#d8d8d8" /><rect x="75.65" y="219.12" width="12.2" height="0.7" fill="#808080" /><rect x="75.25" y="219.28" width="13.2" height="0.7" fill="#7a7a7a" /><rect x="74.85" y="221.28" width="14" height="2.79" fill="#b2b2b2" rx=".7"/><rect x="75.25" y="221.38" width="13.2" height="0.9" fill="#d8d8d8" /><rect x="75.65" y="223.11" width="12.2" height="0.7" fill="#808080" /><rect x="75.25" y="223.26" width="13.2" height="0.7" fill="#7a7a7a" /><rect x="74.85" y="225.26" width="14" height="2.79" fill="#b2b2b2" rx=".7"/><rect x="75.25" y="225.36" width="13.2" height="0.9" fill="#d8d8d8" /><rect x="75.65" y="227.1" width="12.2" height="0.7" fill="#808080" /><rect x="75.25" y="227.25" width="13.2" height="0.7" fill="#7a7a7a" /><rect x="89.25" y="213.0" width="1.3" height="15.95" fill="#101010" /><rect x="91.05" y="213.0" width="1.5" height="15.95" fill="#6e6e6e" /><path d="M12.2 214.09l1.6-1.4" stroke="#f0f0f0" stroke-width=".8"/><path d="M99.2 214.09l1.6-1.4" stroke="#f0f0f0" stroke-width=".8"/><path d="M12.2 226.46l1.6-1.4" stroke="#f0f0f0" stroke-width=".8"/><path d="M99.2 226.46l1.6-1.4" stroke="#f0f0f0" stroke-width=".8"/><rect x="11.6" y="230.95" width="89.8" height="16.1" fill="#626262" /><rect x="11.6" y="230.95" width="89.8" height="0.9" fill="#868686" /><rect x="11.6" y="246.05" width="89.8" height="1" fill="#404040" /><path d="M45.6 231.95h14l-6 4.6h-14z" fill="#8a8a8a" opacity=".5"/><rect x="18.9" y="233.85" width="1.9" height="1.8" fill="#0c0c0c" /><rect x="27.1" y="233.75" width="22.5" height="2.1" fill="#7c7c7c" rx="1" stroke="#4e4e4e" stroke-width=".45"/><rect x="62.6" y="233.75" width="29" height="2.1" fill="#7c7c7c" rx="1" stroke="#4e4e4e" stroke-width=".45"/><rect x="18.2" y="237.35" width="76.6" height="8.5" fill="#2c2c2c" /><rect x="18.6" y="238.05" width="14" height="2.65" fill="#b2b2b2" rx=".7"/><rect x="19.0" y="238.15" width="13.2" height="0.9" fill="#d8d8d8" /><rect x="19.4" y="239.82" width="12.2" height="0.7" fill="#808080" /><rect x="19.0" y="239.9" width="13.2" height="0.7" fill="#7a7a7a" /><rect x="18.6" y="241.9" width="14" height="2.65" fill="#b2b2b2" rx=".7"/><rect x="19.0" y="242.0" width="13.2" height="0.9" fill="#d8d8d8" /><rect x="19.4" y="243.67" width="12.2" height="0.7" fill="#808080" /><rect x="19.0" y="243.75" width="13.2" height="0.7" fill="#7a7a7a" /><rect x="33.0" y="237.75" width="1.3" height="7.7" fill="#101010" /><rect x="34.8" y="237.75" width="1.5" height="7.7" fill="#6e6e6e" /><rect x="37.35" y="238.05" width="14" height="2.65" fill="#b2b2b2" rx=".7"/><rect x="37.75" y="238.15" width="13.2" height="0.9" fill="#d8d8d8" /><rect x="38.15" y="239.82" width="12.2" height="0.7" fill="#808080" /><rect x="37.75" y="239.9" width="13.2" height="0.7" fill="#7a7a7a" /><rect x="37.35" y="241.9" width="14" height="2.65" fill="#b2b2b2" rx=".7"/><rect x="37.75" y="242.0" width="13.2" height="0.9" fill="#d8d8d8" /><rect x="38.15" y="243.67" width="12.2" height="0.7" fill="#808080" /><rect x="37.75" y="243.75" width="13.2" height="0.7" fill="#7a7a7a" /><rect x="51.75" y="237.75" width="1.3" height="7.7" fill="#101010" /><rect x="53.55" y="237.75" width="1.5" height="7.7" fill="#6e6e6e" /><rect x="56.1" y="238.05" width="14" height="2.65" fill="#b2b2b2" rx=".7"/><rect x="56.5" y="238.15" width="13.2" height="0.9" fill="#d8d8d8" /><rect x="56.9" y="239.82" width="12.2" height="0.7" fill="#808080" /><rect x="56.5" y="239.9" width="13.2" height="0.7" fill="#7a7a7a" /><rect x="56.1" y="241.9" width="14" height="2.65" fill="#b2b2b2" rx=".7"/><rect x="56.5" y="242.0" width="13.2" height="0.9" fill="#d8d8d8" /><rect x="56.9" y="243.67" width="12.2" height="0.7" fill="#808080" /><rect x="56.5" y="243.75" width="13.2" height="0.7" fill="#7a7a7a" /><rect x="70.5" y="237.75" width="1.3" height="7.7" fill="#101010" /><rect x="72.3" y="237.75" width="1.5" height="7.7" fill="#6e6e6e" /><rect x="74.85" y="238.05" width="14" height="2.65" fill="#b2b2b2" rx=".7"/><rect x="75.25" y="238.15" width="13.2" height="0.9" fill="#d8d8d8" /><rect x="75.65" y="239.82" width="12.2" height="0.7" fill="#808080" /><rect x="75.25" y="239.9" width="13.2" height="0.7" fill="#7a7a7a" /><rect x="74.85" y="241.9" width="14" height="2.65" fill="#b2b2b2" rx=".7"/><rect x="75.25" y="242.0" width="13.2" height="0.9" fill="#d8d8d8" /><rect x="75.65" y="243.67" width="12.2" height="0.7" fill="#808080" /><rect x="75.25" y="243.75" width="13.2" height="0.7" fill="#7a7a7a" /><rect x="89.25" y="237.75" width="1.3" height="7.7" fill="#101010" /><rect x="91.05" y="237.75" width="1.5" height="7.7" fill="#6e6e6e" /><path d="M12.2 236.77l1.6-1.4" stroke="#f0f0f0" stroke-width=".8"/><path d="M99.2 236.77l1.6-1.4" stroke="#f0f0f0" stroke-width=".8"/><path d="M12.2 245.02l1.6-1.4" stroke="#f0f0f0" stroke-width=".8"/><path d="M99.2 245.02l1.6-1.4" stroke="#f0f0f0" stroke-width=".8"/><rect x="11.6" y="247.45" width="89.8" height="16.1" fill="#5c5c5c" /><rect x="11.6" y="247.45" width="89.8" height="1" fill="#808080" /><rect x="18.6" y="249.05" width="76" height="13.1" fill="#222" /><rect x="19.6" y="249.85" width="17.4" height="3.4" fill="#3a3a3a" /><rect x="20.2" y="250.25" width="3" height="2.6" fill="#0c0c0c" /><rect x="25.6" y="250.75" width="10" height="1.5" fill="#b2b2b2" /><rect x="38.4" y="249.85" width="17.4" height="3.4" fill="#3a3a3a" /><rect x="39.0" y="250.25" width="3" height="2.6" fill="#0c0c0c" /><rect x="44.4" y="250.75" width="10" height="1.5" fill="#b2b2b2" /><rect x="57.2" y="249.85" width="17.4" height="3.4" fill="#3a3a3a" /><rect x="57.8" y="250.25" width="3" height="2.6" fill="#0c0c0c" /><rect x="63.2" y="250.75" width="10" height="1.5" fill="#b2b2b2" /><rect x="76.0" y="249.85" width="17.4" height="3.4" fill="#3a3a3a" /><rect x="76.6" y="250.25" width="3" height="2.6" fill="#0c0c0c" /><rect x="82.0" y="250.75" width="10" height="1.5" fill="#b2b2b2" /><rect x="19.6" y="254.2" width="17.4" height="3.4" fill="#3a3a3a" /><rect x="20.2" y="254.6" width="3" height="2.6" fill="#0c0c0c" /><rect x="25.6" y="255.1" width="10" height="1.5" fill="#b2b2b2" /><rect x="38.4" y="254.2" width="17.4" height="3.4" fill="#3a3a3a" /><rect x="39.0" y="254.6" width="3" height="2.6" fill="#0c0c0c" /><rect x="44.4" y="255.1" width="10" height="1.5" fill="#b2b2b2" /><rect x="57.2" y="254.2" width="17.4" height="3.4" fill="#3a3a3a" /><rect x="57.8" y="254.6" width="3" height="2.6" fill="#0c0c0c" /><rect x="63.2" y="255.1" width="10" height="1.5" fill="#b2b2b2" /><rect x="76.0" y="254.2" width="17.4" height="3.4" fill="#3a3a3a" /><rect x="76.6" y="254.6" width="3" height="2.6" fill="#0c0c0c" /><rect x="82.0" y="255.1" width="10" height="1.5" fill="#b2b2b2" /><rect x="19.6" y="258.55" width="17.4" height="3.4" fill="#3a3a3a" /><rect x="20.2" y="258.95" width="3" height="2.6" fill="#0c0c0c" /><rect x="25.6" y="259.45" width="10" height="1.5" fill="#b2b2b2" /><rect x="38.4" y="258.55" width="17.4" height="3.4" fill="#3a3a3a" /><rect x="39.0" y="258.95" width="3" height="2.6" fill="#0c0c0c" /><rect x="44.4" y="259.45" width="10" height="1.5" fill="#b2b2b2" /><rect x="57.2" y="258.55" width="17.4" height="3.4" fill="#3a3a3a" /><rect x="57.8" y="258.95" width="3" height="2.6" fill="#0c0c0c" /><rect x="63.2" y="259.45" width="10" height="1.5" fill="#b2b2b2" /><rect x="76.0" y="258.55" width="17.4" height="3.4" fill="#3a3a3a" /><rect x="76.6" y="258.95" width="3" height="2.6" fill="#0c0c0c" /><rect x="82.0" y="259.45" width="10" height="1.5" fill="#b2b2b2" /><rect x="11.6" y="263.95" width="89.8" height="24.35" fill="#3a3a3a" /><rect x="11.6" y="263.95" width="89.8" height="0.8" fill="#7a7a7a" /><rect x="15.6" y="265.75" width="18.6" height="4.3" fill="#cecece" rx="1.2"/><rect x="16.8" y="266.65" width="10.4" height="2.5" fill="#7a7a7a" rx="1.2"/><rect x="18.2" y="267.45" width="7.6" height="0.9" fill="#bdbdbd" rx=".4"/><rect x="27.8" y="266.45" width="3" height="2.9" fill="#3c3c3c" /><circle cx="32.0" cy="267.9" r="1.1" fill="#777"/><rect x="36.0" y="265.75" width="18.6" height="4.3" fill="#cecece" rx="1.2"/><rect x="37.2" y="266.65" width="10.4" height="2.5" fill="#7a7a7a" rx="1.2"/><rect x="38.6" y="267.45" width="7.6" height="0.9" fill="#bdbdbd" rx=".4"/><rect x="48.2" y="266.45" width="3" height="2.9" fill="#3c3c3c" /><circle cx="52.4" cy="267.9" r="1.1" fill="#777"/><rect x="56.4" y="265.75" width="18.6" height="4.3" fill="#cecece" rx="1.2"/><rect x="57.6" y="266.65" width="10.4" height="2.5" fill="#7a7a7a" rx="1.2"/><rect x="59.0" y="267.45" width="7.6" height="0.9" fill="#bdbdbd" rx=".4"/><rect x="68.6" y="266.45" width="3" height="2.9" fill="#3c3c3c" /><circle cx="72.8" cy="267.9" r="1.1" fill="#777"/><rect x="15.6" y="271.3" width="18.6" height="4.3" fill="#cecece" rx="1.2"/><rect x="16.8" y="272.2" width="10.4" height="2.5" fill="#7a7a7a" rx="1.2"/><rect x="18.2" y="273.0" width="7.6" height="0.9" fill="#bdbdbd" rx=".4"/><rect x="27.8" y="272.0" width="3" height="2.9" fill="#3c3c3c" /><circle cx="32.0" cy="273.45" r="1.1" fill="#777"/><rect x="36.0" y="271.3" width="18.6" height="4.3" fill="#cecece" rx="1.2"/><rect x="37.2" y="272.2" width="10.4" height="2.5" fill="#7a7a7a" rx="1.2"/><rect x="38.6" y="273.0" width="7.6" height="0.9" fill="#bdbdbd" rx=".4"/><rect x="48.2" y="272.0" width="3" height="2.9" fill="#3c3c3c" /><circle cx="52.4" cy="273.45" r="1.1" fill="#777"/><rect x="56.4" y="271.3" width="18.6" height="4.3" fill="#cecece" rx="1.2"/><rect x="57.6" y="272.2" width="10.4" height="2.5" fill="#7a7a7a" rx="1.2"/><rect x="59.0" y="273.0" width="7.6" height="0.9" fill="#bdbdbd" rx=".4"/><rect x="68.6" y="272.0" width="3" height="2.9" fill="#3c3c3c" /><circle cx="72.8" cy="273.45" r="1.1" fill="#777"/><rect x="76.8" y="271.3" width="18.6" height="4.3" fill="#cecece" rx="1.2"/><rect x="78.0" y="272.2" width="10.4" height="2.5" fill="#7a7a7a" rx="1.2"/><rect x="79.4" y="273.0" width="7.6" height="0.9" fill="#bdbdbd" rx=".4"/><rect x="89.0" y="272.0" width="3" height="2.9" fill="#3c3c3c" /><circle cx="93.2" cy="273.45" r="1.1" fill="#777"/><rect x="15.6" y="276.85" width="18.6" height="4.3" fill="#cecece" rx="1.2"/><rect x="16.8" y="277.75" width="10.4" height="2.5" fill="#7a7a7a" rx="1.2"/><rect x="18.2" y="278.55" width="7.6" height="0.9" fill="#bdbdbd" rx=".4"/><rect x="27.8" y="277.55" width="3" height="2.9" fill="#3c3c3c" /><circle cx="32.0" cy="279.0" r="1.1" fill="#777"/><rect x="36.0" y="276.85" width="18.6" height="4.3" fill="#cecece" rx="1.2"/><rect x="37.2" y="277.75" width="10.4" height="2.5" fill="#7a7a7a" rx="1.2"/><rect x="38.6" y="278.55" width="7.6" height="0.9" fill="#bdbdbd" rx=".4"/><rect x="48.2" y="277.55" width="3" height="2.9" fill="#3c3c3c" /><circle cx="52.4" cy="279.0" r="1.1" fill="#777"/><rect x="56.4" y="276.85" width="18.6" height="4.3" fill="#cecece" rx="1.2"/><rect x="57.6" y="277.75" width="10.4" height="2.5" fill="#7a7a7a" rx="1.2"/><rect x="59.0" y="278.55" width="7.6" height="0.9" fill="#bdbdbd" rx=".4"/><rect x="68.6" y="277.55" width="3" height="2.9" fill="#3c3c3c" /><circle cx="72.8" cy="279.0" r="1.1" fill="#777"/><rect x="76.8" y="276.85" width="18.6" height="4.3" fill="#cecece" rx="1.2"/><rect x="78.0" y="277.75" width="10.4" height="2.5" fill="#7a7a7a" rx="1.2"/><rect x="79.4" y="278.55" width="7.6" height="0.9" fill="#bdbdbd" rx=".4"/><rect x="89.0" y="277.55" width="3" height="2.9" fill="#3c3c3c" /><circle cx="93.2" cy="279.0" r="1.1" fill="#777"/><rect x="15.6" y="282.4" width="18.6" height="4.3" fill="#cecece" rx="1.2"/><rect x="16.8" y="283.3" width="10.4" height="2.5" fill="#7a7a7a" rx="1.2"/><rect x="18.2" y="284.1" width="7.6" height="0.9" fill="#bdbdbd" rx=".4"/><rect x="27.8" y="283.1" width="3" height="2.9" fill="#3c3c3c" /><circle cx="32.0" cy="284.55" r="1.1" fill="#777"/><rect x="36.0" y="282.4" width="18.6" height="4.3" fill="#cecece" rx="1.2"/><rect x="37.2" y="283.3" width="10.4" height="2.5" fill="#7a7a7a" rx="1.2"/><rect x="38.6" y="284.1" width="7.6" height="0.9" fill="#bdbdbd" rx=".4"/><rect x="48.2" y="283.1" width="3" height="2.9" fill="#3c3c3c" /><circle cx="52.4" cy="284.55" r="1.1" fill="#777"/><rect x="56.4" y="282.4" width="18.6" height="4.3" fill="#cecece" rx="1.2"/><rect x="57.6" y="283.3" width="10.4" height="2.5" fill="#7a7a7a" rx="1.2"/><rect x="59.0" y="284.1" width="7.6" height="0.9" fill="#bdbdbd" rx=".4"/><rect x="68.6" y="283.1" width="3" height="2.9" fill="#3c3c3c" /><circle cx="72.8" cy="284.55" r="1.1" fill="#777"/><rect x="76.8" y="282.4" width="18.6" height="4.3" fill="#cecece" rx="1.2"/><rect x="78.0" y="283.3" width="10.4" height="2.5" fill="#7a7a7a" rx="1.2"/><rect x="79.4" y="284.1" width="7.6" height="0.9" fill="#bdbdbd" rx=".4"/><rect x="89.0" y="283.1" width="3" height="2.9" fill="#3c3c3c" /><circle cx="93.2" cy="284.55" r="1.1" fill="#777"/><rect x="76.8" y="265.75" width="3" height="4.3" fill="#e4e4e4" rx="1"/><rect x="80.4" y="264.95" width="16" height="7.4" fill="#2a2a2a" stroke="#666" stroke-width=".4"/><rect x="81.8" y="266.05" width="12.5" height="2.8" fill="#3ab6f2" /><rect x="82.3" y="270.05" width="1.8" height="1" fill="#aaa" /><rect x="85.3" y="270.05" width="1.8" height="1" fill="#aaa" /><rect x="88.3" y="270.05" width="1.8" height="1" fill="#aaa" /><rect x="91.3" y="270.05" width="1.8" height="1" fill="#aaa" /><rect x="11.6" y="288.7" width="89.8" height="16.1" fill="#626262" /><rect x="11.6" y="288.7" width="89.8" height="0.9" fill="#868686" /><rect x="11.6" y="303.8" width="89.8" height="1" fill="#404040" /><path d="M45.6 289.7h14l-6 4.6h-14z" fill="#8a8a8a" opacity=".5"/><rect x="18.9" y="291.6" width="1.9" height="1.8" fill="#0c0c0c" /><rect x="27.1" y="291.5" width="22.5" height="2.1" fill="#7c7c7c" rx="1" stroke="#4e4e4e" stroke-width=".45"/><rect x="62.6" y="291.5" width="29" height="2.1" fill="#7c7c7c" rx="1" stroke="#4e4e4e" stroke-width=".45"/><rect x="18.2" y="295.1" width="76.6" height="8.5" fill="#2c2c2c" /><rect x="18.6" y="295.8" width="14" height="2.65" fill="#b2b2b2" rx=".7"/><rect x="19.0" y="295.9" width="13.2" height="0.9" fill="#d8d8d8" /><rect x="19.4" y="297.57" width="12.2" height="0.7" fill="#808080" /><rect x="19.0" y="297.65" width="13.2" height="0.7" fill="#7a7a7a" /><rect x="18.6" y="299.65" width="14" height="2.65" fill="#b2b2b2" rx=".7"/><rect x="19.0" y="299.75" width="13.2" height="0.9" fill="#d8d8d8" /><rect x="19.4" y="301.42" width="12.2" height="0.7" fill="#808080" /><rect x="19.0" y="301.5" width="13.2" height="0.7" fill="#7a7a7a" /><rect x="33.0" y="295.5" width="1.3" height="7.7" fill="#101010" /><rect x="34.8" y="295.5" width="1.5" height="7.7" fill="#6e6e6e" /><rect x="37.35" y="295.8" width="14" height="2.65" fill="#b2b2b2" rx=".7"/><rect x="37.75" y="295.9" width="13.2" height="0.9" fill="#d8d8d8" /><rect x="38.15" y="297.57" width="12.2" height="0.7" fill="#808080" /><rect x="37.75" y="297.65" width="13.2" height="0.7" fill="#7a7a7a" /><rect x="37.35" y="299.65" width="14" height="2.65" fill="#b2b2b2" rx=".7"/><rect x="37.75" y="299.75" width="13.2" height="0.9" fill="#d8d8d8" /><rect x="38.15" y="301.42" width="12.2" height="0.7" fill="#808080" /><rect x="37.75" y="301.5" width="13.2" height="0.7" fill="#7a7a7a" /><rect x="51.75" y="295.5" width="1.3" height="7.7" fill="#101010" /><rect x="53.55" y="295.5" width="1.5" height="7.7" fill="#6e6e6e" /><rect x="56.1" y="295.8" width="14" height="2.65" fill="#b2b2b2" rx=".7"/><rect x="56.5" y="295.9" width="13.2" height="0.9" fill="#d8d8d8" /><rect x="56.9" y="297.57" width="12.2" height="0.7" fill="#808080" /><rect x="56.5" y="297.65" width="13.2" height="0.7" fill="#7a7a7a" /><rect x="56.1" y="299.65" width="14" height="2.65" fill="#b2b2b2" rx=".7"/><rect x="56.5" y="299.75" width="13.2" height="0.9" fill="#d8d8d8" /><rect x="56.9" y="301.42" width="12.2" height="0.7" fill="#808080" /><rect x="56.5" y="301.5" width="13.2" height="0.7" fill="#7a7a7a" /><rect x="70.5" y="295.5" width="1.3" height="7.7" fill="#101010" /><rect x="72.3" y="295.5" width="1.5" height="7.7" fill="#6e6e6e" /><rect x="74.85" y="295.8" width="14" height="2.65" fill="#b2b2b2" rx=".7"/><rect x="75.25" y="295.9" width="13.2" height="0.9" fill="#d8d8d8" /><rect x="75.65" y="297.57" width="12.2" height="0.7" fill="#808080" /><rect x="75.25" y="297.65" width="13.2" height="0.7" fill="#7a7a7a" /><rect x="74.85" y="299.65" width="14" height="2.65" fill="#b2b2b2" rx=".7"/><rect x="75.25" y="299.75" width="13.2" height="0.9" fill="#d8d8d8" /><rect x="75.65" y="301.42" width="12.2" height="0.7" fill="#808080" /><rect x="75.25" y="301.5" width="13.2" height="0.7" fill="#7a7a7a" /><rect x="89.25" y="295.5" width="1.3" height="7.7" fill="#101010" /><rect x="91.05" y="295.5" width="1.5" height="7.7" fill="#6e6e6e" /><path d="M12.2 294.52l1.6-1.4" stroke="#f0f0f0" stroke-width=".8"/><path d="M99.2 294.52l1.6-1.4" stroke="#f0f0f0" stroke-width=".8"/><path d="M12.2 302.77l1.6-1.4" stroke="#f0f0f0" stroke-width=".8"/><path d="M99.2 302.77l1.6-1.4" stroke="#f0f0f0" stroke-width=".8"/><rect x="11.6" y="305.2" width="89.8" height="24.35" fill="#626262" /><rect x="11.6" y="305.2" width="89.8" height="0.9" fill="#868686" /><rect x="11.6" y="328.55" width="89.8" height="1" fill="#404040" /><path d="M45.6 306.2h14l-6 4.6h-14z" fill="#8a8a8a" opacity=".5"/><rect x="18.9" y="308.1" width="1.9" height="1.8" fill="#0c0c0c" /><rect x="27.1" y="308.0" width="22.5" height="2.1" fill="#7c7c7c" rx="1" stroke="#4e4e4e" stroke-width=".45"/><rect x="62.6" y="308.0" width="29" height="2.1" fill="#7c7c7c" rx="1" stroke="#4e4e4e" stroke-width=".45"/><rect x="18.2" y="311.6" width="76.6" height="16.75" fill="#2c2c2c" /><rect x="18.6" y="312.3" width="14" height="2.79" fill="#b2b2b2" rx=".7"/><rect x="19.0" y="312.4" width="13.2" height="0.9" fill="#d8d8d8" /><rect x="19.4" y="314.13" width="12.2" height="0.7" fill="#808080" /><rect x="19.0" y="314.29" width="13.2" height="0.7" fill="#7a7a7a" /><rect x="18.6" y="316.29" width="14" height="2.79" fill="#b2b2b2" rx=".7"/><rect x="19.0" y="316.39" width="13.2" height="0.9" fill="#d8d8d8" /><rect x="19.4" y="318.12" width="12.2" height="0.7" fill="#808080" /><rect x="19.0" y="318.28" width="13.2" height="0.7" fill="#7a7a7a" /><rect x="18.6" y="320.28" width="14" height="2.79" fill="#b2b2b2" rx=".7"/><rect x="19.0" y="320.38" width="13.2" height="0.9" fill="#d8d8d8" /><rect x="19.4" y="322.11" width="12.2" height="0.7" fill="#808080" /><rect x="19.0" y="322.26" width="13.2" height="0.7" fill="#7a7a7a" /><rect x="18.6" y="324.26" width="14" height="2.79" fill="#b2b2b2" rx=".7"/><rect x="19.0" y="324.36" width="13.2" height="0.9" fill="#d8d8d8" /><rect x="19.4" y="326.1" width="12.2" height="0.7" fill="#808080" /><rect x="19.0" y="326.25" width="13.2" height="0.7" fill="#7a7a7a" /><rect x="33.0" y="312.0" width="1.3" height="15.95" fill="#101010" /><rect x="34.8" y="312.0" width="1.5" height="15.95" fill="#6e6e6e" /><rect x="37.35" y="312.3" width="14" height="2.79" fill="#b2b2b2" rx=".7"/><rect x="37.75" y="312.4" width="13.2" height="0.9" fill="#d8d8d8" /><rect x="38.15" y="314.13" width="12.2" height="0.7" fill="#808080" /><rect x="37.75" y="314.29" width="13.2" height="0.7" fill="#7a7a7a" /><rect x="37.35" y="316.29" width="14" height="2.79" fill="#b2b2b2" rx=".7"/><rect x="37.75" y="316.39" width="13.2" height="0.9" fill="#d8d8d8" /><rect x="38.15" y="318.12" width="12.2" height="0.7" fill="#808080" /><rect x="37.75" y="318.28" width="13.2" height="0.7" fill="#7a7a7a" /><rect x="37.35" y="320.28" width="14" height="2.79" fill="#b2b2b2" rx=".7"/><rect x="37.75" y="320.38" width="13.2" height="0.9" fill="#d8d8d8" /><rect x="38.15" y="322.11" width="12.2" height="0.7" fill="#808080" /><rect x="37.75" y="322.26" width="13.2" height="0.7" fill="#7a7a7a" /><rect x="37.35" y="324.26" width="14" height="2.79" fill="#b2b2b2" rx=".7"/><rect x="37.75" y="324.36" width="13.2" height="0.9" fill="#d8d8d8" /><rect x="38.15" y="326.1" width="12.2" height="0.7" fill="#808080" /><rect x="37.75" y="326.25" width="13.2" height="0.7" fill="#7a7a7a" /><rect x="51.75" y="312.0" width="1.3" height="15.95" fill="#101010" /><rect x="53.55" y="312.0" width="1.5" height="15.95" fill="#6e6e6e" /><rect x="56.1" y="312.3" width="14" height="2.79" fill="#b2b2b2" rx=".7"/><rect x="56.5" y="312.4" width="13.2" height="0.9" fill="#d8d8d8" /><rect x="56.9" y="314.13" width="12.2" height="0.7" fill="#808080" /><rect x="56.5" y="314.29" width="13.2" height="0.7" fill="#7a7a7a" /><rect x="56.1" y="316.29" width="14" height="2.79" fill="#b2b2b2" rx=".7"/><rect x="56.5" y="316.39" width="13.2" height="0.9" fill="#d8d8d8" /><rect x="56.9" y="318.12" width="12.2" height="0.7" fill="#808080" /><rect x="56.5" y="318.28" width="13.2" height="0.7" fill="#7a7a7a" /><rect x="56.1" y="320.28" width="14" height="2.79" fill="#b2b2b2" rx=".7"/><rect x="56.5" y="320.38" width="13.2" height="0.9" fill="#d8d8d8" /><rect x="56.9" y="322.11" width="12.2" height="0.7" fill="#808080" /><rect x="56.5" y="322.26" width="13.2" height="0.7" fill="#7a7a7a" /><rect x="56.1" y="324.26" width="14" height="2.79" fill="#b2b2b2" rx=".7"/><rect x="56.5" y="324.36" width="13.2" height="0.9" fill="#d8d8d8" /><rect x="56.9" y="326.1" width="12.2" height="0.7" fill="#808080" /><rect x="56.5" y="326.25" width="13.2" height="0.7" fill="#7a7a7a" /><rect x="70.5" y="312.0" width="1.3" height="15.95" fill="#101010" /><rect x="72.3" y="312.0" width="1.5" height="15.95" fill="#6e6e6e" /><rect x="74.85" y="312.3" width="14" height="2.79" fill="#b2b2b2" rx=".7"/><rect x="75.25" y="312.4" width="13.2" height="0.9" fill="#d8d8d8" /><rect x="75.65" y="314.13" width="12.2" height="0.7" fill="#808080" /><rect x="75.25" y="314.29" width="13.2" height="0.7" fill="#7a7a7a" /><rect x="74.85" y="316.29" width="14" height="2.79" fill="#b2b2b2" rx=".7"/><rect x="75.25" y="316.39" width="13.2" height="0.9" fill="#d8d8d8" /><rect x="75.65" y="318.12" width="12.2" height="0.7" fill="#808080" /><rect x="75.25" y="318.28" width="13.2" height="0.7" fill="#7a7a7a" /><rect x="74.85" y="320.28" width="14" height="2.79" fill="#b2b2b2" rx=".7"/><rect x="75.25" y="320.38" width="13.2" height="0.9" fill="#d8d8d8" /><rect x="75.65" y="322.11" width="12.2" height="0.7" fill="#808080" /><rect x="75.25" y="322.26" width="13.2" height="0.7" fill="#7a7a7a" /><rect x="74.85" y="324.26" width="14" height="2.79" fill="#b2b2b2" rx=".7"/><rect x="75.25" y="324.36" width="13.2" height="0.9" fill="#d8d8d8" /><rect x="75.65" y="326.1" width="12.2" height="0.7" fill="#808080" /><rect x="75.25" y="326.25" width="13.2" height="0.7" fill="#7a7a7a" /><rect x="89.25" y="312.0" width="1.3" height="15.95" fill="#101010" /><rect x="91.05" y="312.0" width="1.5" height="15.95" fill="#6e6e6e" /><path d="M12.2 313.09l1.6-1.4" stroke="#f0f0f0" stroke-width=".8"/><path d="M99.2 313.09l1.6-1.4" stroke="#f0f0f0" stroke-width=".8"/><path d="M12.2 325.46l1.6-1.4" stroke="#f0f0f0" stroke-width=".8"/><path d="M99.2 325.46l1.6-1.4" stroke="#f0f0f0" stroke-width=".8"/><defs><linearGradient id="ups" x1="0" y1="0" x2="1" y2="1"><stop offset="0" stop-color="#c8c8c8"/><stop offset=".5" stop-color="#aeaeae"/><stop offset="1" stop-color="#c6c6c6"/></linearGradient></defs><rect x="12.2" y="330.35" width="88.6" height="24.35" fill="#e6e6e6" stroke="#8a8a8a" stroke-width=".5"/><rect x="14.0" y="331.55" width="41.8" height="21.95" fill="url(#ups)" stroke="#959595" stroke-width=".5"/><rect x="57.0" y="331.55" width="42" height="21.95" fill="url(#ups)" stroke="#959595" stroke-width=".5"/></g></svg><div class="t" style="left:308px;top:114.89999999999999px;font-size:6.55px;color:#2c2c2c">2U Ethernet Switch/Hub</div>
<div class="t" style="left:308px;top:127.9px;font-size:6.55px;color:#2c2c2c">C2960 Switch</div>
<div class="t" style="left:308px;top:136.0px;font-size:6.55px;color:#2c2c2c">C2960 Switch</div>
<div class="t" style="left:308px;top:144.1px;font-size:6.55px;color:#2c2c2c">C2960 Switch</div>
<div class="t" style="left:308px;top:231.1px;font-size:6.55px;color:#2c2c2c">1U 19 LCD Monitor</div>
<div class="t" style="left:308px;top:239.2px;font-size:6.55px;color:#2c2c2c">Keyboard/KVM</div>
<div class="t" style="left:308px;top:251.2px;font-size:6.55px;color:#2c2c2c">1U Tray</div>
<div class="t" style="left:308px;top:259.90000000000003px;font-size:6.55px;color:#2c2c2c">1U Spacer</div>
<div class="t" style="left:308px;top:272.20000000000005px;font-size:6.55px;color:#2c2c2c">2U RAID Array</div>
<div class="t" style="left:308px;top:292.6px;font-size:6.55px;color:#2c2c2c">3U Server</div>
<div class="t" style="left:308px;top:317.6px;font-size:6.55px;color:#2c2c2c">3U Server</div>
<div class="t" style="left:308px;top:337.90000000000003px;font-size:6.55px;color:#2c2c2c">2U Server</div>
<div class="t" style="left:308px;top:354.6px;font-size:6.55px;color:#2c2c2c">2U RAID Array</div>
<div class="t" style="left:308px;top:375.6px;font-size:6.55px;color:#2c2c2c">3U Server</div>
<div class="t" style="left:308px;top:395.6px;font-size:6.55px;color:#2c2c2c">2U Server</div>
<div class="t" style="left:308px;top:416.6px;font-size:6.55px;color:#2c2c2c">3U Server</div>
<div class="t" style="left:308px;top:441.1px;font-size:6.55px;color:#2c2c2c">UPS</div>
<svg style="left:394.5px;top:101.3px" width="113" height="370" viewBox="0 0 113 370"><g id="rk2"><defs><linearGradient id="int2" x1="0" y1="0" x2="0" y2="1"><stop offset="0" stop-color="#505050"/><stop offset=".3" stop-color="#3e3e3e"/><stop offset=".55" stop-color="#1c1c1c"/><stop offset=".75" stop-color="#060606"/><stop offset="1" stop-color="#000"/></linearGradient><linearGradient id="base2" x1="0" y1="0" x2="0" y2="1"><stop offset="0" stop-color="#a6a6a6"/><stop offset=".5" stop-color="#808080"/><stop offset=".68" stop-color="#585858"/><stop offset="1" stop-color="#3c3c3c"/></linearGradient><linearGradient id="post2" x1="0" y1="0" x2="1" y2="0"><stop offset="0" stop-color="#8a8a8a"/><stop offset=".7" stop-color="#868686"/><stop offset="1" stop-color="#6e6e6e"/></linearGradient></defs><rect x="0" y="0" width="113" height="367" fill="#7e7e7e" stroke="#606060" stroke-width=".6"/><rect x="8.5" y="0.4" width="95.7" height="7.6" fill="#838383" /><rect x="8.5" y="7.2" width="95.7" height="0.8" fill="#6a6a6a" /><rect x="104.2" y="0.4" width="8.5" height="366" fill="url(#post2)" /><rect x="11.1" y="8.0" width="90.6" height="346.5" fill="url(#int2)" /><rect x="11.3" y="8.0" width="2.6" height="346.5" fill="#0a0a0a" /><path d="M12.600000000000001 8.9v346.5" stroke="#f6f6f6" stroke-width="1.3" stroke-dasharray="1.05 1.7"/><rect x="99.2" y="8.0" width="2.6" height="346.5" fill="#0a0a0a" /><path d="M100.5 8.9v346.5" stroke="#f6f6f6" stroke-width="1.3" stroke-dasharray="1.05 1.7"/><rect x="8.6" y="8.0" width="2.5" height="346.9" fill="#f3f3f3" /><path d="M9.85 8.0v346.5" stroke="#bdbdbd" stroke-width="2.5" stroke-dasharray=".6 7.65" opacity=".8"/><rect x="101.7" y="8.0" width="2.5" height="346.9" fill="#f3f3f3" /><path d="M102.95 8.0v346.5" stroke="#bdbdbd" stroke-width="2.5" stroke-dasharray=".6 7.65" opacity=".8"/><rect x="0.6" y="8.5" width="7.8" height="7.25" fill="#a0a0a0" /><rect x="1.6" y="10.8" width="4.8" height="2.3" fill="#efefef" opacity=".9"/><rect x="3.2" y="10.8" width="0.5" height="2.3" fill="#a0a0a0" /><rect x="4.9" y="10.8" width="0.4" height="1.6" fill="#a0a0a0" /><rect x="0.6" y="16.75" width="7.8" height="7.25" fill="#a0a0a0" /><rect x="1.6" y="19.05" width="4.8" height="2.3" fill="#efefef" opacity=".9"/><rect x="3.2" y="19.05" width="0.5" height="2.3" fill="#a0a0a0" /><rect x="4.9" y="19.05" width="0.4" height="1.6" fill="#a0a0a0" /><rect x="0.6" y="25.0" width="7.8" height="7.25" fill="#a0a0a0" /><rect x="1.6" y="27.3" width="4.8" height="2.3" fill="#efefef" opacity=".9"/><rect x="3.2" y="27.3" width="0.5" height="2.3" fill="#a0a0a0" /><rect x="4.9" y="27.3" width="0.4" height="1.6" fill="#a0a0a0" /><rect x="0.6" y="33.25" width="7.8" height="7.25" fill="#a0a0a0" /><rect x="1.6" y="35.55" width="4.8" height="2.3" fill="#efefef" opacity=".9"/><rect x="3.2" y="35.55" width="0.5" height="2.3" fill="#a0a0a0" /><rect x="4.9" y="35.55" width="0.4" height="1.6" fill="#a0a0a0" /><rect x="0.6" y="41.5" width="7.8" height="7.25" fill="#a0a0a0" /><rect x="1.6" y="43.8" width="4.8" height="2.3" fill="#efefef" opacity=".9"/><rect x="3.2" y="43.8" width="0.5" height="2.3" fill="#a0a0a0" /><rect x="4.9" y="43.8" width="0.4" height="1.6" fill="#a0a0a0" /><rect x="0.6" y="49.75" width="7.8" height="7.25" fill="#a0a0a0" /><rect x="1.6" y="52.05" width="4.8" height="2.3" fill="#efefef" opacity=".9"/><rect x="3.2" y="52.05" width="0.5" height="2.3" fill="#a0a0a0" /><rect x="4.9" y="52.05" width="0.4" height="1.6" fill="#a0a0a0" /><rect x="0.6" y="58.0" width="7.8" height="7.25" fill="#a0a0a0" /><rect x="1.6" y="60.3" width="4.8" height="2.3" fill="#efefef" opacity=".9"/><rect x="3.2" y="60.3" width="0.5" height="2.3" fill="#a0a0a0" /><rect x="4.9" y="60.3" width="0.4" height="1.6" fill="#a0a0a0" /><rect x="0.6" y="66.25" width="7.8" height="7.25" fill="#a0a0a0" /><rect x="1.6" y="68.55" width="4.8" height="2.3" fill="#efefef" opacity=".9"/><rect x="3.2" y="68.55" width="0.5" height="2.3" fill="#a0a0a0" /><rect x="4.9" y="68.55" width="0.4" height="1.6" fill="#a0a0a0" /><rect x="0.6" y="74.5" width="7.8" height="7.25" fill="#a0a0a0" /><rect x="1.6" y="76.8" width="4.8" height="2.3" fill="#efefef" opacity=".9"/><rect x="3.2" y="76.8" width="0.5" height="2.3" fill="#a0a0a0" /><rect x="4.9" y="76.8" width="0.4" height="1.6" fill="#a0a0a0" /><rect x="0.6" y="82.75" width="7.8" height="7.25" fill="#a0a0a0" /><rect x="1.6" y="85.05" width="4.8" height="2.3" fill="#efefef" opacity=".9"/><rect x="3.2" y="85.05" width="0.5" height="2.3" fill="#a0a0a0" /><rect x="4.9" y="85.05" width="0.4" height="1.6" fill="#a0a0a0" /><rect x="0.6" y="91.0" width="7.8" height="7.25" fill="#a0a0a0" /><rect x="1.6" y="93.3" width="4.8" height="2.3" fill="#efefef" opacity=".9"/><rect x="3.2" y="93.3" width="0.5" height="2.3" fill="#a0a0a0" /><rect x="4.9" y="93.3" width="0.4" height="1.6" fill="#a0a0a0" /><rect x="0.6" y="99.25" width="7.8" height="7.25" fill="#a0a0a0" /><rect x="1.6" y="101.55" width="4.8" height="2.3" fill="#efefef" opacity=".9"/><rect x="3.2" y="101.55" width="0.5" height="2.3" fill="#a0a0a0" /><rect x="4.9" y="101.55" width="0.4" height="1.6" fill="#a0a0a0" /><rect x="0.6" y="107.5" width="7.8" height="7.25" fill="#a0a0a0" /><rect x="1.6" y="109.8" width="4.8" height="2.3" fill="#efefef" opacity=".9"/><rect x="3.2" y="109.8" width="0.5" height="2.3" fill="#a0a0a0" /><rect x="4.9" y="109.8" width="0.4" height="1.6" fill="#a0a0a0" /><rect x="0.6" y="115.75" width="7.8" height="7.25" fill="#a0a0a0" /><rect x="1.6" y="118.05" width="4.8" height="2.3" fill="#efefef" opacity=".9"/><rect x="3.2" y="118.05" width="0.5" height="2.3" fill="#a0a0a0" /><rect x="4.9" y="118.05" width="0.4" height="1.6" fill="#a0a0a0" /><rect x="0.6" y="124.0" width="7.8" height="7.25" fill="#a0a0a0" /><rect x="1.6" y="126.3" width="4.8" height="2.3" fill="#efefef" opacity=".9"/><rect x="3.2" y="126.3" width="0.5" height="2.3" fill="#a0a0a0" /><rect x="4.9" y="126.3" width="0.4" height="1.6" fill="#a0a0a0" /><rect x="0.6" y="132.25" width="7.8" height="7.25" fill="#a0a0a0" /><rect x="1.6" y="134.55" width="4.8" height="2.3" fill="#efefef" opacity=".9"/><rect x="3.2" y="134.55" width="0.5" height="2.3" fill="#a0a0a0" /><rect x="4.9" y="134.55" width="0.4" height="1.6" fill="#a0a0a0" /><rect x="0.6" y="140.5" width="7.8" height="7.25" fill="#a0a0a0" /><rect x="1.6" y="142.8" width="4.8" height="2.3" fill="#efefef" opacity=".9"/><rect x="3.2" y="142.8" width="0.5" height="2.3" fill="#a0a0a0" /><rect x="4.9" y="142.8" width="0.4" height="1.6" fill="#a0a0a0" /><rect x="0.6" y="148.75" width="7.8" height="7.25" fill="#a0a0a0" /><rect x="1.6" y="151.05" width="4.8" height="2.3" fill="#efefef" opacity=".9"/><rect x="3.2" y="151.05" width="0.5" height="2.3" fill="#a0a0a0" /><rect x="4.9" y="151.05" width="0.4" height="1.6" fill="#a0a0a0" /><rect x="0.6" y="157.0" width="7.8" height="7.25" fill="#a0a0a0" /><rect x="1.6" y="159.3" width="4.8" height="2.3" fill="#efefef" opacity=".9"/><rect x="3.2" y="159.3" width="0.5" height="2.3" fill="#a0a0a0" /><rect x="4.9" y="159.3" width="0.4" height="1.6" fill="#a0a0a0" /><rect x="0.6" y="165.25" width="7.8" height="7.25" fill="#a0a0a0" /><rect x="1.6" y="167.55" width="4.8" height="2.3" fill="#efefef" opacity=".9"/><rect x="3.2" y="167.55" width="0.5" height="2.3" fill="#a0a0a0" /><rect x="4.9" y="167.55" width="0.4" height="1.6" fill="#a0a0a0" /><rect x="0.6" y="173.5" width="7.8" height="7.25" fill="#a0a0a0" /><rect x="1.6" y="175.8" width="4.8" height="2.3" fill="#efefef" opacity=".9"/><rect x="3.2" y="175.8" width="0.5" height="2.3" fill="#a0a0a0" /><rect x="4.9" y="175.8" width="0.4" height="1.6" fill="#a0a0a0" /><rect x="0.6" y="181.75" width="7.8" height="7.25" fill="#a0a0a0" /><rect x="1.6" y="184.05" width="4.8" height="2.3" fill="#efefef" opacity=".9"/><rect x="3.2" y="184.05" width="0.5" height="2.3" fill="#a0a0a0" /><rect x="4.9" y="184.05" width="0.4" height="1.6" fill="#a0a0a0" /><rect x="0.6" y="190.0" width="7.8" height="7.25" fill="#a0a0a0" /><rect x="1.6" y="192.3" width="4.8" height="2.3" fill="#efefef" opacity=".9"/><rect x="3.2" y="192.3" width="0.5" height="2.3" fill="#a0a0a0" /><rect x="4.9" y="192.3" width="0.4" height="1.6" fill="#a0a0a0" /><rect x="0.6" y="198.25" width="7.8" height="7.25" fill="#a0a0a0" /><rect x="1.6" y="200.55" width="4.8" height="2.3" fill="#efefef" opacity=".9"/><rect x="3.2" y="200.55" width="0.5" height="2.3" fill="#a0a0a0" /><rect x="4.9" y="200.55" width="0.4" height="1.6" fill="#a0a0a0" /><rect x="0.6" y="206.5" width="7.8" height="7.25" fill="#a0a0a0" /><rect x="1.6" y="208.8" width="4.8" height="2.3" fill="#efefef" opacity=".9"/><rect x="3.2" y="208.8" width="0.5" height="2.3" fill="#a0a0a0" /><rect x="4.9" y="208.8" width="0.4" height="1.6" fill="#a0a0a0" /><rect x="0.6" y="214.75" width="7.8" height="7.25" fill="#a0a0a0" /><rect x="1.6" y="217.05" width="4.8" height="2.3" fill="#efefef" opacity=".9"/><rect x="3.2" y="217.05" width="0.5" height="2.3" fill="#a0a0a0" /><rect x="4.9" y="217.05" width="0.4" height="1.6" fill="#a0a0a0" /><rect x="0.6" y="223.0" width="7.8" height="7.25" fill="#a0a0a0" /><rect x="1.6" y="225.3" width="4.8" height="2.3" fill="#efefef" opacity=".9"/><rect x="3.2" y="225.3" width="0.5" height="2.3" fill="#a0a0a0" /><rect x="4.9" y="225.3" width="0.4" height="1.6" fill="#a0a0a0" /><rect x="0.6" y="231.25" width="7.8" height="7.25" fill="#a0a0a0" /><rect x="1.6" y="233.55" width="4.8" height="2.3" fill="#efefef" opacity=".9"/><rect x="3.2" y="233.55" width="0.5" height="2.3" fill="#a0a0a0" /><rect x="4.9" y="233.55" width="0.4" height="1.6" fill="#a0a0a0" /><rect x="0.6" y="239.5" width="7.8" height="7.25" fill="#a0a0a0" /><rect x="1.6" y="241.8" width="4.8" height="2.3" fill="#efefef" opacity=".9"/><rect x="3.2" y="241.8" width="0.5" height="2.3" fill="#a0a0a0" /><rect x="4.9" y="241.8" width="0.4" height="1.6" fill="#a0a0a0" /><rect x="0.6" y="247.75" width="7.8" height="7.25" fill="#a0a0a0" /><rect x="1.6" y="250.05" width="4.8" height="2.3" fill="#efefef" opacity=".9"/><rect x="3.2" y="250.05" width="0.5" height="2.3" fill="#a0a0a0" /><rect x="4.9" y="250.05" width="0.4" height="1.6" fill="#a0a0a0" /><rect x="0.6" y="256.0" width="7.8" height="7.25" fill="#a0a0a0" /><rect x="1.6" y="258.3" width="4.8" height="2.3" fill="#efefef" opacity=".9"/><rect x="3.2" y="258.3" width="0.5" height="2.3" fill="#a0a0a0" /><rect x="4.9" y="258.3" width="0.4" height="1.6" fill="#a0a0a0" /><rect x="0.6" y="264.25" width="7.8" height="7.25" fill="#a0a0a0" /><rect x="1.6" y="266.55" width="4.8" height="2.3" fill="#efefef" opacity=".9"/><rect x="3.2" y="266.55" width="0.5" height="2.3" fill="#a0a0a0" /><rect x="4.9" y="266.55" width="0.4" height="1.6" fill="#a0a0a0" /><rect x="0.6" y="272.5" width="7.8" height="7.25" fill="#a0a0a0" /><rect x="1.6" y="274.8" width="4.8" height="2.3" fill="#efefef" opacity=".9"/><rect x="3.2" y="274.8" width="0.5" height="2.3" fill="#a0a0a0" /><rect x="4.9" y="274.8" width="0.4" height="1.6" fill="#a0a0a0" /><rect x="0.6" y="280.75" width="7.8" height="7.25" fill="#a0a0a0" /><rect x="1.6" y="283.05" width="4.8" height="2.3" fill="#efefef" opacity=".9"/><rect x="3.2" y="283.05" width="0.5" height="2.3" fill="#a0a0a0" /><rect x="4.9" y="283.05" width="0.4" height="1.6" fill="#a0a0a0" /><rect x="0.6" y="289.0" width="7.8" height="7.25" fill="#a0a0a0" /><rect x="1.6" y="291.3" width="4.8" height="2.3" fill="#efefef" opacity=".9"/><rect x="3.2" y="291.3" width="0.5" height="2.3" fill="#a0a0a0" /><rect x="4.9" y="291.3" width="0.4" height="1.6" fill="#a0a0a0" /><rect x="0.6" y="297.25" width="7.8" height="7.25" fill="#a0a0a0" /><rect x="1.6" y="299.55" width="4.8" height="2.3" fill="#efefef" opacity=".9"/><rect x="3.2" y="299.55" width="0.5" height="2.3" fill="#a0a0a0" /><rect x="4.9" y="299.55" width="0.4" height="1.6" fill="#a0a0a0" /><rect x="0.6" y="305.5" width="7.8" height="7.25" fill="#a0a0a0" /><rect x="1.6" y="307.8" width="4.8" height="2.3" fill="#efefef" opacity=".9"/><rect x="3.2" y="307.8" width="0.5" height="2.3" fill="#a0a0a0" /><rect x="4.9" y="307.8" width="0.4" height="1.6" fill="#a0a0a0" /><rect x="0.6" y="313.75" width="7.8" height="7.25" fill="#a0a0a0" /><rect x="1.6" y="316.05" width="4.8" height="2.3" fill="#efefef" opacity=".9"/><rect x="3.2" y="316.05" width="0.5" height="2.3" fill="#a0a0a0" /><rect x="4.9" y="316.05" width="0.4" height="1.6" fill="#a0a0a0" /><rect x="0.6" y="322.0" width="7.8" height="7.25" fill="#a0a0a0" /><rect x="1.6" y="324.3" width="4.8" height="2.3" fill="#efefef" opacity=".9"/><rect x="3.2" y="324.3" width="0.5" height="2.3" fill="#a0a0a0" /><rect x="4.9" y="324.3" width="0.4" height="1.6" fill="#a0a0a0" /><rect x="0.6" y="330.25" width="7.8" height="7.25" fill="#a0a0a0" /><rect x="1.6" y="332.55" width="4.8" height="2.3" fill="#efefef" opacity=".9"/><rect x="3.2" y="332.55" width="0.5" height="2.3" fill="#a0a0a0" /><rect x="4.9" y="332.55" width="0.4" height="1.6" fill="#a0a0a0" /><rect x="0.6" y="338.5" width="7.8" height="7.25" fill="#a0a0a0" /><rect x="1.6" y="340.8" width="4.8" height="2.3" fill="#efefef" opacity=".9"/><rect x="3.2" y="340.8" width="0.5" height="2.3" fill="#a0a0a0" /><rect x="4.9" y="340.8" width="0.4" height="1.6" fill="#a0a0a0" /><rect x="0.6" y="346.75" width="7.8" height="7.25" fill="#a0a0a0" /><rect x="1.6" y="349.05" width="4.8" height="2.3" fill="#efefef" opacity=".9"/><rect x="3.2" y="349.05" width="0.5" height="2.3" fill="#a0a0a0" /><rect x="4.9" y="349.05" width="0.4" height="1.6" fill="#a0a0a0" /><rect x="0" y="354.5" width="113" height="12.3" fill="url(#base2)" /><rect x="8.5" y="354.5" width="0.8" height="8" fill="#6c6c6c" /><rect x="103.4" y="354.5" width="0.8" height="8" fill="#6c6c6c" /><rect x="0" y="366.6" width="8.2" height="3" fill="#151515" /><rect x="104.8" y="366.6" width="8.2" height="3" fill="#151515" /><rect x="12.6" y="8.4" width="87.8" height="7.25" fill="#ececec" stroke="#9a9a9a" stroke-width=".5" rx="1"/><rect x="15.2" y="9.7" width="3.3" height="4.6" fill="#555" /><rect x="15.9" y="9.7" width="1.9" height="1.5" fill="#999" /><rect x="19.45" y="9.7" width="3.3" height="4.6" fill="#555" /><rect x="20.15" y="9.7" width="1.9" height="1.5" fill="#999" /><rect x="23.7" y="9.7" width="3.3" height="4.6" fill="#555" /><rect x="24.4" y="9.7" width="1.9" height="1.5" fill="#999" /><rect x="27.95" y="9.7" width="3.3" height="4.6" fill="#555" /><rect x="28.65" y="9.7" width="1.9" height="1.5" fill="#999" /><rect x="32.2" y="9.7" width="3.3" height="4.6" fill="#555" /><rect x="32.9" y="9.7" width="1.9" height="1.5" fill="#999" /><rect x="36.45" y="9.7" width="3.3" height="4.6" fill="#555" /><rect x="37.15" y="9.7" width="1.9" height="1.5" fill="#999" /><rect x="40.7" y="9.7" width="3.3" height="4.6" fill="#555" /><rect x="41.4" y="9.7" width="1.9" height="1.5" fill="#999" /><rect x="44.95" y="9.7" width="3.3" height="4.6" fill="#555" /><rect x="45.65" y="9.7" width="1.9" height="1.5" fill="#999" /><rect x="49.2" y="9.7" width="3.3" height="4.6" fill="#555" /><rect x="49.9" y="9.7" width="1.9" height="1.5" fill="#999" /><rect x="53.45" y="9.7" width="3.3" height="4.6" fill="#555" /><rect x="54.15" y="9.7" width="1.9" height="1.5" fill="#999" /><rect x="57.7" y="9.7" width="3.3" height="4.6" fill="#555" /><rect x="58.4" y="9.7" width="1.9" height="1.5" fill="#999" /><rect x="61.95" y="9.7" width="3.3" height="4.6" fill="#555" /><rect x="62.65" y="9.7" width="1.9" height="1.5" fill="#999" /><rect x="66.2" y="9.7" width="3.3" height="4.6" fill="#555" /><rect x="66.9" y="9.7" width="1.9" height="1.5" fill="#999" /><rect x="70.45" y="9.7" width="3.3" height="4.6" fill="#555" /><rect x="71.15" y="9.7" width="1.9" height="1.5" fill="#999" /><rect x="74.7" y="9.7" width="3.3" height="4.6" fill="#555" /><rect x="75.4" y="9.7" width="1.9" height="1.5" fill="#999" /><rect x="78.95" y="9.7" width="3.3" height="4.6" fill="#555" /><rect x="79.65" y="9.7" width="1.9" height="1.5" fill="#999" /><rect x="83.6" y="9.2" width="15.5" height="5.65" fill="#cdcdcd" /><rect x="84.6" y="9.6" width="1.5" height="4.85" fill="#f8f8f8" /><rect x="87.6" y="9.6" width="1.5" height="4.85" fill="#f8f8f8" /><rect x="90.6" y="9.6" width="1.5" height="4.85" fill="#f8f8f8" /><rect x="93.6" y="9.6" width="1.5" height="4.85" fill="#f8f8f8" /><rect x="96.6" y="9.6" width="1.5" height="4.85" fill="#f8f8f8" /><rect x="11.6" y="16.45" width="89.8" height="7.85" fill="#5e5e5e" /><rect x="14.8" y="17.45" width="5.6" height="5.4" fill="#8a8a8a" stroke="#bbb" stroke-width=".4"/><rect x="16.2" y="18.65" width="2.6" height="2.8" fill="#333" /><rect x="36.6" y="16.65" width="11" height="1.3" fill="#c8b040" /><circle cx="25.1" cy="21.35" r="1.5" fill="#2e9a3a" stroke="#ddd" stroke-width=".4"/><circle cx="29.9" cy="21.35" r="1.5" fill="#7a3aa8" stroke="#ddd" stroke-width=".4"/><rect x="36.1" y="20.15" width="5.4" height="2.4" fill="#2a7ad0" stroke="#ddd" stroke-width=".3"/><rect x="46.6" y="19.65" width="2.2" height="2.6" fill="#b0b0b0" /><rect x="47.1" y="20.45" width="1.2" height="1.4" fill="#484848" /><rect x="49.55" y="19.65" width="2.2" height="2.6" fill="#b0b0b0" /><rect x="50.05" y="20.45" width="1.2" height="1.4" fill="#484848" /><rect x="52.5" y="19.65" width="2.2" height="2.6" fill="#b0b0b0" /><rect x="53.0" y="20.45" width="1.2" height="1.4" fill="#484848" /><rect x="55.45" y="19.65" width="2.2" height="2.6" fill="#b0b0b0" /><rect x="55.95" y="20.45" width="1.2" height="1.4" fill="#484848" /><rect x="58.4" y="19.65" width="2.2" height="2.6" fill="#b0b0b0" /><rect x="58.9" y="20.45" width="1.2" height="1.4" fill="#484848" /><rect x="61.35" y="19.65" width="2.2" height="2.6" fill="#b0b0b0" /><rect x="61.85" y="20.45" width="1.2" height="1.4" fill="#484848" /><rect x="64.3" y="19.65" width="2.2" height="2.6" fill="#b0b0b0" /><rect x="64.8" y="20.45" width="1.2" height="1.4" fill="#484848" /><rect x="67.25" y="19.65" width="2.2" height="2.6" fill="#b0b0b0" /><rect x="67.75" y="20.45" width="1.2" height="1.4" fill="#484848" /><rect x="71.6" y="19.65" width="2.2" height="2.6" fill="#b0b0b0" /><rect x="72.1" y="20.45" width="1.2" height="1.4" fill="#484848" /><rect x="74.55" y="19.65" width="2.2" height="2.6" fill="#b0b0b0" /><rect x="75.05" y="20.45" width="1.2" height="1.4" fill="#484848" /><rect x="77.5" y="19.65" width="2.2" height="2.6" fill="#b0b0b0" /><rect x="78.0" y="20.45" width="1.2" height="1.4" fill="#484848" /><rect x="80.45" y="19.65" width="2.2" height="2.6" fill="#b0b0b0" /><rect x="80.95" y="20.45" width="1.2" height="1.4" fill="#484848" /><rect x="83.4" y="19.65" width="2.2" height="2.6" fill="#b0b0b0" /><rect x="83.9" y="20.45" width="1.2" height="1.4" fill="#484848" /><rect x="86.35" y="19.65" width="2.2" height="2.6" fill="#b0b0b0" /><rect x="86.85" y="20.45" width="1.2" height="1.4" fill="#484848" /><rect x="89.3" y="19.65" width="2.2" height="2.6" fill="#b0b0b0" /><rect x="89.8" y="20.45" width="1.2" height="1.4" fill="#484848" /><rect x="92.25" y="19.65" width="2.2" height="2.6" fill="#b0b0b0" /><rect x="92.75" y="20.45" width="1.2" height="1.4" fill="#484848" /><rect x="11.6" y="24.7" width="89.8" height="7.85" fill="#676767" /><rect x="11.6" y="24.7" width="89.8" height="0.9" fill="#8a8a8a" /><rect x="15.6" y="26.0" width="2.2" height="2.2" fill="#c2c2c2" /><rect x="16.1" y="26.6" width="1.2" height="1.1" fill="#555" /><rect x="18.55" y="26.0" width="2.2" height="2.2" fill="#c2c2c2" /><rect x="19.05" y="26.6" width="1.2" height="1.1" fill="#555" /><rect x="21.5" y="26.0" width="2.2" height="2.2" fill="#c2c2c2" /><rect x="22.0" y="26.6" width="1.2" height="1.1" fill="#555" /><rect x="24.45" y="26.0" width="2.2" height="2.2" fill="#c2c2c2" /><rect x="24.95" y="26.6" width="1.2" height="1.1" fill="#555" /><rect x="27.4" y="26.0" width="2.2" height="2.2" fill="#c2c2c2" /><rect x="27.9" y="26.6" width="1.2" height="1.1" fill="#555" /><rect x="30.35" y="26.0" width="2.2" height="2.2" fill="#c2c2c2" /><rect x="30.85" y="26.6" width="1.2" height="1.1" fill="#555" /><rect x="33.3" y="26.0" width="2.2" height="2.2" fill="#c2c2c2" /><rect x="33.8" y="26.6" width="1.2" height="1.1" fill="#555" /><rect x="36.25" y="26.0" width="2.2" height="2.2" fill="#c2c2c2" /><rect x="36.75" y="26.6" width="1.2" height="1.1" fill="#555" /><rect x="15.6" y="29.0" width="2.2" height="2.2" fill="#c2c2c2" /><rect x="16.1" y="29.6" width="1.2" height="1.1" fill="#555" /><rect x="18.55" y="29.0" width="2.2" height="2.2" fill="#c2c2c2" /><rect x="19.05" y="29.6" width="1.2" height="1.1" fill="#555" /><rect x="21.5" y="29.0" width="2.2" height="2.2" fill="#c2c2c2" /><rect x="22.0" y="29.6" width="1.2" height="1.1" fill="#555" /><rect x="24.45" y="29.0" width="2.2" height="2.2" fill="#c2c2c2" /><rect x="24.95" y="29.6" width="1.2" height="1.1" fill="#555" /><rect x="27.4" y="29.0" width="2.2" height="2.2" fill="#c2c2c2" /><rect x="27.9" y="29.6" width="1.2" height="1.1" fill="#555" /><rect x="30.35" y="29.0" width="2.2" height="2.2" fill="#c2c2c2" /><rect x="30.85" y="29.6" width="1.2" height="1.1" fill="#555" /><rect x="33.3" y="29.0" width="2.2" height="2.2" fill="#c2c2c2" /><rect x="33.8" y="29.6" width="1.2" height="1.1" fill="#555" /><rect x="36.25" y="29.0" width="2.2" height="2.2" fill="#c2c2c2" /><rect x="36.75" y="29.6" width="1.2" height="1.1" fill="#555" /><rect x="40.1" y="26.0" width="2.2" height="2.2" fill="#c2c2c2" /><rect x="40.6" y="26.6" width="1.2" height="1.1" fill="#555" /><rect x="43.05" y="26.0" width="2.2" height="2.2" fill="#c2c2c2" /><rect x="43.55" y="26.6" width="1.2" height="1.1" fill="#555" /><rect x="46.0" y="26.0" width="2.2" height="2.2" fill="#c2c2c2" /><rect x="46.5" y="26.6" width="1.2" height="1.1" fill="#555" /><rect x="48.95" y="26.0" width="2.2" height="2.2" fill="#c2c2c2" /><rect x="49.45" y="26.6" width="1.2" height="1.1" fill="#555" /><rect x="51.9" y="26.0" width="2.2" height="2.2" fill="#c2c2c2" /><rect x="52.4" y="26.6" width="1.2" height="1.1" fill="#555" /><rect x="54.85" y="26.0" width="2.2" height="2.2" fill="#c2c2c2" /><rect x="55.35" y="26.6" width="1.2" height="1.1" fill="#555" /><rect x="57.8" y="26.0" width="2.2" height="2.2" fill="#c2c2c2" /><rect x="58.3" y="26.6" width="1.2" height="1.1" fill="#555" /><rect x="60.75" y="26.0" width="2.2" height="2.2" fill="#c2c2c2" /><rect x="61.25" y="26.6" width="1.2" height="1.1" fill="#555" /><rect x="40.1" y="29.0" width="2.2" height="2.2" fill="#c2c2c2" /><rect x="40.6" y="29.6" width="1.2" height="1.1" fill="#555" /><rect x="43.05" y="29.0" width="2.2" height="2.2" fill="#c2c2c2" /><rect x="43.55" y="29.6" width="1.2" height="1.1" fill="#555" /><rect x="46.0" y="29.0" width="2.2" height="2.2" fill="#c2c2c2" /><rect x="46.5" y="29.6" width="1.2" height="1.1" fill="#555" /><rect x="48.95" y="29.0" width="2.2" height="2.2" fill="#c2c2c2" /><rect x="49.45" y="29.6" width="1.2" height="1.1" fill="#555" /><rect x="51.9" y="29.0" width="2.2" height="2.2" fill="#c2c2c2" /><rect x="52.4" y="29.6" width="1.2" height="1.1" fill="#555" /><rect x="54.85" y="29.0" width="2.2" height="2.2" fill="#c2c2c2" /><rect x="55.35" y="29.6" width="1.2" height="1.1" fill="#555" /><rect x="57.8" y="29.0" width="2.2" height="2.2" fill="#c2c2c2" /><rect x="58.3" y="29.6" width="1.2" height="1.1" fill="#555" /><rect x="60.75" y="29.0" width="2.2" height="2.2" fill="#c2c2c2" /><rect x="61.25" y="29.6" width="1.2" height="1.1" fill="#555" /><rect x="64.6" y="26.0" width="2.2" height="2.2" fill="#c2c2c2" /><rect x="65.1" y="26.6" width="1.2" height="1.1" fill="#555" /><rect x="67.55" y="26.0" width="2.2" height="2.2" fill="#c2c2c2" /><rect x="68.05" y="26.6" width="1.2" height="1.1" fill="#555" /><rect x="70.5" y="26.0" width="2.2" height="2.2" fill="#c2c2c2" /><rect x="71.0" y="26.6" width="1.2" height="1.1" fill="#555" /><rect x="73.45" y="26.0" width="2.2" height="2.2" fill="#c2c2c2" /><rect x="73.95" y="26.6" width="1.2" height="1.1" fill="#555" /><rect x="76.4" y="26.0" width="2.2" height="2.2" fill="#c2c2c2" /><rect x="76.9" y="26.6" width="1.2" height="1.1" fill="#555" /><rect x="79.35" y="26.0" width="2.2" height="2.2" fill="#c2c2c2" /><rect x="79.85" y="26.6" width="1.2" height="1.1" fill="#555" /><rect x="82.3" y="26.0" width="2.2" height="2.2" fill="#c2c2c2" /><rect x="82.8" y="26.6" width="1.2" height="1.1" fill="#555" /><rect x="85.25" y="26.0" width="2.2" height="2.2" fill="#c2c2c2" /><rect x="85.75" y="26.6" width="1.2" height="1.1" fill="#555" /><rect x="64.6" y="29.0" width="2.2" height="2.2" fill="#c2c2c2" /><rect x="65.1" y="29.6" width="1.2" height="1.1" fill="#555" /><rect x="67.55" y="29.0" width="2.2" height="2.2" fill="#c2c2c2" /><rect x="68.05" y="29.6" width="1.2" height="1.1" fill="#555" /><rect x="70.5" y="29.0" width="2.2" height="2.2" fill="#c2c2c2" /><rect x="71.0" y="29.6" width="1.2" height="1.1" fill="#555" /><rect x="73.45" y="29.0" width="2.2" height="2.2" fill="#c2c2c2" /><rect x="73.95" y="29.6" width="1.2" height="1.1" fill="#555" /><rect x="76.4" y="29.0" width="2.2" height="2.2" fill="#c2c2c2" /><rect x="76.9" y="29.6" width="1.2" height="1.1" fill="#555" /><rect x="79.35" y="29.0" width="2.2" height="2.2" fill="#c2c2c2" /><rect x="79.85" y="29.6" width="1.2" height="1.1" fill="#555" /><rect x="82.3" y="29.0" width="2.2" height="2.2" fill="#c2c2c2" /><rect x="82.8" y="29.6" width="1.2" height="1.1" fill="#555" /><rect x="85.25" y="29.0" width="2.2" height="2.2" fill="#c2c2c2" /><rect x="85.75" y="29.6" width="1.2" height="1.1" fill="#555" /><rect x="91.1" y="25.8" width="3.4" height="2.5" fill="#1e1e1e" /><rect x="91.9" y="25.8" width="1.8" height="0.9" fill="#999" /><rect x="91.1" y="29.0" width="3.4" height="2.5" fill="#1e1e1e" /><rect x="91.9" y="29.0" width="1.8" height="0.9" fill="#999" /><rect x="95.5" y="25.8" width="3.4" height="2.5" fill="#1e1e1e" /><rect x="96.3" y="25.8" width="1.8" height="0.9" fill="#999" /><rect x="95.5" y="29.0" width="3.4" height="2.5" fill="#1e1e1e" /><rect x="96.3" y="29.0" width="1.8" height="0.9" fill="#999" /><rect x="11.6" y="57.7" width="89.8" height="16.1" fill="#626262" /><rect x="11.6" y="57.7" width="89.8" height="0.9" fill="#868686" /><rect x="11.6" y="72.8" width="89.8" height="1" fill="#404040" /><path d="M45.6 58.7h14l-6 4.6h-14z" fill="#8a8a8a" opacity=".5"/><rect x="18.9" y="60.6" width="1.9" height="1.8" fill="#0c0c0c" /><rect x="27.1" y="60.5" width="22.5" height="2.1" fill="#7c7c7c" rx="1" stroke="#4e4e4e" stroke-width=".45"/><rect x="62.6" y="60.5" width="29" height="2.1" fill="#7c7c7c" rx="1" stroke="#4e4e4e" stroke-width=".45"/><rect x="18.2" y="64.1" width="76.6" height="8.5" fill="#2c2c2c" /><rect x="18.6" y="64.8" width="14" height="2.65" fill="#b2b2b2" rx=".7"/><rect x="19.0" y="64.9" width="13.2" height="0.9" fill="#d8d8d8" /><rect x="19.4" y="66.57" width="12.2" height="0.7" fill="#808080" /><rect x="19.0" y="66.65" width="13.2" height="0.7" fill="#7a7a7a" /><rect x="18.6" y="68.65" width="14" height="2.65" fill="#b2b2b2" rx=".7"/><rect x="19.0" y="68.75" width="13.2" height="0.9" fill="#d8d8d8" /><rect x="19.4" y="70.42" width="12.2" height="0.7" fill="#808080" /><rect x="19.0" y="70.5" width="13.2" height="0.7" fill="#7a7a7a" /><rect x="33.0" y="64.5" width="1.3" height="7.7" fill="#101010" /><rect x="34.8" y="64.5" width="1.5" height="7.7" fill="#6e6e6e" /><rect x="37.35" y="64.8" width="14" height="2.65" fill="#b2b2b2" rx=".7"/><rect x="37.75" y="64.9" width="13.2" height="0.9" fill="#d8d8d8" /><rect x="38.15" y="66.57" width="12.2" height="0.7" fill="#808080" /><rect x="37.75" y="66.65" width="13.2" height="0.7" fill="#7a7a7a" /><rect x="37.35" y="68.65" width="14" height="2.65" fill="#b2b2b2" rx=".7"/><rect x="37.75" y="68.75" width="13.2" height="0.9" fill="#d8d8d8" /><rect x="38.15" y="70.42" width="12.2" height="0.7" fill="#808080" /><rect x="37.75" y="70.5" width="13.2" height="0.7" fill="#7a7a7a" /><rect x="51.75" y="64.5" width="1.3" height="7.7" fill="#101010" /><rect x="53.55" y="64.5" width="1.5" height="7.7" fill="#6e6e6e" /><rect x="56.1" y="64.8" width="14" height="2.65" fill="#b2b2b2" rx=".7"/><rect x="56.5" y="64.9" width="13.2" height="0.9" fill="#d8d8d8" /><rect x="56.9" y="66.57" width="12.2" height="0.7" fill="#808080" /><rect x="56.5" y="66.65" width="13.2" height="0.7" fill="#7a7a7a" /><rect x="56.1" y="68.65" width="14" height="2.65" fill="#b2b2b2" rx=".7"/><rect x="56.5" y="68.75" width="13.2" height="0.9" fill="#d8d8d8" /><rect x="56.9" y="70.42" width="12.2" height="0.7" fill="#808080" /><rect x="56.5" y="70.5" width="13.2" height="0.7" fill="#7a7a7a" /><rect x="70.5" y="64.5" width="1.3" height="7.7" fill="#101010" /><rect x="72.3" y="64.5" width="1.5" height="7.7" fill="#6e6e6e" /><rect x="74.85" y="64.8" width="14" height="2.65" fill="#b2b2b2" rx=".7"/><rect x="75.25" y="64.9" width="13.2" height="0.9" fill="#d8d8d8" /><rect x="75.65" y="66.57" width="12.2" height="0.7" fill="#808080" /><rect x="75.25" y="66.65" width="13.2" height="0.7" fill="#7a7a7a" /><rect x="74.85" y="68.65" width="14" height="2.65" fill="#b2b2b2" rx=".7"/><rect x="75.25" y="68.75" width="13.2" height="0.9" fill="#d8d8d8" /><rect x="75.65" y="70.42" width="12.2" height="0.7" fill="#808080" /><rect x="75.25" y="70.5" width="13.2" height="0.7" fill="#7a7a7a" /><rect x="89.25" y="64.5" width="1.3" height="7.7" fill="#101010" /><rect x="91.05" y="64.5" width="1.5" height="7.7" fill="#6e6e6e" /><path d="M12.2 63.53l1.6-1.4" stroke="#f0f0f0" stroke-width=".8"/><path d="M99.2 63.53l1.6-1.4" stroke="#f0f0f0" stroke-width=".8"/><path d="M12.2 71.78l1.6-1.4" stroke="#f0f0f0" stroke-width=".8"/><path d="M99.2 71.78l1.6-1.4" stroke="#f0f0f0" stroke-width=".8"/><rect x="11.6" y="74.2" width="89.8" height="16.1" fill="#626262" /><rect x="11.6" y="74.2" width="89.8" height="0.9" fill="#868686" /><rect x="11.6" y="89.3" width="89.8" height="1" fill="#404040" /><path d="M45.6 75.2h14l-6 4.6h-14z" fill="#8a8a8a" opacity=".5"/><rect x="18.9" y="77.1" width="1.9" height="1.8" fill="#0c0c0c" /><rect x="27.1" y="77.0" width="22.5" height="2.1" fill="#7c7c7c" rx="1" stroke="#4e4e4e" stroke-width=".45"/><rect x="62.6" y="77.0" width="29" height="2.1" fill="#7c7c7c" rx="1" stroke="#4e4e4e" stroke-width=".45"/><rect x="18.2" y="80.6" width="76.6" height="8.5" fill="#2c2c2c" /><rect x="18.6" y="81.3" width="14" height="2.65" fill="#b2b2b2" rx=".7"/><rect x="19.0" y="81.4" width="13.2" height="0.9" fill="#d8d8d8" /><rect x="19.4" y="83.07" width="12.2" height="0.7" fill="#808080" /><rect x="19.0" y="83.15" width="13.2" height="0.7" fill="#7a7a7a" /><rect x="18.6" y="85.15" width="14" height="2.65" fill="#b2b2b2" rx=".7"/><rect x="19.0" y="85.25" width="13.2" height="0.9" fill="#d8d8d8" /><rect x="19.4" y="86.92" width="12.2" height="0.7" fill="#808080" /><rect x="19.0" y="87.0" width="13.2" height="0.7" fill="#7a7a7a" /><rect x="33.0" y="81.0" width="1.3" height="7.7" fill="#101010" /><rect x="34.8" y="81.0" width="1.5" height="7.7" fill="#6e6e6e" /><rect x="37.35" y="81.3" width="14" height="2.65" fill="#b2b2b2" rx=".7"/><rect x="37.75" y="81.4" width="13.2" height="0.9" fill="#d8d8d8" /><rect x="38.15" y="83.07" width="12.2" height="0.7" fill="#808080" /><rect x="37.75" y="83.15" width="13.2" height="0.7" fill="#7a7a7a" /><rect x="37.35" y="85.15" width="14" height="2.65" fill="#b2b2b2" rx=".7"/><rect x="37.75" y="85.25" width="13.2" height="0.9" fill="#d8d8d8" /><rect x="38.15" y="86.92" width="12.2" height="0.7" fill="#808080" /><rect x="37.75" y="87.0" width="13.2" height="0.7" fill="#7a7a7a" /><rect x="51.75" y="81.0" width="1.3" height="7.7" fill="#101010" /><rect x="53.55" y="81.0" width="1.5" height="7.7" fill="#6e6e6e" /><rect x="56.1" y="81.3" width="14" height="2.65" fill="#b2b2b2" rx=".7"/><rect x="56.5" y="81.4" width="13.2" height="0.9" fill="#d8d8d8" /><rect x="56.9" y="83.07" width="12.2" height="0.7" fill="#808080" /><rect x="56.5" y="83.15" width="13.2" height="0.7" fill="#7a7a7a" /><rect x="56.1" y="85.15" width="14" height="2.65" fill="#b2b2b2" rx=".7"/><rect x="56.5" y="85.25" width="13.2" height="0.9" fill="#d8d8d8" /><rect x="56.9" y="86.92" width="12.2" height="0.7" fill="#808080" /><rect x="56.5" y="87.0" width="13.2" height="0.7" fill="#7a7a7a" /><rect x="70.5" y="81.0" width="1.3" height="7.7" fill="#101010" /><rect x="72.3" y="81.0" width="1.5" height="7.7" fill="#6e6e6e" /><rect x="74.85" y="81.3" width="14" height="2.65" fill="#b2b2b2" rx=".7"/><rect x="75.25" y="81.4" width="13.2" height="0.9" fill="#d8d8d8" /><rect x="75.65" y="83.07" width="12.2" height="0.7" fill="#808080" /><rect x="75.25" y="83.15" width="13.2" height="0.7" fill="#7a7a7a" /><rect x="74.85" y="85.15" width="14" height="2.65" fill="#b2b2b2" rx=".7"/><rect x="75.25" y="85.25" width="13.2" height="0.9" fill="#d8d8d8" /><rect x="75.65" y="86.92" width="12.2" height="0.7" fill="#808080" /><rect x="75.25" y="87.0" width="13.2" height="0.7" fill="#7a7a7a" /><rect x="89.25" y="81.0" width="1.3" height="7.7" fill="#101010" /><rect x="91.05" y="81.0" width="1.5" height="7.7" fill="#6e6e6e" /><path d="M12.2 80.03l1.6-1.4" stroke="#f0f0f0" stroke-width=".8"/><path d="M99.2 80.03l1.6-1.4" stroke="#f0f0f0" stroke-width=".8"/><path d="M12.2 88.28l1.6-1.4" stroke="#f0f0f0" stroke-width=".8"/><path d="M99.2 88.28l1.6-1.4" stroke="#f0f0f0" stroke-width=".8"/><rect x="11.1" y="99.35" width="90.8" height="6.85" fill="#fafafa" stroke="#aaa" stroke-width=".5" rx="2.2"/><rect x="16.6" y="100.75" width="4.6" height="4.4" fill="#e0e0e0" stroke="#888" stroke-width=".4"/><path d="M17.7 101.55l1.2 2.6 1.2-2.6" stroke="#333" stroke-width=".7" fill="none"/><rect x="23.7" y="100.75" width="4.6" height="4.4" fill="#e0e0e0" stroke="#888" stroke-width=".4"/><path d="M24.8 101.55l1.2 2.6 1.2-2.6" stroke="#333" stroke-width=".7" fill="none"/><rect x="30.8" y="100.75" width="4.6" height="4.4" fill="#e0e0e0" stroke="#888" stroke-width=".4"/><path d="M31.9 101.55l1.2 2.6 1.2-2.6" stroke="#333" stroke-width=".7" fill="none"/><rect x="37.9" y="100.75" width="4.6" height="4.4" fill="#e0e0e0" stroke="#888" stroke-width=".4"/><path d="M39.0 101.55l1.2 2.6 1.2-2.6" stroke="#333" stroke-width=".7" fill="none"/><rect x="45.0" y="100.75" width="4.6" height="4.4" fill="#e0e0e0" stroke="#888" stroke-width=".4"/><path d="M46.1 101.55l1.2 2.6 1.2-2.6" stroke="#333" stroke-width=".7" fill="none"/><rect x="52.1" y="100.75" width="4.6" height="4.4" fill="#e0e0e0" stroke="#888" stroke-width=".4"/><path d="M53.2 101.55l1.2 2.6 1.2-2.6" stroke="#333" stroke-width=".7" fill="none"/><rect x="59.2" y="100.75" width="4.6" height="4.4" fill="#e0e0e0" stroke="#888" stroke-width=".4"/><path d="M60.3 101.55l1.2 2.6 1.2-2.6" stroke="#333" stroke-width=".7" fill="none"/><rect x="66.3" y="100.75" width="4.6" height="4.4" fill="#e0e0e0" stroke="#888" stroke-width=".4"/><path d="M67.4 101.55l1.2 2.6 1.2-2.6" stroke="#333" stroke-width=".7" fill="none"/><rect x="73.4" y="100.75" width="4.6" height="4.4" fill="#e0e0e0" stroke="#888" stroke-width=".4"/><path d="M74.5 101.55l1.2 2.6 1.2-2.6" stroke="#333" stroke-width=".7" fill="none"/><rect x="80.5" y="100.75" width="4.6" height="4.4" fill="#e0e0e0" stroke="#888" stroke-width=".4"/><path d="M81.6 101.55l1.2 2.6 1.2-2.6" stroke="#333" stroke-width=".7" fill="none"/><rect x="89.6" y="101.15" width="6.6" height="3.4" fill="#e8202a" rx=".8"/><rect x="91.1" y="102.35" width="3.2" height="0.9" fill="#ff9a9a" /><rect x="11.6" y="156.7" width="89.8" height="24.35" fill="#626262" /><rect x="11.6" y="156.7" width="89.8" height="0.9" fill="#868686" /><rect x="11.6" y="180.05" width="89.8" height="1" fill="#404040" /><path d="M45.6 157.7h14l-6 4.6h-14z" fill="#8a8a8a" opacity=".5"/><rect x="18.9" y="159.6" width="1.9" height="1.8" fill="#0c0c0c" /><rect x="27.1" y="159.5" width="22.5" height="2.1" fill="#7c7c7c" rx="1" stroke="#4e4e4e" stroke-width=".45"/><rect x="62.6" y="159.5" width="29" height="2.1" fill="#7c7c7c" rx="1" stroke="#4e4e4e" stroke-width=".45"/><rect x="18.2" y="163.1" width="76.6" height="16.75" fill="#2c2c2c" /><rect x="18.6" y="163.8" width="14" height="2.79" fill="#b2b2b2" rx=".7"/><rect x="19.0" y="163.9" width="13.2" height="0.9" fill="#d8d8d8" /><rect x="19.4" y="165.63" width="12.2" height="0.7" fill="#808080" /><rect x="19.0" y="165.79" width="13.2" height="0.7" fill="#7a7a7a" /><rect x="18.6" y="167.79" width="14" height="2.79" fill="#b2b2b2" rx=".7"/><rect x="19.0" y="167.89" width="13.2" height="0.9" fill="#d8d8d8" /><rect x="19.4" y="169.62" width="12.2" height="0.7" fill="#808080" /><rect x="19.0" y="169.78" width="13.2" height="0.7" fill="#7a7a7a" /><rect x="18.6" y="171.78" width="14" height="2.79" fill="#b2b2b2" rx=".7"/><rect x="19.0" y="171.88" width="13.2" height="0.9" fill="#d8d8d8" /><rect x="19.4" y="173.61" width="12.2" height="0.7" fill="#808080" /><rect x="19.0" y="173.76" width="13.2" height="0.7" fill="#7a7a7a" /><rect x="18.6" y="175.76" width="14" height="2.79" fill="#b2b2b2" rx=".7"/><rect x="19.0" y="175.86" width="13.2" height="0.9" fill="#d8d8d8" /><rect x="19.4" y="177.6" width="12.2" height="0.7" fill="#808080" /><rect x="19.0" y="177.75" width="13.2" height="0.7" fill="#7a7a7a" /><rect x="33.0" y="163.5" width="1.3" height="15.95" fill="#101010" /><rect x="34.8" y="163.5" width="1.5" height="15.95" fill="#6e6e6e" /><rect x="37.35" y="163.8" width="14" height="2.79" fill="#b2b2b2" rx=".7"/><rect x="37.75" y="163.9" width="13.2" height="0.9" fill="#d8d8d8" /><rect x="38.15" y="165.63" width="12.2" height="0.7" fill="#808080" /><rect x="37.75" y="165.79" width="13.2" height="0.7" fill="#7a7a7a" /><rect x="37.35" y="167.79" width="14" height="2.79" fill="#b2b2b2" rx=".7"/><rect x="37.75" y="167.89" width="13.2" height="0.9" fill="#d8d8d8" /><rect x="38.15" y="169.62" width="12.2" height="0.7" fill="#808080" /><rect x="37.75" y="169.78" width="13.2" height="0.7" fill="#7a7a7a" /><rect x="37.35" y="171.78" width="14" height="2.79" fill="#b2b2b2" rx=".7"/><rect x="37.75" y="171.88" width="13.2" height="0.9" fill="#d8d8d8" /><rect x="38.15" y="173.61" width="12.2" height="0.7" fill="#808080" /><rect x="37.75" y="173.76" width="13.2" height="0.7" fill="#7a7a7a" /><rect x="37.35" y="175.76" width="14" height="2.79" fill="#b2b2b2" rx=".7"/><rect x="37.75" y="175.86" width="13.2" height="0.9" fill="#d8d8d8" /><rect x="38.15" y="177.6" width="12.2" height="0.7" fill="#808080" /><rect x="37.75" y="177.75" width="13.2" height="0.7" fill="#7a7a7a" /><rect x="51.75" y="163.5" width="1.3" height="15.95" fill="#101010" /><rect x="53.55" y="163.5" width="1.5" height="15.95" fill="#6e6e6e" /><rect x="56.1" y="163.8" width="14" height="2.79" fill="#b2b2b2" rx=".7"/><rect x="56.5" y="163.9" width="13.2" height="0.9" fill="#d8d8d8" /><rect x="56.9" y="165.63" width="12.2" height="0.7" fill="#808080" /><rect x="56.5" y="165.79" width="13.2" height="0.7" fill="#7a7a7a" /><rect x="56.1" y="167.79" width="14" height="2.79" fill="#b2b2b2" rx=".7"/><rect x="56.5" y="167.89" width="13.2" height="0.9" fill="#d8d8d8" /><rect x="56.9" y="169.62" width="12.2" height="0.7" fill="#808080" /><rect x="56.5" y="169.78" width="13.2" height="0.7" fill="#7a7a7a" /><rect x="56.1" y="171.78" width="14" height="2.79" fill="#b2b2b2" rx=".7"/><rect x="56.5" y="171.88" width="13.2" height="0.9" fill="#d8d8d8" /><rect x="56.9" y="173.61" width="12.2" height="0.7" fill="#808080" /><rect x="56.5" y="173.76" width="13.2" height="0.7" fill="#7a7a7a" /><rect x="56.1" y="175.76" width="14" height="2.79" fill="#b2b2b2" rx=".7"/><rect x="56.5" y="175.86" width="13.2" height="0.9" fill="#d8d8d8" /><rect x="56.9" y="177.6" width="12.2" height="0.7" fill="#808080" /><rect x="56.5" y="177.75" width="13.2" height="0.7" fill="#7a7a7a" /><rect x="70.5" y="163.5" width="1.3" height="15.95" fill="#101010" /><rect x="72.3" y="163.5" width="1.5" height="15.95" fill="#6e6e6e" /><rect x="74.85" y="163.8" width="14" height="2.79" fill="#b2b2b2" rx=".7"/><rect x="75.25" y="163.9" width="13.2" height="0.9" fill="#d8d8d8" /><rect x="75.65" y="165.63" width="12.2" height="0.7" fill="#808080" /><rect x="75.25" y="165.79" width="13.2" height="0.7" fill="#7a7a7a" /><rect x="74.85" y="167.79" width="14" height="2.79" fill="#b2b2b2" rx=".7"/><rect x="75.25" y="167.89" width="13.2" height="0.9" fill="#d8d8d8" /><rect x="75.65" y="169.62" width="12.2" height="0.7" fill="#808080" /><rect x="75.25" y="169.78" width="13.2" height="0.7" fill="#7a7a7a" /><rect x="74.85" y="171.78" width="14" height="2.79" fill="#b2b2b2" rx=".7"/><rect x="75.25" y="171.88" width="13.2" height="0.9" fill="#d8d8d8" /><rect x="75.65" y="173.61" width="12.2" height="0.7" fill="#808080" /><rect x="75.25" y="173.76" width="13.2" height="0.7" fill="#7a7a7a" /><rect x="74.85" y="175.76" width="14" height="2.79" fill="#b2b2b2" rx=".7"/><rect x="75.25" y="175.86" width="13.2" height="0.9" fill="#d8d8d8" /><rect x="75.65" y="177.6" width="12.2" height="0.7" fill="#808080" /><rect x="75.25" y="177.75" width="13.2" height="0.7" fill="#7a7a7a" /><rect x="89.25" y="163.5" width="1.3" height="15.95" fill="#101010" /><rect x="91.05" y="163.5" width="1.5" height="15.95" fill="#6e6e6e" /><path d="M12.2 164.59l1.6-1.4" stroke="#f0f0f0" stroke-width=".8"/><path d="M99.2 164.59l1.6-1.4" stroke="#f0f0f0" stroke-width=".8"/><path d="M12.2 176.96l1.6-1.4" stroke="#f0f0f0" stroke-width=".8"/><path d="M99.2 176.96l1.6-1.4" stroke="#f0f0f0" stroke-width=".8"/><rect x="11.6" y="181.45" width="89.8" height="24.35" fill="#626262" /><rect x="11.6" y="181.45" width="89.8" height="0.9" fill="#868686" /><rect x="11.6" y="204.8" width="89.8" height="1" fill="#404040" /><path d="M45.6 182.45h14l-6 4.6h-14z" fill="#8a8a8a" opacity=".5"/><rect x="18.9" y="184.35" width="1.9" height="1.8" fill="#0c0c0c" /><rect x="27.1" y="184.25" width="22.5" height="2.1" fill="#7c7c7c" rx="1" stroke="#4e4e4e" stroke-width=".45"/><rect x="62.6" y="184.25" width="29" height="2.1" fill="#7c7c7c" rx="1" stroke="#4e4e4e" stroke-width=".45"/><rect x="18.2" y="187.85" width="76.6" height="16.75" fill="#2c2c2c" /><rect x="18.6" y="188.55" width="14" height="2.79" fill="#b2b2b2" rx=".7"/><rect x="19.0" y="188.65" width="13.2" height="0.9" fill="#d8d8d8" /><rect x="19.4" y="190.38" width="12.2" height="0.7" fill="#808080" /><rect x="19.0" y="190.54" width="13.2" height="0.7" fill="#7a7a7a" /><rect x="18.6" y="192.54" width="14" height="2.79" fill="#b2b2b2" rx=".7"/><rect x="19.0" y="192.64" width="13.2" height="0.9" fill="#d8d8d8" /><rect x="19.4" y="194.37" width="12.2" height="0.7" fill="#808080" /><rect x="19.0" y="194.53" width="13.2" height="0.7" fill="#7a7a7a" /><rect x="18.6" y="196.53" width="14" height="2.79" fill="#b2b2b2" rx=".7"/><rect x="19.0" y="196.62" width="13.2" height="0.9" fill="#d8d8d8" /><rect x="19.4" y="198.36" width="12.2" height="0.7" fill="#808080" /><rect x="19.0" y="198.51" width="13.2" height="0.7" fill="#7a7a7a" /><rect x="18.6" y="200.51" width="14" height="2.79" fill="#b2b2b2" rx=".7"/><rect x="19.0" y="200.61" width="13.2" height="0.9" fill="#d8d8d8" /><rect x="19.4" y="202.35" width="12.2" height="0.7" fill="#808080" /><rect x="19.0" y="202.5" width="13.2" height="0.7" fill="#7a7a7a" /><rect x="33.0" y="188.25" width="1.3" height="15.95" fill="#101010" /><rect x="34.8" y="188.25" width="1.5" height="15.95" fill="#6e6e6e" /><rect x="37.35" y="188.55" width="14" height="2.79" fill="#b2b2b2" rx=".7"/><rect x="37.75" y="188.65" width="13.2" height="0.9" fill="#d8d8d8" /><rect x="38.15" y="190.38" width="12.2" height="0.7" fill="#808080" /><rect x="37.75" y="190.54" width="13.2" height="0.7" fill="#7a7a7a" /><rect x="37.35" y="192.54" width="14" height="2.79" fill="#b2b2b2" rx=".7"/><rect x="37.75" y="192.64" width="13.2" height="0.9" fill="#d8d8d8" /><rect x="38.15" y="194.37" width="12.2" height="0.7" fill="#808080" /><rect x="37.75" y="194.53" width="13.2" height="0.7" fill="#7a7a7a" /><rect x="37.35" y="196.53" width="14" height="2.79" fill="#b2b2b2" rx=".7"/><rect x="37.75" y="196.62" width="13.2" height="0.9" fill="#d8d8d8" /><rect x="38.15" y="198.36" width="12.2" height="0.7" fill="#808080" /><rect x="37.75" y="198.51" width="13.2" height="0.7" fill="#7a7a7a" /><rect x="37.35" y="200.51" width="14" height="2.79" fill="#b2b2b2" rx=".7"/><rect x="37.75" y="200.61" width="13.2" height="0.9" fill="#d8d8d8" /><rect x="38.15" y="202.35" width="12.2" height="0.7" fill="#808080" /><rect x="37.75" y="202.5" width="13.2" height="0.7" fill="#7a7a7a" /><rect x="51.75" y="188.25" width="1.3" height="15.95" fill="#101010" /><rect x="53.55" y="188.25" width="1.5" height="15.95" fill="#6e6e6e" /><rect x="56.1" y="188.55" width="14" height="2.79" fill="#b2b2b2" rx=".7"/><rect x="56.5" y="188.65" width="13.2" height="0.9" fill="#d8d8d8" /><rect x="56.9" y="190.38" width="12.2" height="0.7" fill="#808080" /><rect x="56.5" y="190.54" width="13.2" height="0.7" fill="#7a7a7a" /><rect x="56.1" y="192.54" width="14" height="2.79" fill="#b2b2b2" rx=".7"/><rect x="56.5" y="192.64" width="13.2" height="0.9" fill="#d8d8d8" /><rect x="56.9" y="194.37" width="12.2" height="0.7" fill="#808080" /><rect x="56.5" y="194.53" width="13.2" height="0.7" fill="#7a7a7a" /><rect x="56.1" y="196.53" width="14" height="2.79" fill="#b2b2b2" rx=".7"/><rect x="56.5" y="196.62" width="13.2" height="0.9" fill="#d8d8d8" /><rect x="56.9" y="198.36" width="12.2" height="0.7" fill="#808080" /><rect x="56.5" y="198.51" width="13.2" height="0.7" fill="#7a7a7a" /><rect x="56.1" y="200.51" width="14" height="2.79" fill="#b2b2b2" rx=".7"/><rect x="56.5" y="200.61" width="13.2" height="0.9" fill="#d8d8d8" /><rect x="56.9" y="202.35" width="12.2" height="0.7" fill="#808080" /><rect x="56.5" y="202.5" width="13.2" height="0.7" fill="#7a7a7a" /><rect x="70.5" y="188.25" width="1.3" height="15.95" fill="#101010" /><rect x="72.3" y="188.25" width="1.5" height="15.95" fill="#6e6e6e" /><rect x="74.85" y="188.55" width="14" height="2.79" fill="#b2b2b2" rx=".7"/><rect x="75.25" y="188.65" width="13.2" height="0.9" fill="#d8d8d8" /><rect x="75.65" y="190.38" width="12.2" height="0.7" fill="#808080" /><rect x="75.25" y="190.54" width="13.2" height="0.7" fill="#7a7a7a" /><rect x="74.85" y="192.54" width="14" height="2.79" fill="#b2b2b2" rx=".7"/><rect x="75.25" y="192.64" width="13.2" height="0.9" fill="#d8d8d8" /><rect x="75.65" y="194.37" width="12.2" height="0.7" fill="#808080" /><rect x="75.25" y="194.53" width="13.2" height="0.7" fill="#7a7a7a" /><rect x="74.85" y="196.53" width="14" height="2.79" fill="#b2b2b2" rx=".7"/><rect x="75.25" y="196.62" width="13.2" height="0.9" fill="#d8d8d8" /><rect x="75.65" y="198.36" width="12.2" height="0.7" fill="#808080" /><rect x="75.25" y="198.51" width="13.2" height="0.7" fill="#7a7a7a" /><rect x="74.85" y="200.51" width="14" height="2.79" fill="#b2b2b2" rx=".7"/><rect x="75.25" y="200.61" width="13.2" height="0.9" fill="#d8d8d8" /><rect x="75.65" y="202.35" width="12.2" height="0.7" fill="#808080" /><rect x="75.25" y="202.5" width="13.2" height="0.7" fill="#7a7a7a" /><rect x="89.25" y="188.25" width="1.3" height="15.95" fill="#101010" /><rect x="91.05" y="188.25" width="1.5" height="15.95" fill="#6e6e6e" /><path d="M12.2 189.34l1.6-1.4" stroke="#f0f0f0" stroke-width=".8"/><path d="M99.2 189.34l1.6-1.4" stroke="#f0f0f0" stroke-width=".8"/><path d="M12.2 201.71l1.6-1.4" stroke="#f0f0f0" stroke-width=".8"/><path d="M99.2 201.71l1.6-1.4" stroke="#f0f0f0" stroke-width=".8"/><rect x="11.6" y="222.8" width="89.8" height="7.65" fill="#4c4c4c" /><rect x="12.6" y="223.3" width="87.8" height="6.45" fill="#6a6a6a" stroke="#8e8e8e" stroke-width=".4"/><rect x="15.6" y="224.3" width="81.8" height="1.6" fill="#c4c4c4" /><rect x="16.2" y="225.5" width="2.2" height="2.8" fill="#1c1c1c" /><rect x="16.2" y="224.9" width="2.2" height="0.8" fill="#e0e0e0" /><rect x="19.64" y="225.5" width="2.2" height="2.8" fill="#1c1c1c" /><rect x="19.64" y="224.9" width="2.2" height="0.8" fill="#e0e0e0" /><rect x="23.08" y="225.5" width="2.2" height="2.8" fill="#1c1c1c" /><rect x="23.08" y="224.9" width="2.2" height="0.8" fill="#e0e0e0" /><rect x="26.52" y="225.5" width="2.2" height="2.8" fill="#1c1c1c" /><rect x="26.52" y="224.9" width="2.2" height="0.8" fill="#e0e0e0" /><rect x="29.96" y="225.5" width="2.2" height="2.8" fill="#1c1c1c" /><rect x="29.96" y="224.9" width="2.2" height="0.8" fill="#e0e0e0" /><rect x="33.4" y="225.5" width="2.2" height="2.8" fill="#1c1c1c" /><rect x="33.4" y="224.9" width="2.2" height="0.8" fill="#e0e0e0" /><rect x="36.84" y="225.5" width="2.2" height="2.8" fill="#1c1c1c" /><rect x="36.84" y="224.9" width="2.2" height="0.8" fill="#e0e0e0" /><rect x="40.28" y="225.5" width="2.2" height="2.8" fill="#1c1c1c" /><rect x="40.28" y="224.9" width="2.2" height="0.8" fill="#e0e0e0" /><rect x="43.72" y="225.5" width="2.2" height="2.8" fill="#1c1c1c" /><rect x="43.72" y="224.9" width="2.2" height="0.8" fill="#e0e0e0" /><rect x="47.16" y="225.5" width="2.2" height="2.8" fill="#1c1c1c" /><rect x="47.16" y="224.9" width="2.2" height="0.8" fill="#e0e0e0" /><rect x="50.6" y="225.5" width="2.2" height="2.8" fill="#1c1c1c" /><rect x="50.6" y="224.9" width="2.2" height="0.8" fill="#e0e0e0" /><rect x="54.04" y="225.5" width="2.2" height="2.8" fill="#1c1c1c" /><rect x="54.04" y="224.9" width="2.2" height="0.8" fill="#e0e0e0" /><rect x="57.48" y="225.5" width="2.2" height="2.8" fill="#1c1c1c" /><rect x="57.48" y="224.9" width="2.2" height="0.8" fill="#e0e0e0" /><rect x="60.92" y="225.5" width="2.2" height="2.8" fill="#1c1c1c" /><rect x="60.92" y="224.9" width="2.2" height="0.8" fill="#e0e0e0" /><rect x="64.36" y="225.5" width="2.2" height="2.8" fill="#1c1c1c" /><rect x="64.36" y="224.9" width="2.2" height="0.8" fill="#e0e0e0" /><rect x="67.8" y="225.5" width="2.2" height="2.8" fill="#1c1c1c" /><rect x="67.8" y="224.9" width="2.2" height="0.8" fill="#e0e0e0" /><rect x="71.24" y="225.5" width="2.2" height="2.8" fill="#1c1c1c" /><rect x="71.24" y="224.9" width="2.2" height="0.8" fill="#e0e0e0" /><rect x="74.68" y="225.5" width="2.2" height="2.8" fill="#1c1c1c" /><rect x="74.68" y="224.9" width="2.2" height="0.8" fill="#e0e0e0" /><rect x="78.12" y="225.5" width="2.2" height="2.8" fill="#1c1c1c" /><rect x="78.12" y="224.9" width="2.2" height="0.8" fill="#e0e0e0" /><rect x="81.56" y="225.5" width="2.2" height="2.8" fill="#1c1c1c" /><rect x="81.56" y="224.9" width="2.2" height="0.8" fill="#e0e0e0" /><rect x="85.0" y="225.5" width="2.2" height="2.8" fill="#1c1c1c" /><rect x="85.0" y="224.9" width="2.2" height="0.8" fill="#e0e0e0" /><rect x="88.44" y="225.5" width="2.2" height="2.8" fill="#1c1c1c" /><rect x="88.44" y="224.9" width="2.2" height="0.8" fill="#e0e0e0" /><rect x="91.88" y="225.5" width="2.2" height="2.8" fill="#1c1c1c" /><rect x="91.88" y="224.9" width="2.2" height="0.8" fill="#e0e0e0" /><rect x="95.32" y="225.5" width="2.2" height="2.8" fill="#1c1c1c" /><rect x="95.32" y="224.9" width="2.2" height="0.8" fill="#e0e0e0" /><circle cx="14.6" cy="224.7" r=".8" fill="#eee"/><circle cx="98.39999999999999" cy="228.5" r=".8" fill="#eee"/><rect x="11.6" y="239.3" width="89.8" height="7.65" fill="#777" /><rect x="11.6" y="239.3" width="89.8" height="0.8" fill="#999" /><rect x="14.5" y="240.6" width="19.6" height="5.2" fill="#9c9c9c" /><rect x="15.1" y="241.0" width="2.4" height="1.9" fill="#d2d2d2" /><rect x="15.7" y="241.5" width="1.2" height="1" fill="#666" /><rect x="18.2" y="241.0" width="2.4" height="1.9" fill="#d2d2d2" /><rect x="18.8" y="241.5" width="1.2" height="1" fill="#666" /><rect x="21.3" y="241.0" width="2.4" height="1.9" fill="#d2d2d2" /><rect x="21.9" y="241.5" width="1.2" height="1" fill="#666" /><rect x="24.4" y="241.0" width="2.4" height="1.9" fill="#d2d2d2" /><rect x="25.0" y="241.5" width="1.2" height="1" fill="#666" /><rect x="27.5" y="241.0" width="2.4" height="1.9" fill="#d2d2d2" /><rect x="28.1" y="241.5" width="1.2" height="1" fill="#666" /><rect x="30.6" y="241.0" width="2.4" height="1.9" fill="#d2d2d2" /><rect x="31.2" y="241.5" width="1.2" height="1" fill="#666" /><rect x="15.1" y="243.5" width="2.4" height="1.9" fill="#d2d2d2" /><rect x="15.7" y="244.0" width="1.2" height="1" fill="#666" /><rect x="18.2" y="243.5" width="2.4" height="1.9" fill="#d2d2d2" /><rect x="18.8" y="244.0" width="1.2" height="1" fill="#666" /><rect x="21.3" y="243.5" width="2.4" height="1.9" fill="#d2d2d2" /><rect x="21.9" y="244.0" width="1.2" height="1" fill="#666" /><rect x="24.4" y="243.5" width="2.4" height="1.9" fill="#d2d2d2" /><rect x="25.0" y="244.0" width="1.2" height="1" fill="#666" /><rect x="27.5" y="243.5" width="2.4" height="1.9" fill="#d2d2d2" /><rect x="28.1" y="244.0" width="1.2" height="1" fill="#666" /><rect x="30.6" y="243.5" width="2.4" height="1.9" fill="#d2d2d2" /><rect x="31.2" y="244.0" width="1.2" height="1" fill="#666" /><rect x="36.0" y="240.6" width="19.6" height="5.2" fill="#9c9c9c" /><rect x="36.6" y="241.0" width="2.4" height="1.9" fill="#d2d2d2" /><rect x="37.2" y="241.5" width="1.2" height="1" fill="#666" /><rect x="39.7" y="241.0" width="2.4" height="1.9" fill="#d2d2d2" /><rect x="40.3" y="241.5" width="1.2" height="1" fill="#666" /><rect x="42.8" y="241.0" width="2.4" height="1.9" fill="#d2d2d2" /><rect x="43.4" y="241.5" width="1.2" height="1" fill="#666" /><rect x="45.9" y="241.0" width="2.4" height="1.9" fill="#d2d2d2" /><rect x="46.5" y="241.5" width="1.2" height="1" fill="#666" /><rect x="49.0" y="241.0" width="2.4" height="1.9" fill="#d2d2d2" /><rect x="49.6" y="241.5" width="1.2" height="1" fill="#666" /><rect x="52.1" y="241.0" width="2.4" height="1.9" fill="#d2d2d2" /><rect x="52.7" y="241.5" width="1.2" height="1" fill="#666" /><rect x="36.6" y="243.5" width="2.4" height="1.9" fill="#d2d2d2" /><rect x="37.2" y="244.0" width="1.2" height="1" fill="#666" /><rect x="39.7" y="243.5" width="2.4" height="1.9" fill="#d2d2d2" /><rect x="40.3" y="244.0" width="1.2" height="1" fill="#666" /><rect x="42.8" y="243.5" width="2.4" height="1.9" fill="#d2d2d2" /><rect x="43.4" y="244.0" width="1.2" height="1" fill="#666" /><rect x="45.9" y="243.5" width="2.4" height="1.9" fill="#d2d2d2" /><rect x="46.5" y="244.0" width="1.2" height="1" fill="#666" /><rect x="49.0" y="243.5" width="2.4" height="1.9" fill="#d2d2d2" /><rect x="49.6" y="244.0" width="1.2" height="1" fill="#666" /><rect x="52.1" y="243.5" width="2.4" height="1.9" fill="#d2d2d2" /><rect x="52.7" y="244.0" width="1.2" height="1" fill="#666" /><rect x="59.5" y="240.6" width="19.6" height="5.2" fill="#9c9c9c" /><rect x="60.1" y="241.0" width="2.4" height="1.9" fill="#d2d2d2" /><rect x="60.7" y="241.5" width="1.2" height="1" fill="#666" /><rect x="63.2" y="241.0" width="2.4" height="1.9" fill="#d2d2d2" /><rect x="63.8" y="241.5" width="1.2" height="1" fill="#666" /><rect x="66.3" y="241.0" width="2.4" height="1.9" fill="#d2d2d2" /><rect x="66.9" y="241.5" width="1.2" height="1" fill="#666" /><rect x="69.4" y="241.0" width="2.4" height="1.9" fill="#d2d2d2" /><rect x="70.0" y="241.5" width="1.2" height="1" fill="#666" /><rect x="72.5" y="241.0" width="2.4" height="1.9" fill="#d2d2d2" /><rect x="73.1" y="241.5" width="1.2" height="1" fill="#666" /><rect x="75.6" y="241.0" width="2.4" height="1.9" fill="#d2d2d2" /><rect x="76.2" y="241.5" width="1.2" height="1" fill="#666" /><rect x="60.1" y="243.5" width="2.4" height="1.9" fill="#d2d2d2" /><rect x="60.7" y="244.0" width="1.2" height="1" fill="#666" /><rect x="63.2" y="243.5" width="2.4" height="1.9" fill="#d2d2d2" /><rect x="63.8" y="244.0" width="1.2" height="1" fill="#666" /><rect x="66.3" y="243.5" width="2.4" height="1.9" fill="#d2d2d2" /><rect x="66.9" y="244.0" width="1.2" height="1" fill="#666" /><rect x="69.4" y="243.5" width="2.4" height="1.9" fill="#d2d2d2" /><rect x="70.0" y="244.0" width="1.2" height="1" fill="#666" /><rect x="72.5" y="243.5" width="2.4" height="1.9" fill="#d2d2d2" /><rect x="73.1" y="244.0" width="1.2" height="1" fill="#666" /><rect x="75.6" y="243.5" width="2.4" height="1.9" fill="#d2d2d2" /><rect x="76.2" y="244.0" width="1.2" height="1" fill="#666" /><rect x="81.0" y="240.6" width="19.6" height="5.2" fill="#9c9c9c" /><rect x="81.6" y="241.0" width="2.4" height="1.9" fill="#d2d2d2" /><rect x="82.2" y="241.5" width="1.2" height="1" fill="#666" /><rect x="84.7" y="241.0" width="2.4" height="1.9" fill="#d2d2d2" /><rect x="85.3" y="241.5" width="1.2" height="1" fill="#666" /><rect x="87.8" y="241.0" width="2.4" height="1.9" fill="#d2d2d2" /><rect x="88.4" y="241.5" width="1.2" height="1" fill="#666" /><rect x="90.9" y="241.0" width="2.4" height="1.9" fill="#d2d2d2" /><rect x="91.5" y="241.5" width="1.2" height="1" fill="#666" /><rect x="94.0" y="241.0" width="2.4" height="1.9" fill="#d2d2d2" /><rect x="94.6" y="241.5" width="1.2" height="1" fill="#666" /><rect x="97.1" y="241.0" width="2.4" height="1.9" fill="#d2d2d2" /><rect x="97.7" y="241.5" width="1.2" height="1" fill="#666" /><rect x="81.6" y="243.5" width="2.4" height="1.9" fill="#d2d2d2" /><rect x="82.2" y="244.0" width="1.2" height="1" fill="#666" /><rect x="84.7" y="243.5" width="2.4" height="1.9" fill="#d2d2d2" /><rect x="85.3" y="244.0" width="1.2" height="1" fill="#666" /><rect x="87.8" y="243.5" width="2.4" height="1.9" fill="#d2d2d2" /><rect x="88.4" y="244.0" width="1.2" height="1" fill="#666" /><rect x="90.9" y="243.5" width="2.4" height="1.9" fill="#d2d2d2" /><rect x="91.5" y="244.0" width="1.2" height="1" fill="#666" /><rect x="94.0" y="243.5" width="2.4" height="1.9" fill="#d2d2d2" /><rect x="94.6" y="244.0" width="1.2" height="1" fill="#666" /><rect x="97.1" y="243.5" width="2.4" height="1.9" fill="#d2d2d2" /><rect x="97.7" y="244.0" width="1.2" height="1" fill="#666" /><rect x="11.6" y="255.7" width="89.8" height="16.1" fill="#5c5c5c" /><rect x="11.6" y="255.7" width="89.8" height="1" fill="#808080" /><rect x="18.6" y="257.3" width="76" height="13.1" fill="#222" /><rect x="19.6" y="258.1" width="17.4" height="3.4" fill="#3a3a3a" /><rect x="20.2" y="258.5" width="3" height="2.6" fill="#0c0c0c" /><rect x="25.6" y="259.0" width="10" height="1.5" fill="#b2b2b2" /><rect x="38.4" y="258.1" width="17.4" height="3.4" fill="#3a3a3a" /><rect x="39.0" y="258.5" width="3" height="2.6" fill="#0c0c0c" /><rect x="44.4" y="259.0" width="10" height="1.5" fill="#b2b2b2" /><rect x="57.2" y="258.1" width="17.4" height="3.4" fill="#3a3a3a" /><rect x="57.8" y="258.5" width="3" height="2.6" fill="#0c0c0c" /><rect x="63.2" y="259.0" width="10" height="1.5" fill="#b2b2b2" /><rect x="76.0" y="258.1" width="17.4" height="3.4" fill="#3a3a3a" /><rect x="76.6" y="258.5" width="3" height="2.6" fill="#0c0c0c" /><rect x="82.0" y="259.0" width="10" height="1.5" fill="#b2b2b2" /><rect x="19.6" y="262.45" width="17.4" height="3.4" fill="#3a3a3a" /><rect x="20.2" y="262.85" width="3" height="2.6" fill="#0c0c0c" /><rect x="25.6" y="263.35" width="10" height="1.5" fill="#b2b2b2" /><rect x="38.4" y="262.45" width="17.4" height="3.4" fill="#3a3a3a" /><rect x="39.0" y="262.85" width="3" height="2.6" fill="#0c0c0c" /><rect x="44.4" y="263.35" width="10" height="1.5" fill="#b2b2b2" /><rect x="57.2" y="262.45" width="17.4" height="3.4" fill="#3a3a3a" /><rect x="57.8" y="262.85" width="3" height="2.6" fill="#0c0c0c" /><rect x="63.2" y="263.35" width="10" height="1.5" fill="#b2b2b2" /><rect x="76.0" y="262.45" width="17.4" height="3.4" fill="#3a3a3a" /><rect x="76.6" y="262.85" width="3" height="2.6" fill="#0c0c0c" /><rect x="82.0" y="263.35" width="10" height="1.5" fill="#b2b2b2" /><rect x="19.6" y="266.8" width="17.4" height="3.4" fill="#3a3a3a" /><rect x="20.2" y="267.2" width="3" height="2.6" fill="#0c0c0c" /><rect x="25.6" y="267.7" width="10" height="1.5" fill="#b2b2b2" /><rect x="38.4" y="266.8" width="17.4" height="3.4" fill="#3a3a3a" /><rect x="39.0" y="267.2" width="3" height="2.6" fill="#0c0c0c" /><rect x="44.4" y="267.7" width="10" height="1.5" fill="#b2b2b2" /><rect x="57.2" y="266.8" width="17.4" height="3.4" fill="#3a3a3a" /><rect x="57.8" y="267.2" width="3" height="2.6" fill="#0c0c0c" /><rect x="63.2" y="267.7" width="10" height="1.5" fill="#b2b2b2" /><rect x="76.0" y="266.8" width="17.4" height="3.4" fill="#3a3a3a" /><rect x="76.6" y="267.2" width="3" height="2.6" fill="#0c0c0c" /><rect x="82.0" y="267.7" width="10" height="1.5" fill="#b2b2b2" /><rect x="11.6" y="280.45" width="89.8" height="24.35" fill="#3a3a3a" /><rect x="11.6" y="280.45" width="89.8" height="0.8" fill="#7a7a7a" /><rect x="15.6" y="282.25" width="18.6" height="4.3" fill="#cecece" rx="1.2"/><rect x="16.8" y="283.15" width="10.4" height="2.5" fill="#7a7a7a" rx="1.2"/><rect x="18.2" y="283.95" width="7.6" height="0.9" fill="#bdbdbd" rx=".4"/><rect x="27.8" y="282.95" width="3" height="2.9" fill="#3c3c3c" /><circle cx="32.0" cy="284.4" r="1.1" fill="#777"/><rect x="36.0" y="282.25" width="18.6" height="4.3" fill="#cecece" rx="1.2"/><rect x="37.2" y="283.15" width="10.4" height="2.5" fill="#7a7a7a" rx="1.2"/><rect x="38.6" y="283.95" width="7.6" height="0.9" fill="#bdbdbd" rx=".4"/><rect x="48.2" y="282.95" width="3" height="2.9" fill="#3c3c3c" /><circle cx="52.4" cy="284.4" r="1.1" fill="#777"/><rect x="56.4" y="282.25" width="18.6" height="4.3" fill="#cecece" rx="1.2"/><rect x="57.6" y="283.15" width="10.4" height="2.5" fill="#7a7a7a" rx="1.2"/><rect x="59.0" y="283.95" width="7.6" height="0.9" fill="#bdbdbd" rx=".4"/><rect x="68.6" y="282.95" width="3" height="2.9" fill="#3c3c3c" /><circle cx="72.8" cy="284.4" r="1.1" fill="#777"/><rect x="15.6" y="287.8" width="18.6" height="4.3" fill="#cecece" rx="1.2"/><rect x="16.8" y="288.7" width="10.4" height="2.5" fill="#7a7a7a" rx="1.2"/><rect x="18.2" y="289.5" width="7.6" height="0.9" fill="#bdbdbd" rx=".4"/><rect x="27.8" y="288.5" width="3" height="2.9" fill="#3c3c3c" /><circle cx="32.0" cy="289.95" r="1.1" fill="#777"/><rect x="36.0" y="287.8" width="18.6" height="4.3" fill="#cecece" rx="1.2"/><rect x="37.2" y="288.7" width="10.4" height="2.5" fill="#7a7a7a" rx="1.2"/><rect x="38.6" y="289.5" width="7.6" height="0.9" fill="#bdbdbd" rx=".4"/><rect x="48.2" y="288.5" width="3" height="2.9" fill="#3c3c3c" /><circle cx="52.4" cy="289.95" r="1.1" fill="#777"/><rect x="56.4" y="287.8" width="18.6" height="4.3" fill="#cecece" rx="1.2"/><rect x="57.6" y="288.7" width="10.4" height="2.5" fill="#7a7a7a" rx="1.2"/><rect x="59.0" y="289.5" width="7.6" height="0.9" fill="#bdbdbd" rx=".4"/><rect x="68.6" y="288.5" width="3" height="2.9" fill="#3c3c3c" /><circle cx="72.8" cy="289.95" r="1.1" fill="#777"/><rect x="76.8" y="287.8" width="18.6" height="4.3" fill="#cecece" rx="1.2"/><rect x="78.0" y="288.7" width="10.4" height="2.5" fill="#7a7a7a" rx="1.2"/><rect x="79.4" y="289.5" width="7.6" height="0.9" fill="#bdbdbd" rx=".4"/><rect x="89.0" y="288.5" width="3" height="2.9" fill="#3c3c3c" /><circle cx="93.2" cy="289.95" r="1.1" fill="#777"/><rect x="15.6" y="293.35" width="18.6" height="4.3" fill="#cecece" rx="1.2"/><rect x="16.8" y="294.25" width="10.4" height="2.5" fill="#7a7a7a" rx="1.2"/><rect x="18.2" y="295.05" width="7.6" height="0.9" fill="#bdbdbd" rx=".4"/><rect x="27.8" y="294.05" width="3" height="2.9" fill="#3c3c3c" /><circle cx="32.0" cy="295.5" r="1.1" fill="#777"/><rect x="36.0" y="293.35" width="18.6" height="4.3" fill="#cecece" rx="1.2"/><rect x="37.2" y="294.25" width="10.4" height="2.5" fill="#7a7a7a" rx="1.2"/><rect x="38.6" y="295.05" width="7.6" height="0.9" fill="#bdbdbd" rx=".4"/><rect x="48.2" y="294.05" width="3" height="2.9" fill="#3c3c3c" /><circle cx="52.4" cy="295.5" r="1.1" fill="#777"/><rect x="56.4" y="293.35" width="18.6" height="4.3" fill="#cecece" rx="1.2"/><rect x="57.6" y="294.25" width="10.4" height="2.5" fill="#7a7a7a" rx="1.2"/><rect x="59.0" y="295.05" width="7.6" height="0.9" fill="#bdbdbd" rx=".4"/><rect x="68.6" y="294.05" width="3" height="2.9" fill="#3c3c3c" /><circle cx="72.8" cy="295.5" r="1.1" fill="#777"/><rect x="76.8" y="293.35" width="18.6" height="4.3" fill="#cecece" rx="1.2"/><rect x="78.0" y="294.25" width="10.4" height="2.5" fill="#7a7a7a" rx="1.2"/><rect x="79.4" y="295.05" width="7.6" height="0.9" fill="#bdbdbd" rx=".4"/><rect x="89.0" y="294.05" width="3" height="2.9" fill="#3c3c3c" /><circle cx="93.2" cy="295.5" r="1.1" fill="#777"/><rect x="15.6" y="298.9" width="18.6" height="4.3" fill="#cecece" rx="1.2"/><rect x="16.8" y="299.8" width="10.4" height="2.5" fill="#7a7a7a" rx="1.2"/><rect x="18.2" y="300.6" width="7.6" height="0.9" fill="#bdbdbd" rx=".4"/><rect x="27.8" y="299.6" width="3" height="2.9" fill="#3c3c3c" /><circle cx="32.0" cy="301.05" r="1.1" fill="#777"/><rect x="36.0" y="298.9" width="18.6" height="4.3" fill="#cecece" rx="1.2"/><rect x="37.2" y="299.8" width="10.4" height="2.5" fill="#7a7a7a" rx="1.2"/><rect x="38.6" y="300.6" width="7.6" height="0.9" fill="#bdbdbd" rx=".4"/><rect x="48.2" y="299.6" width="3" height="2.9" fill="#3c3c3c" /><circle cx="52.4" cy="301.05" r="1.1" fill="#777"/><rect x="56.4" y="298.9" width="18.6" height="4.3" fill="#cecece" rx="1.2"/><rect x="57.6" y="299.8" width="10.4" height="2.5" fill="#7a7a7a" rx="1.2"/><rect x="59.0" y="300.6" width="7.6" height="0.9" fill="#bdbdbd" rx=".4"/><rect x="68.6" y="299.6" width="3" height="2.9" fill="#3c3c3c" /><circle cx="72.8" cy="301.05" r="1.1" fill="#777"/><rect x="76.8" y="298.9" width="18.6" height="4.3" fill="#cecece" rx="1.2"/><rect x="78.0" y="299.8" width="10.4" height="2.5" fill="#7a7a7a" rx="1.2"/><rect x="79.4" y="300.6" width="7.6" height="0.9" fill="#bdbdbd" rx=".4"/><rect x="89.0" y="299.6" width="3" height="2.9" fill="#3c3c3c" /><circle cx="93.2" cy="301.05" r="1.1" fill="#777"/><rect x="76.8" y="282.25" width="3" height="4.3" fill="#e4e4e4" rx="1"/><rect x="80.4" y="281.45" width="16" height="7.4" fill="#2a2a2a" stroke="#666" stroke-width=".4"/><rect x="81.8" y="282.55" width="12.5" height="2.8" fill="#3ab6f2" /><rect x="82.3" y="286.55" width="1.8" height="1" fill="#aaa" /><rect x="85.3" y="286.55" width="1.8" height="1" fill="#aaa" /><rect x="88.3" y="286.55" width="1.8" height="1" fill="#aaa" /><rect x="91.3" y="286.55" width="1.8" height="1" fill="#aaa" /><defs><linearGradient id="ups" x1="0" y1="0" x2="1" y2="1"><stop offset="0" stop-color="#c8c8c8"/><stop offset=".5" stop-color="#aeaeae"/><stop offset="1" stop-color="#c6c6c6"/></linearGradient></defs><rect x="12.2" y="330.35" width="88.6" height="24.35" fill="#e6e6e6" stroke="#8a8a8a" stroke-width=".5"/><rect x="14.0" y="331.55" width="41.8" height="21.95" fill="url(#ups)" stroke="#959595" stroke-width=".5"/><rect x="57.0" y="331.55" width="42" height="21.95" fill="url(#ups)" stroke="#959595" stroke-width=".5"/></g></svg><div class="t" style="left:510px;top:110.8px;font-size:6.55px;color:#2c2c2c">1U Ethernet Switch/Hub</div>
<div class="t" style="left:510px;top:119.19999999999999px;font-size:6.55px;color:#2c2c2c">1U KVM Switch</div>
<div class="t" style="left:510px;top:127.79999999999998px;font-size:6.55px;color:#2c2c2c">C3560 Switch</div>
<div class="t" style="left:510px;top:164.6px;font-size:6.55px;color:#2c2c2c">2U Server</div>
<div class="t" style="left:510px;top:181.1px;font-size:6.55px;color:#2c2c2c">2U Server</div>
<div class="t" style="left:510px;top:201.9px;font-size:6.55px;color:#2c2c2c">1U Power Strip</div>
<div class="t" style="left:510px;top:268.1px;font-size:6.55px;color:#2c2c2c">3U Server</div>
<div class="t" style="left:510px;top:292.6px;font-size:6.55px;color:#2c2c2c">3U Server</div>
<div class="t" style="left:510px;top:325.90000000000003px;font-size:6.55px;color:#2c2c2c">1U Patch Panel</div>
<div class="t" style="left:510px;top:342.6px;font-size:6.55px;color:#2c2c2c">1U Patch Panel</div>
<div class="t" style="left:510px;top:363.1px;font-size:6.55px;color:#2c2c2c">2U RAID Array</div>
<div class="t" style="left:510px;top:392.1px;font-size:6.55px;color:#2c2c2c">3U Server</div>
<div class="t" style="left:510px;top:441.1px;font-size:6.55px;color:#2c2c2c">UPS</div>
<div class="abs" style="left:165px;top:486px;width:553px;height:11px;background:#fafafa;border-top:1px solid #dcdcdc"></div>
<div class="abs" style="left:165px;top:486px;width:13px;height:11px;background:linear-gradient(#fff,#e2e2e2);border-top:1px solid #999;border-right:1.5px solid #222"></div>
<div class="abs" style="left:169.2px;top:489px;width:1px;height:5px;background:#444"></div><div class="abs" style="left:171.8px;top:489px;width:1px;height:5px;background:#444"></div>
<div class="abs" style="left:178.5px;top:486px;width:32px;height:11px;background:linear-gradient(#fff,#e4e4e4);border-top:1px solid #cfcfcf"></div>
<div class="abs" style="left:193.5px;top:486.5px;width:1px;height:10px;background:#dadada"></div>
<svg style="left:183.5px;top:488.5px" width="5" height="6" viewBox="0 0 5 6"><path d="M5 0L0 3L5 6z" fill="#b4b4b4"/></svg>
<svg style="left:200.5px;top:488.5px" width="5" height="6" viewBox="0 0 5 6"><path d="M0 0L5 3L0 6z" fill="#222"/></svg>
<div class="abs" style="left:210.5px;top:486px;width:69px;height:11px;background:#fff;border:1px solid #c6c6c6;border-bottom:none"></div>
<div class="t" style="left:214px;top:487.2px;font-size:7.9px;color:#0a0a0a;-webkit-text-stroke:.12px #111">Custom 60%</div>
<svg style="left:269.8px;top:487.6px" width="6.6" height="9" viewBox="0 0 6.6 9"><path d="M.8 3.3L3.3 .9 5.8 3.3M.8 5.7L3.3 8.1 5.8 5.7" stroke="#1a1a1a" stroke-width="1.1" fill="none"/></svg>
<div class="abs" style="left:279.5px;top:486.5px;width:32px;height:10.5px;background:linear-gradient(#8ec8f8,#cfe8ff 50%,#7fc0f4);border:1px solid #6aa8e0"></div>
<div class="abs" style="left:284.0px;top:488.3px;width:5.6px;height:7px;background:#f4faff;border:1px solid #6f7f9a;border-radius:1px"></div>
<div class="abs" style="left:292.3px;top:488.3px;width:5.6px;height:7px;background:#f4faff;border:1px solid #6f7f9a;border-radius:1px"></div>
<div class="abs" style="left:300.6px;top:488.3px;width:5.6px;height:7px;background:#f4faff;border:1px solid #6f7f9a;border-radius:1px"></div>
<div class="abs" style="left:328px;top:489.3px;width:367px;height:5px;border-radius:2.5px;background:#c1c1c1"></div>
<svg style="left:698px;top:486.5px" width="20" height="10.5" viewBox="0 0 20 10.5"><rect x=".5" y=".5" width="8.5" height="9.5" fill="#fff" stroke="#4a68b8" stroke-width=".8" stroke-dasharray="1 1"/><path d="M2 5.2h6M2 5.2l1.6-1.6M2 5.2l1.6 1.6M8 5.2L6.4 3.6M8 5.2L6.4 6.8" stroke="#2a5ac0" stroke-width=".9" fill="none"/><rect x="11" y=".5" width="8" height="9.5" fill="#fff" stroke="#4a68b8" stroke-width=".8" stroke-dasharray="1 1"/><rect x="13" y="2.5" width="4" height="5.5" fill="none" stroke="#3a5ab0" stroke-width=".8"/></svg>
<div class="abs" style="left:0;top:497px;width:718px;height:12.5px;background:#ececec;border-top:1px solid #d4d4d4"></div><div class="t" style="left:6px;top:497.6px;font-size:8.3px;color:#0a0a0a;-webkit-text-stroke:.15px #111">Ready</div>
</div>
</body></html>
